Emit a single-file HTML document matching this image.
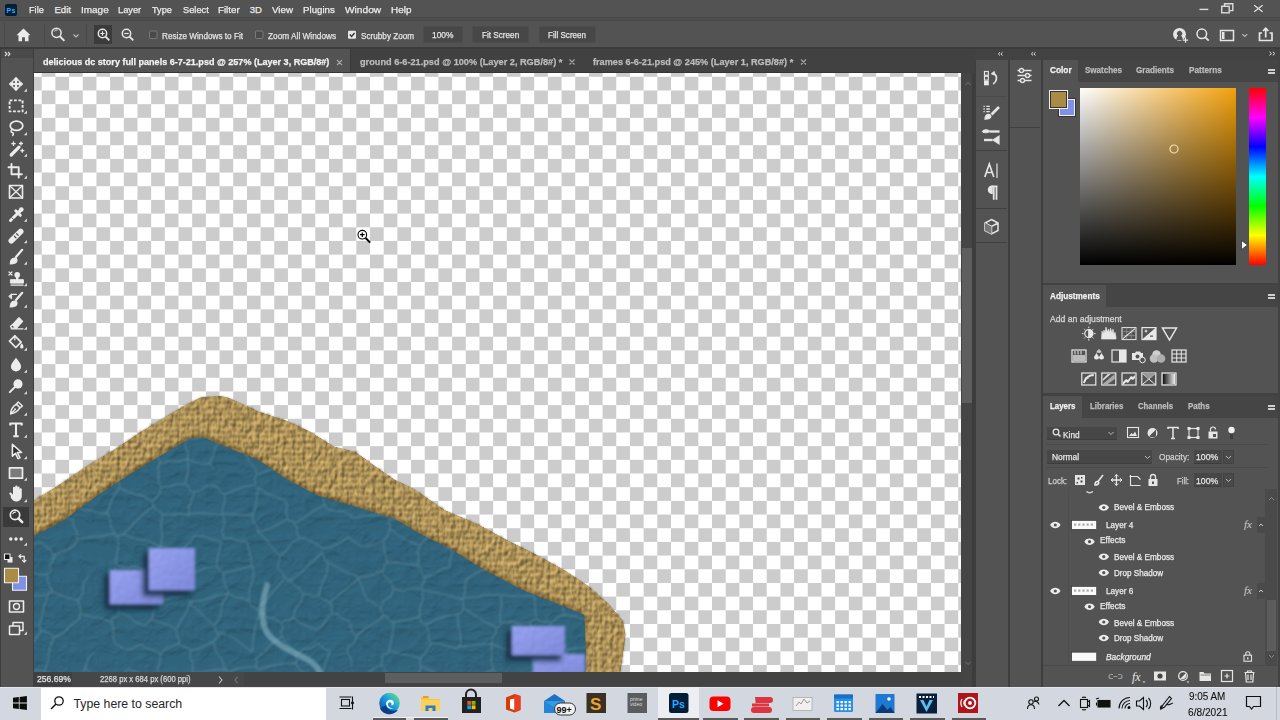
<!DOCTYPE html>
<html><head><meta charset="utf-8">
<style>
*{margin:0;padding:0;box-sizing:border-box}
html,body{width:1280px;height:720px;overflow:hidden;background:#535353;font-family:"Liberation Sans",sans-serif}
.a{position:absolute}
.t{position:absolute;white-space:nowrap;line-height:1;color:#e8e8e8;-webkit-text-stroke:0.25px currentColor}
svg{position:absolute;overflow:visible}
</style></head><body>
<div class="a" style="left:0px;top:0px;width:1280px;height:18px;background:#535353;"></div>
<div class="a" style="left:0px;top:17px;width:1280px;height:4px;background:#4f4f4f;"></div>
<div class="a" style="left:0px;top:17px;width:1280px;height:1px;background:#474747;"></div>
<div class="a" style="left:0px;top:20px;width:1280px;height:1px;background:#494949;"></div>
<svg class="a" style="left:5px;top:4px" width="12" height="12" viewBox="0 0 12 12"><rect width="12" height="12" rx="2" fill="#001e36"/><text x="1.6" y="9" font-family="Liberation Sans" font-weight="bold" font-size="7.2" fill="#31a8ff">Ps</text></svg>
<div class="t" style="left:29.40px;top:5.00px;font-size:9.60px;font-weight:normal;font-style:normal;color:#ececec;transform:scaleX(0.958);transform-origin:0 0;">File</div>
<div class="t" style="left:54.40px;top:5.00px;font-size:9.60px;font-weight:normal;font-style:normal;color:#ececec;">Edit</div>
<div class="t" style="left:80.60px;top:5.00px;font-size:9.60px;font-weight:normal;font-style:normal;color:#ececec;transform:scaleX(1.038);transform-origin:0 0;">Image</div>
<div class="t" style="left:118.40px;top:5.00px;font-size:9.60px;font-weight:normal;font-style:normal;color:#ececec;transform:scaleX(0.967);transform-origin:0 0;">Layer</div>
<div class="t" style="left:152.00px;top:5.00px;font-size:9.60px;font-weight:normal;font-style:normal;color:#ececec;transform:scaleX(0.955);transform-origin:0 0;">Type</div>
<div class="t" style="left:182.50px;top:5.00px;font-size:9.60px;font-weight:normal;font-style:normal;color:#ececec;transform:scaleX(0.967);transform-origin:0 0;">Select</div>
<div class="t" style="left:218.20px;top:5.00px;font-size:9.60px;font-weight:normal;font-style:normal;color:#ececec;transform:scaleX(1.014);transform-origin:0 0;">Filter</div>
<div class="t" style="left:249.70px;top:5.00px;font-size:9.60px;font-weight:normal;font-style:normal;color:#ececec;">3D</div>
<div class="t" style="left:272.30px;top:5.00px;font-size:9.60px;font-weight:normal;font-style:normal;color:#ececec;transform:scaleX(1.017);transform-origin:0 0;">View</div>
<div class="t" style="left:303.10px;top:5.00px;font-size:9.60px;font-weight:normal;font-style:normal;color:#ececec;transform:scaleX(1.013);transform-origin:0 0;">Plugins</div>
<div class="t" style="left:344.80px;top:5.00px;font-size:9.60px;font-weight:normal;font-style:normal;color:#ececec;transform:scaleX(1.059);transform-origin:0 0;">Window</div>
<div class="t" style="left:391.20px;top:5.00px;font-size:9.60px;font-weight:normal;font-style:normal;color:#ececec;transform:scaleX(1.034);transform-origin:0 0;">Help</div>
<svg class="a" style="left:1190px;top:0" width="90" height="17" viewBox="0 0 90 17"><g stroke="#dcdcdc" stroke-width="1.4" fill="none"><line x1="9.5" y1="9.4" x2="18.3" y2="9.4"/><rect x="31.7" y="6.3" width="7.5" height="6.5"/><path d="M34.5 6.3V3.8h8.3v6.8h-3.6"/><path d="M64.2 5.2l8.4 6.5M72.6 5.2l-8.4 6.5"/></g></svg>
<div class="a" style="left:0px;top:21px;width:1280px;height:27px;background:#535353;"></div>
<div class="a" style="left:0px;top:47px;width:1280px;height:2px;background:#3c3c3c;"></div>
<div class="a" style="left:4px;top:22px;width:1px;height:24px;background:#4a4a4a;"></div>
<div class="a" style="left:44px;top:24px;width:1px;height:21px;background:#4a4a4a;"></div>
<div class="a" style="left:86px;top:24px;width:1px;height:21px;background:#4a4a4a;"></div>
<div class="a" style="left:94px;top:25px;width:18px;height:19px;background:#3b3b3b;"></div>
<svg class="a" style="left:0;top:20px" width="640" height="28" viewBox="0 20 640 28"><g stroke="#e6e6e6" fill="none" stroke-width="1.5"><path d="M16.5 35.3l7-6.8 7 6.8h-2v6h-3.6v-4h-2.8v4h-3.6v-6z" fill="#ececec" stroke="none"/><circle cx="56.5" cy="32.8" r="4.6"/><path d="M59.8 36.3l4.6 4.6" stroke-width="2"/><path d="M54.3 31.4a3 3 0 0 1 3.2-1.3" stroke-width="1"/><path d="M73.5 34.5l2.5 2.5 2.5-2.5" stroke="#bdbdbd" stroke-width="1.1"/><circle cx="102.5" cy="33.5" r="4.2"/><path d="M105.5 36.6l3.8 3.8" stroke-width="1.9"/><path d="M100.3 33.5h4.4M102.5 31.3v4.4" stroke-width="1.2"/><circle cx="126.5" cy="33.5" r="4.2"/><path d="M129.5 36.6l3.8 3.8" stroke-width="1.9"/><path d="M124.3 33.5h4.4" stroke-width="1.2"/><rect x="149.5" y="31" width="7.5" height="7.5" rx="1" stroke="#7a7a7a" stroke-width="1" fill="#4a4a4a"/><rect x="255.5" y="31" width="7.5" height="7.5" rx="1" stroke="#7a7a7a" stroke-width="1" fill="#4a4a4a"/><rect x="348" y="30.8" width="8" height="8" rx="1.2" fill="#e6e6e6" stroke="none"/><path d="M349.8 34.6l1.8 1.8 3-3.4" stroke="#333" stroke-width="1.4"/></g></svg>
<div class="t" style="left:161.60px;top:32.00px;font-size:9.10px;font-weight:normal;font-style:normal;color:#e4e4e4;transform:scaleX(0.901);transform-origin:0 0;">Resize Windows to Fit</div>
<div class="t" style="left:267.50px;top:32.00px;font-size:9.10px;font-weight:normal;font-style:normal;color:#e4e4e4;transform:scaleX(0.911);transform-origin:0 0;">Zoom All Windows</div>
<div class="t" style="left:360.50px;top:32.00px;font-size:9.10px;font-weight:normal;font-style:normal;color:#e4e4e4;transform:scaleX(0.899);transform-origin:0 0;">Scrubby Zoom</div>
<div class="a" style="left:423px;top:26px;width:40px;height:17px;background:#474747;border:1px solid #4d4d4d"></div>
<div class="t" style="left:432.30px;top:31.00px;font-size:9.10px;font-weight:normal;font-style:normal;color:#e6e6e6;transform:scaleX(0.923);transform-origin:0 0;">100%</div>
<div class="a" style="left:472px;top:26px;width:57px;height:17px;background:#474747;border:1px solid #4d4d4d"></div>
<div class="t" style="left:482.20px;top:31.00px;font-size:9.10px;font-weight:normal;font-style:normal;color:#e6e6e6;transform:scaleX(0.897);transform-origin:0 0;">Fit Screen</div>
<div class="a" style="left:539px;top:26px;width:57px;height:17px;background:#474747;border:1px solid #4d4d4d"></div>
<div class="t" style="left:547.80px;top:31.00px;font-size:9.10px;font-weight:normal;font-style:normal;color:#e6e6e6;transform:scaleX(0.884);transform-origin:0 0;">Fill Screen</div>
<svg class="a" style="left:1160px;top:20px" width="120" height="28" viewBox="1160 20 120 28"><g stroke="#e6e6e6" fill="none" stroke-width="1.5"><circle cx="1179.5" cy="34.3" r="6.4" fill="#e6e6e6" stroke="none"/><path d="M1176.3 40c0-2.5 1.2-3.6 1.8-4.3a2.6 2.6 0 1 1 3 0c.6.7 1.8 1.8 1.8 4.3" fill="#555" stroke="none"/><path d="M1185.5 37.5v5.2M1182.9 40.1h5.2" stroke-width="1.2"/><circle cx="1201.8" cy="33.8" r="4.8"/><path d="M1205.3 37.3l3.4 3.4" stroke-width="1.8"/><rect x="1220.5" y="30.5" width="13" height="10"/><rect x="1222" y="32" width="2.5" height="7" fill="#e6e6e6" stroke="none"/><path d="M1242.3 34.2l2.5 2.2 2.5-2.2" stroke="#bdbdbd" stroke-width="1.1"/><path d="M1262 33h-2.5v7.5h12.5v-7.5h-2.5" stroke-width="1.7"/><path d="M1265.7 37.5v-9M1263 31l2.7-2.7 2.7 2.7" stroke-width="1.7"/></g></svg>
<div class="a" style="left:34px;top:49px;width:941px;height:24px;background:#414141;"></div>
<div class="a" style="left:34px;top:49px;width:316px;height:24px;background:#535353;"></div>
<div class="a" style="left:350px;top:49px;width:1px;height:24px;background:#3a3a3a;"></div>
<div class="a" style="left:34px;top:72px;width:927px;height:1px;background:#353535;"></div>
<div class="t" style="left:42.50px;top:57.00px;font-size:9.60px;font-weight:bold;font-style:normal;color:#f4f4f4;transform:scaleX(0.943);transform-origin:0 0;">delicious dc story full panels 6-7-21.psd @ 257% (Layer 3, RGB/8#)</div>
<svg class="a" style="left:330px;top:55px" width="500" height="14" viewBox="330 55 500 14"><path d="M337 60l5 5M342 60l-5 5M569.5 59.5l5 5M574.5 59.5l-5 5M801 59.5l5 5M806 59.5l-5 5" stroke="#a8a8a8" stroke-width="1.1" fill="none"/></svg>
<div class="t" style="left:359.50px;top:57.00px;font-size:9.60px;font-weight:bold;font-style:normal;color:#bcbcbc;transform:scaleX(0.957);transform-origin:0 0;">ground 6-6-21.psd @ 100% (Layer 2, RGB/8#) *</div>
<div class="t" style="left:592.70px;top:57.00px;font-size:9.60px;font-weight:bold;font-style:normal;color:#bcbcbc;transform:scaleX(0.954);transform-origin:0 0;">frames 6-6-21.psd @ 245% (Layer 1, RGB/8#) *</div>
<div class="a" style="left:0px;top:49px;width:34px;height:638px;background:#3e3e3e;"></div>
<div class="a" style="left:1px;top:58px;width:32px;height:629px;background:#535353;"></div>
<div class="a" style="left:1px;top:49px;width:32px;height:9px;background:#4a4a4a;"></div>
<svg class="a" style="left:4px;top:51px" width="8" height="6" viewBox="0 0 8 6"><path d="M1 1l2 2-2 2M4 1l2 2-2 2" stroke="#ddd" stroke-width="1.1" fill="none"/></svg>
<div class="a" style="left:3px;top:507px;width:26px;height:20px;background:#3a3a3a;"></div>
<svg class="a" style="left:0;top:0" width="34" height="687" viewBox="0 0 34 687"><g stroke="#ececec" fill="none" stroke-width="1.8" stroke-linecap="round" stroke-linejoin="round"><path d="M16 79v10M11 84h10" stroke-width="2.2"/><path d="M13.2 80.4l2.8-3.2 2.8 3.2zM13.2 87.6l2.8 3.2 2.8-3.2zM12.4 81.2l-3.2 2.8 3.2 2.8zM19.6 81.2l3.2 2.8-3.2 2.8z" fill="#ececec" stroke-width="1"/><path d="M23.8 91.8h3.2v-3.2z" fill="#d8d8d8" stroke="none"/><rect x="9.6" y="100.4" width="13" height="11" stroke-dasharray="2.8 1.6" stroke-linecap="butt" stroke-width="1.9"/><path d="M23.8 113.8h3.2v-3.2z" fill="#d8d8d8" stroke="none"/><ellipse cx="16.5" cy="125.7" rx="6.3" ry="4.6" stroke-width="1.7"/><path d="M12.2 129.3c-1.5 1.2-1.6 3 0 3.3 1.4.3 1.6 1.6.5 2.8" stroke-width="1.5"/><path d="M23.8 135.3h3.2v-3.2z" fill="#d8d8d8" stroke="none"/><path d="M11.2 155l7.8-7.8" stroke-width="3.2"/><path d="M13.5 142v3.4M11.8 143.7h3.4M21 142v3M19.5 143.5h3M22.3 149.2v3M20.8 150.7h3" stroke-width="1.3"/><path d="M23.8 156.8h3.2v-3.2z" fill="#d8d8d8" stroke="none"/><path d="M11.5 164v10.2h10.3M8.5 167.2h10.2v10.3" stroke-width="1.9"/><path d="M23.8 178.8h3.2v-3.2z" fill="#d8d8d8" stroke="none"/><rect x="9.5" y="185.5" width="13" height="12.5" stroke-width="1.6"/><path d="M9.5 185.5l13 12.5M22.5 185.5l-13 12.5" stroke-width="1.3"/><path d="M10.5 220.5l6.8-6.8" stroke-width="3"/><path d="M15.8 210.8l4.5 4.5" stroke-width="3"/><path d="M18.5 212.5l3-3" stroke-width="3.4"/><circle cx="21.3" cy="209.5" r="2.3" fill="#ececec" stroke="none"/><path d="M11.6 217.6l2.2 2.2" stroke="#535353" stroke-width="0.9"/><path d="M23.8 221.8h3.2v-3.2z" fill="#d8d8d8" stroke="none"/><path d="M11.3 240.8l9.4-9.4" stroke-width="5.6" stroke-linecap="round"/><path d="M14.3 236.1l1.6 1.6M16.6 233.8l1.6 1.6" stroke="#535353" stroke-width="1.3"/><path d="M23.8 243.3h3.2v-3.2z" fill="#d8d8d8" stroke="none"/><path d="M16 257l6.2-7.2" stroke-width="2.2"/><path d="M10.2 264c.1-3.5 1.6-6 4.3-6 1.6 0 2.7 1.1 2.5 2.7-.3 2.5-3.3 3.3-6.8 3.3z" fill="#ececec" stroke-width="1.1"/><path d="M23.8 264.8h3.2v-3.2z" fill="#d8d8d8" stroke="none"/><path d="M9 272.0l3 3M12 272.0l-3 3" stroke-width="1.2"/><circle cx="17.2" cy="274.9" r="2.8" fill="#ececec" stroke="none"/><path d="M17.2 277.5v2.5" stroke-width="2.4"/><path d="M10.8 279.7h12.6v3.4H10.8z" fill="#ececec" stroke-width="1"/><path d="M11 285.1h12.2" stroke-width="1.2"/><path d="M23.8 286.3h3.2v-3.2z" fill="#d8d8d8" stroke="none"/><path d="M16 300l6.2-7.2" stroke-width="2.2"/><path d="M10.2 307c.1-3.5 1.6-6 4.3-6 1.6 0 2.7 1.1 2.5 2.7-.3 2.5-3.3 3.3-6.8 3.3z" fill="#ececec" stroke-width="1.1"/><path d="M9 296.2l2.6-2.3v4.6z" fill="#ececec" stroke-width="1"/><path d="M12.5 294.4h3.8" stroke-width="1.3"/><path d="M23.8 307.8h3.2v-3.2z" fill="#d8d8d8" stroke="none"/><path d="M12.6 324.6l6.4-6.8 3.6 3.6-6.4 6.8z" fill="#ececec" stroke-width="1.3"/><path d="M12.6 324.6l3.6 3.6h-4.2l-1.6-1.6z" stroke-width="1.3"/><path d="M11 328.8h12" stroke-width="1.2"/><path d="M23.8 329.8h3.2v-3.2z" fill="#d8d8d8" stroke="none"/><path d="M9.5 341.2l5.3-5.3 6.3 6.3-5.3 5.3z" stroke-width="1.7"/><path d="M14.8 335.5v4.3" stroke-width="1.3"/><path d="M21.8 343.3c1.1 1.6 1.7 2.7 1.7 3.6a1.7 1.7 0 0 1-3.4 0c0-.9.6-2 1.7-3.6z" fill="#ececec" stroke="none"/><path d="M23.8 350.8h3.2v-3.2z" fill="#d8d8d8" stroke="none"/><path d="M16 357.7c2.7 3.7 5.1 6.2 5.1 8.8a5.1 5.1 0 0 1-10.2 0c0-2.6 2.4-5.1 5.1-8.8z" fill="#ececec" stroke="none"/><path d="M23.8 372.8h3.2v-3.2z" fill="#d8d8d8" stroke="none"/><circle cx="18" cy="383.9" r="4.6" fill="#ececec" stroke="none"/><path d="M14.8 387.1l-5 5" stroke-width="2"/><path d="M23.8 394.3h3.2v-3.2z" fill="#d8d8d8" stroke="none"/><path d="M10.8 413.8c0-4.2 1.6-7.3 5.6-9.7l3.6 3.6c-2.5 4-5.5 5.7-9.2 6.1z" stroke-width="1.6"/><path d="M16.4 404.1l1.8-2.2 4.2 4.2-2.2 1.6M10.8 413.8l3.4-3.4" stroke-width="1.4"/><circle cx="15" cy="409.3" r="1" fill="#ececec" stroke="none"/><path d="M23.8 415.8h3.2v-3.2z" fill="#d8d8d8" stroke="none"/><path d="M10.3 425.5v-2h11.4v2M16 423.5v12.8M13.3 436.3h5.4" stroke-width="2.1" stroke-linecap="butt"/><path d="M23.8 437.8h3.2v-3.2z" fill="#d8d8d8" stroke="none"/><path d="M12.4 444.3v12l3.1-3 2.6 5.3 1.8-.9-2.6-5.2h4.3z" fill="#2f2f2f" stroke-width="1.6"/><path d="M23.8 459.3h3.2v-3.2z" fill="#d8d8d8" stroke="none"/><rect x="9.5" y="467.8" width="13" height="10.4" fill="#7a7a7a" stroke-width="1.7"/><path d="M23.8 480.8h3.2v-3.2z" fill="#d8d8d8" stroke="none"/><path d="M10.8 495.7l-1.3-1.7c-.7-1 .7-2.1 1.6-1.2l1.9 2v-7a1.1 1.1 0 0 1 2.2 0v5.5-6.6a1.1 1.1 0 0 1 2.2 0v6.6-5.8a1.1 1.1 0 0 1 2.2 0v6-4.2a1.1 1.1 0 0 1 2.2 0v6.5c0 3.3-2.2 5.8-5.5 5.8-2.7 0-3.8-1.6-5.5-3.9z" fill="#ececec" stroke="none"/><path d="M23.8 502.3h3.2v-3.2z" fill="#d8d8d8" stroke="none"/><circle cx="15" cy="514.9" r="4.7" stroke-width="1.7"/><path d="M18.4 518.4l3.8 3.8" stroke-width="2.6"/><path d="M12.8 513.7a2.6 2.6 0 0 1 2.6-1.6" stroke-width="1.1"/><circle cx="10.8" cy="539" r="1.7" fill="#ececec" stroke="none"/><circle cx="16" cy="539" r="1.7" fill="#ececec" stroke="none"/><circle cx="21.2" cy="539" r="1.7" fill="#ececec" stroke="none"/><path d="M23.8 545.8h3.2v-3.2z" fill="#d8d8d8" stroke="none"/><rect x="7.5" y="557" width="5" height="5.5" fill="#ececec" stroke="none"/><rect x="4.5" y="554" width="5.5" height="5.5" fill="#111" stroke="#ececec" stroke-width="1.1"/><path d="M19.6 556.3h4.6v5.2" stroke-width="1.3"/><path d="M20.8 554.6l-1.9 1.7 1.9 1.7M22.5 560.3l1.7 1.9 1.7-1.9" stroke-width="1.2"/><rect x="12.5" y="576.3" width="14" height="14" fill="#8090e6" stroke="#f2f2f2" stroke-width="1.1"/><rect x="4.5" y="568.3" width="14" height="14.5" fill="#a98b46" stroke="#f2f2f2" stroke-width="1.1"/><rect x="9.5" y="601" width="14" height="11" stroke-width="1.6"/><circle cx="16.5" cy="606.5" r="3" stroke-width="1.3"/><rect x="13" y="622.5" width="10" height="8" stroke-width="1.5"/><rect x="9.5" y="626" width="10" height="8.5" fill="#535353" stroke-width="1.5"/><path d="M23.8 634.8h3.2v-3.2z" fill="#d8d8d8" stroke="none"/></g></svg>
<div class="a" style="left:34px;top:73px;width:927px;height:599px;background:conic-gradient(#ffffff 0 90deg,#cccccc 90deg 180deg,#ffffff 180deg 270deg,#cccccc 270deg) -5.98px 3.8px/27.36px 27.36px"></div>
<svg class="a" style="left:34px;top:73px" width="927" height="599" viewBox="0 0 927 599">
<defs>
<filter id="gbump" x="0" y="0" width="100%" height="100%" color-interpolation-filters="sRGB">
 <feTurbulence type="fractalNoise" baseFrequency="0.2 0.11" numOctaves="2" seed="4" result="n"/>
 <feDiffuseLighting in="n" surfaceScale="2.2" diffuseConstant="1" lighting-color="#ffffff" result="l"><feDistantLight azimuth="235" elevation="50"/></feDiffuseLighting>
 <feComposite in="SourceGraphic" in2="l" operator="arithmetic" k1="0.75" k2="0.45" k3="0" k4="0" result="c"/>
 <feComposite in="c" in2="SourceGraphic" operator="in"/>
</filter>
<filter id="bbump" x="0" y="0" width="100%" height="100%" color-interpolation-filters="sRGB">
 <feTurbulence type="turbulence" baseFrequency="0.035 0.045" numOctaves="3" seed="11" result="n"/>
 <feColorMatrix in="n" type="matrix" values="0 0 0 0 0  0 0 0 0 0  0 0 0 0 0  -2.5 0 0 0 1.2" result="cr"/>
 <feDiffuseLighting in="cr" surfaceScale="1.2" diffuseConstant="1.0" lighting-color="#ffffff" result="l"><feDistantLight azimuth="235" elevation="60"/></feDiffuseLighting>
 <feComposite in="SourceGraphic" in2="l" operator="arithmetic" k1="0.3" k2="0.74" k3="0" k4="0" result="c"/>
 <feComposite in="c" in2="SourceGraphic" operator="in"/>
</filter>
<filter id="sqf" x="0" y="0" width="100%" height="100%" color-interpolation-filters="sRGB">
 <feTurbulence type="fractalNoise" baseFrequency="0.2" numOctaves="2" seed="8" result="n"/>
 <feDiffuseLighting in="n" surfaceScale="1.2" diffuseConstant="1" lighting-color="#ffffff" result="l"><feDistantLight azimuth="235" elevation="60"/></feDiffuseLighting>
 <feComposite in="SourceGraphic" in2="l" operator="arithmetic" k1="0.3" k2="0.74" k3="0" k4="0" result="c"/>
 <feComposite in="c" in2="SourceGraphic" operator="in"/>
</filter>
<filter id="sh" x="-20%" y="-20%" width="140%" height="140%"><feGaussianBlur stdDeviation="2.5"/></filter>
<filter id="bl" x="-20%" y="-20%" width="140%" height="140%"><feGaussianBlur stdDeviation="0.9"/></filter>
<filter id="bl2" x="-20%" y="-20%" width="140%" height="140%"><feGaussianBlur stdDeviation="1.4"/></filter>
<pattern id="dots" width="5.3" height="5.6" patternUnits="userSpaceOnUse"><rect width="5.3" height="5.6" fill="#000" opacity="0"/><circle cx="2.6" cy="2.9" r="1.3" fill="#3c2a0c" opacity="0.75"/><circle cx="1.6" cy="1.8" r="0.9" fill="#f2dc9c" opacity="0.5"/></pattern>
<filter id="dblur" x="0" y="0" width="100%" height="100%"><feGaussianBlur stdDeviation="0.9"/></filter>
<clipPath id="cp"><rect width="927" height="599"/></clipPath>
</defs>
<g clip-path="url(#cp)">
<polygon points="0.0,427.6 24.9,412.0 51.6,394.0 80.4,376.4 107.0,358.7 129.3,345.3 151.6,332.0 167.0,324.2 187.0,323.0 195.0,324.8 224.4,338.4 253.5,348.0 275.0,358.0 300.0,373.4 321.6,379.0 341.0,393.0 360.5,406.5 380.0,416.0 411.7,437.6 442.6,450.4 470.8,465.8 501.7,481.3 530.0,496.7 553.0,512.0 573.7,530.0 589.0,548.0 591.6,561.0 589.0,581.5 586.5,599.0 586.5,617.0 -14.0,617.0 -14.0,427.0" fill="#2a2010" opacity="0.5" filter="url(#bl)" transform="translate(-0.5,0.5)"/>
<polygon points="0.0,427.6 24.9,412.0 51.6,394.0 80.4,376.4 107.0,358.7 129.3,345.3 151.6,332.0 167.0,324.2 187.0,323.0 195.0,324.8 224.4,338.4 253.5,348.0 275.0,358.0 300.0,373.4 321.6,379.0 341.0,393.0 360.5,406.5 380.0,416.0 411.7,437.6 442.6,450.4 470.8,465.8 501.7,481.3 530.0,496.7 553.0,512.0 573.7,530.0 589.0,548.0 591.6,561.0 589.0,581.5 586.5,599.0 586.5,617.0 -14.0,617.0 -14.0,427.0" fill="#b69a5e" filter="url(#gbump)"/>
<g fill="#f6e2a6" opacity="0.35" filter="url(#dblur)"><circle cx="168.1" cy="322.9" r="1.0"/><circle cx="171.9" cy="323.2" r="1.3"/><circle cx="178.3" cy="323.0" r="1.4"/><circle cx="183.8" cy="322.4" r="1.1"/><circle cx="187.7" cy="323.5" r="1.0"/><circle cx="156.3" cy="328.6" r="1.5"/><circle cx="161.2" cy="327.9" r="1.1"/><circle cx="166.5" cy="328.0" r="1.1"/><circle cx="173.3" cy="327.6" r="1.1"/><circle cx="178.2" cy="327.3" r="1.0"/><circle cx="184.4" cy="327.1" r="1.1"/><circle cx="188.5" cy="326.7" r="1.5"/><circle cx="192.8" cy="326.8" r="1.6"/><circle cx="199.1" cy="328.9" r="1.6"/><circle cx="145.7" cy="332.5" r="1.2"/><circle cx="152.3" cy="334.1" r="1.2"/><circle cx="157.1" cy="334.2" r="1.5"/><circle cx="160.9" cy="332.7" r="1.6"/><circle cx="166.8" cy="334.2" r="1.4"/><circle cx="173.5" cy="332.5" r="1.6"/><circle cx="178.8" cy="332.9" r="1.4"/><circle cx="182.0" cy="334.4" r="1.3"/><circle cx="189.1" cy="334.2" r="1.0"/><circle cx="194.7" cy="332.6" r="1.1"/><circle cx="199.0" cy="332.9" r="1.4"/><circle cx="203.7" cy="333.8" r="1.5"/><circle cx="210.8" cy="333.3" r="1.2"/><circle cx="215.2" cy="333.9" r="1.6"/><circle cx="135.6" cy="340.0" r="1.3"/><circle cx="140.1" cy="340.0" r="1.5"/><circle cx="145.2" cy="339.7" r="1.3"/><circle cx="150.6" cy="338.7" r="1.5"/><circle cx="155.9" cy="339.4" r="1.3"/><circle cx="162.1" cy="338.3" r="1.5"/><circle cx="167.4" cy="339.6" r="1.4"/><circle cx="172.2" cy="339.7" r="1.2"/><circle cx="178.9" cy="339.0" r="1.1"/><circle cx="183.1" cy="338.8" r="1.6"/><circle cx="188.0" cy="340.0" r="1.0"/><circle cx="192.9" cy="338.6" r="1.5"/><circle cx="199.3" cy="338.9" r="1.3"/><circle cx="205.2" cy="338.4" r="1.5"/><circle cx="209.4" cy="339.6" r="1.5"/><circle cx="214.8" cy="338.4" r="1.1"/><circle cx="219.7" cy="338.1" r="1.3"/><circle cx="225.9" cy="338.8" r="1.6"/><circle cx="232.0" cy="339.8" r="1.5"/><circle cx="131.4" cy="345.6" r="1.1"/><circle cx="134.5" cy="344.7" r="1.4"/><circle cx="141.5" cy="344.0" r="1.3"/><circle cx="146.0" cy="344.2" r="1.4"/><circle cx="151.5" cy="344.5" r="1.5"/><circle cx="156.2" cy="344.9" r="1.5"/><circle cx="161.6" cy="343.6" r="1.0"/><circle cx="168.0" cy="345.5" r="1.4"/><circle cx="171.5" cy="344.1" r="1.6"/><circle cx="178.0" cy="344.5" r="1.6"/><circle cx="184.3" cy="344.1" r="1.4"/><circle cx="189.3" cy="345.5" r="1.6"/><circle cx="194.4" cy="343.7" r="1.2"/><circle cx="198.4" cy="345.0" r="1.3"/><circle cx="205.5" cy="344.1" r="1.1"/><circle cx="208.6" cy="344.0" r="1.6"/><circle cx="215.3" cy="344.1" r="1.4"/><circle cx="220.7" cy="344.3" r="1.0"/><circle cx="226.1" cy="344.9" r="1.0"/><circle cx="230.9" cy="343.8" r="1.3"/><circle cx="236.8" cy="344.9" r="1.2"/><circle cx="242.1" cy="344.1" r="1.4"/><circle cx="246.3" cy="345.0" r="1.4"/><circle cx="115.4" cy="350.2" r="1.4"/><circle cx="120.7" cy="350.8" r="1.5"/><circle cx="125.5" cy="349.2" r="1.5"/><circle cx="130.7" cy="349.9" r="1.0"/><circle cx="135.1" cy="350.4" r="1.2"/><circle cx="141.0" cy="350.1" r="1.4"/><circle cx="147.1" cy="349.1" r="1.4"/><circle cx="152.1" cy="349.2" r="1.3"/><circle cx="157.4" cy="350.7" r="1.2"/><circle cx="161.6" cy="349.2" r="1.3"/><circle cx="168.1" cy="351.1" r="1.4"/><circle cx="172.6" cy="349.7" r="1.2"/><circle cx="177.1" cy="349.9" r="1.0"/><circle cx="183.1" cy="351.0" r="1.2"/><circle cx="189.4" cy="350.4" r="1.5"/><circle cx="195.0" cy="349.4" r="1.2"/><circle cx="198.3" cy="349.4" r="1.4"/><circle cx="203.2" cy="350.5" r="1.6"/><circle cx="209.5" cy="350.7" r="1.1"/><circle cx="215.6" cy="351.0" r="1.4"/><circle cx="221.3" cy="350.4" r="1.4"/><circle cx="224.4" cy="351.1" r="1.2"/><circle cx="231.4" cy="350.3" r="1.1"/><circle cx="236.1" cy="351.3" r="1.4"/><circle cx="240.6" cy="350.4" r="1.6"/><circle cx="245.7" cy="349.1" r="1.5"/><circle cx="252.3" cy="350.9" r="1.2"/><circle cx="257.6" cy="349.5" r="1.1"/><circle cx="262.8" cy="351.1" r="1.3"/><circle cx="104.3" cy="357.0" r="1.1"/><circle cx="110.2" cy="356.0" r="1.1"/><circle cx="114.9" cy="356.5" r="1.2"/><circle cx="119.8" cy="355.2" r="1.4"/><circle cx="124.2" cy="355.6" r="1.5"/><circle cx="130.9" cy="356.3" r="1.6"/><circle cx="136.2" cy="356.1" r="1.4"/><circle cx="139.9" cy="354.8" r="1.1"/><circle cx="146.7" cy="357.1" r="1.1"/><circle cx="152.6" cy="356.7" r="1.1"/><circle cx="156.8" cy="355.3" r="1.5"/><circle cx="161.7" cy="355.6" r="1.3"/><circle cx="166.8" cy="356.6" r="1.4"/><circle cx="171.5" cy="356.1" r="1.3"/><circle cx="178.9" cy="357.0" r="1.0"/><circle cx="183.8" cy="356.2" r="1.3"/><circle cx="187.6" cy="356.8" r="1.4"/><circle cx="194.1" cy="357.0" r="1.1"/><circle cx="198.8" cy="354.8" r="1.2"/><circle cx="205.6" cy="355.6" r="1.5"/><circle cx="210.6" cy="356.0" r="1.5"/><circle cx="214.3" cy="354.9" r="1.1"/><circle cx="219.3" cy="354.9" r="1.0"/><circle cx="224.6" cy="355.0" r="1.3"/><circle cx="230.4" cy="357.1" r="1.4"/><circle cx="237.2" cy="356.5" r="1.6"/><circle cx="242.6" cy="355.6" r="1.1"/><circle cx="245.8" cy="357.0" r="1.1"/><circle cx="253.3" cy="356.4" r="1.5"/><circle cx="256.3" cy="356.9" r="1.0"/><circle cx="263.4" cy="354.8" r="1.6"/><circle cx="266.9" cy="355.1" r="1.3"/><circle cx="98.8" cy="362.1" r="1.4"/><circle cx="104.2" cy="360.5" r="1.1"/><circle cx="109.9" cy="361.0" r="1.4"/><circle cx="114.8" cy="361.5" r="1.0"/><circle cx="119.8" cy="361.4" r="1.2"/><circle cx="124.8" cy="361.7" r="1.0"/><circle cx="129.9" cy="360.8" r="1.3"/><circle cx="134.7" cy="361.3" r="1.3"/><circle cx="140.0" cy="360.9" r="1.4"/><circle cx="146.4" cy="362.5" r="1.4"/><circle cx="151.6" cy="362.7" r="1.6"/><circle cx="156.7" cy="361.5" r="1.6"/><circle cx="161.7" cy="362.3" r="1.1"/><circle cx="166.5" cy="361.0" r="1.3"/><circle cx="172.3" cy="360.8" r="1.0"/><circle cx="176.9" cy="362.5" r="1.5"/><circle cx="183.9" cy="361.8" r="1.3"/><circle cx="188.4" cy="362.0" r="1.3"/><circle cx="194.7" cy="360.9" r="1.3"/><circle cx="199.8" cy="361.7" r="1.5"/><circle cx="205.0" cy="361.2" r="1.3"/><circle cx="208.6" cy="361.2" r="1.6"/><circle cx="214.0" cy="362.5" r="1.5"/><circle cx="221.0" cy="360.7" r="1.5"/><circle cx="226.7" cy="361.1" r="1.1"/><circle cx="230.1" cy="360.9" r="1.2"/><circle cx="235.2" cy="360.8" r="1.2"/><circle cx="242.1" cy="362.7" r="1.0"/><circle cx="247.8" cy="362.4" r="1.6"/><circle cx="252.1" cy="361.2" r="1.1"/><circle cx="256.9" cy="360.9" r="1.2"/><circle cx="262.5" cy="360.5" r="1.1"/><circle cx="267.8" cy="360.4" r="1.5"/><circle cx="273.8" cy="360.9" r="1.5"/><circle cx="279.7" cy="362.2" r="1.2"/><circle cx="93.4" cy="366.5" r="1.6"/><circle cx="98.8" cy="366.3" r="1.5"/><circle cx="104.3" cy="368.2" r="1.6"/><circle cx="109.0" cy="366.2" r="1.1"/><circle cx="113.2" cy="366.3" r="1.5"/><circle cx="118.4" cy="367.0" r="1.4"/><circle cx="124.2" cy="367.4" r="1.4"/><circle cx="130.3" cy="366.0" r="1.4"/><circle cx="134.5" cy="366.0" r="1.5"/><circle cx="141.6" cy="368.1" r="1.1"/><circle cx="145.6" cy="366.4" r="1.2"/><circle cx="182.3" cy="366.0" r="1.5"/><circle cx="187.8" cy="368.0" r="1.6"/><circle cx="193.1" cy="366.6" r="1.3"/><circle cx="198.6" cy="366.0" r="1.3"/><circle cx="203.5" cy="367.2" r="1.1"/><circle cx="210.0" cy="367.8" r="1.1"/><circle cx="216.0" cy="367.6" r="1.4"/><circle cx="220.7" cy="366.6" r="1.0"/><circle cx="226.0" cy="366.8" r="1.5"/><circle cx="230.2" cy="367.7" r="1.5"/><circle cx="236.7" cy="367.4" r="1.2"/><circle cx="242.6" cy="366.6" r="1.2"/><circle cx="247.7" cy="368.1" r="1.3"/><circle cx="251.0" cy="367.3" r="1.5"/><circle cx="258.5" cy="366.5" r="1.5"/><circle cx="263.3" cy="368.0" r="1.5"/><circle cx="268.4" cy="367.0" r="1.2"/><circle cx="273.7" cy="366.5" r="1.4"/><circle cx="277.6" cy="366.6" r="1.0"/><circle cx="282.9" cy="366.1" r="1.0"/><circle cx="288.4" cy="366.3" r="1.5"/><circle cx="83.0" cy="373.2" r="1.3"/><circle cx="87.7" cy="372.3" r="1.6"/><circle cx="92.8" cy="372.1" r="1.5"/><circle cx="98.4" cy="372.5" r="1.6"/><circle cx="102.7" cy="371.7" r="1.3"/><circle cx="107.9" cy="373.6" r="1.6"/><circle cx="113.8" cy="373.6" r="1.3"/><circle cx="119.7" cy="372.5" r="1.6"/><circle cx="124.5" cy="373.7" r="1.2"/><circle cx="129.6" cy="373.9" r="1.0"/><circle cx="134.6" cy="373.0" r="1.6"/><circle cx="192.9" cy="372.4" r="1.3"/><circle cx="199.0" cy="371.9" r="1.2"/><circle cx="203.7" cy="373.5" r="1.5"/><circle cx="210.8" cy="372.5" r="1.5"/><circle cx="214.3" cy="372.3" r="1.2"/><circle cx="219.8" cy="372.0" r="1.6"/><circle cx="225.5" cy="373.2" r="1.1"/><circle cx="231.4" cy="373.2" r="1.6"/><circle cx="235.6" cy="373.8" r="1.5"/><circle cx="240.7" cy="372.5" r="1.2"/><circle cx="248.0" cy="373.1" r="1.1"/><circle cx="252.1" cy="373.3" r="1.0"/><circle cx="258.0" cy="373.1" r="1.5"/><circle cx="261.9" cy="373.8" r="1.2"/><circle cx="268.4" cy="372.1" r="1.0"/><circle cx="272.2" cy="372.9" r="1.6"/><circle cx="279.0" cy="371.6" r="1.0"/><circle cx="285.1" cy="372.5" r="1.5"/><circle cx="289.8" cy="373.3" r="1.5"/><circle cx="294.2" cy="372.2" r="1.0"/><circle cx="72.4" cy="377.6" r="1.3"/><circle cx="76.3" cy="379.0" r="1.2"/><circle cx="81.7" cy="377.8" r="1.4"/><circle cx="87.7" cy="377.8" r="1.2"/><circle cx="92.7" cy="378.2" r="1.2"/><circle cx="98.8" cy="377.9" r="1.0"/><circle cx="102.7" cy="378.0" r="1.6"/><circle cx="108.8" cy="378.0" r="1.0"/><circle cx="114.3" cy="377.2" r="1.1"/><circle cx="118.9" cy="377.9" r="1.1"/><circle cx="124.1" cy="377.1" r="1.3"/><circle cx="210.1" cy="378.3" r="1.4"/><circle cx="215.3" cy="378.8" r="1.5"/><circle cx="220.8" cy="379.2" r="1.3"/><circle cx="226.4" cy="378.9" r="1.0"/><circle cx="231.0" cy="379.3" r="1.3"/><circle cx="235.9" cy="378.0" r="1.5"/><circle cx="241.1" cy="377.6" r="1.4"/><circle cx="248.0" cy="378.6" r="1.0"/><circle cx="251.1" cy="377.8" r="1.4"/><circle cx="258.4" cy="378.9" r="1.1"/><circle cx="263.1" cy="379.0" r="1.3"/><circle cx="267.3" cy="378.4" r="1.3"/><circle cx="272.9" cy="377.1" r="1.2"/><circle cx="279.2" cy="377.9" r="1.4"/><circle cx="283.7" cy="377.6" r="1.5"/><circle cx="290.2" cy="378.8" r="1.5"/><circle cx="294.3" cy="379.2" r="1.6"/><circle cx="300.0" cy="378.8" r="1.1"/><circle cx="304.0" cy="378.7" r="1.2"/><circle cx="309.9" cy="378.5" r="1.0"/><circle cx="315.9" cy="378.8" r="1.5"/><circle cx="319.8" cy="377.3" r="1.5"/><circle cx="67.1" cy="383.4" r="1.1"/><circle cx="71.9" cy="382.9" r="1.1"/><circle cx="77.9" cy="383.4" r="1.1"/><circle cx="82.5" cy="383.2" r="1.6"/><circle cx="87.8" cy="384.3" r="1.6"/><circle cx="93.1" cy="384.4" r="1.3"/><circle cx="99.2" cy="383.9" r="1.3"/><circle cx="104.7" cy="383.8" r="1.2"/><circle cx="109.9" cy="384.1" r="1.4"/><circle cx="114.2" cy="383.8" r="1.5"/><circle cx="220.0" cy="383.7" r="1.5"/><circle cx="225.9" cy="383.3" r="1.2"/><circle cx="231.0" cy="382.9" r="1.5"/><circle cx="236.8" cy="382.9" r="1.0"/><circle cx="240.4" cy="383.9" r="1.1"/><circle cx="246.7" cy="383.9" r="1.5"/><circle cx="252.2" cy="382.8" r="1.2"/><circle cx="258.1" cy="384.6" r="1.5"/><circle cx="263.2" cy="383.2" r="1.2"/><circle cx="267.6" cy="383.3" r="1.4"/><circle cx="272.8" cy="384.5" r="1.0"/><circle cx="279.0" cy="383.3" r="1.5"/><circle cx="284.8" cy="384.0" r="1.0"/><circle cx="288.2" cy="384.5" r="1.1"/><circle cx="294.6" cy="384.7" r="1.5"/><circle cx="301.0" cy="384.2" r="1.2"/><circle cx="305.2" cy="383.8" r="1.2"/><circle cx="311.6" cy="384.8" r="1.2"/><circle cx="316.8" cy="385.1" r="1.3"/><circle cx="321.2" cy="383.9" r="1.3"/><circle cx="327.0" cy="384.5" r="1.0"/><circle cx="56.7" cy="388.9" r="1.1"/><circle cx="61.7" cy="388.9" r="1.4"/><circle cx="67.3" cy="389.8" r="1.5"/><circle cx="71.3" cy="390.1" r="1.4"/><circle cx="77.0" cy="389.8" r="1.4"/><circle cx="81.7" cy="388.9" r="1.3"/><circle cx="87.1" cy="389.4" r="1.2"/><circle cx="93.2" cy="388.7" r="1.4"/><circle cx="98.9" cy="389.5" r="1.2"/><circle cx="103.0" cy="390.3" r="1.6"/><circle cx="109.7" cy="389.1" r="1.5"/><circle cx="231.4" cy="390.0" r="1.5"/><circle cx="237.4" cy="389.0" r="1.1"/><circle cx="241.7" cy="389.1" r="1.4"/><circle cx="247.6" cy="389.0" r="1.4"/><circle cx="253.0" cy="390.2" r="1.0"/><circle cx="257.0" cy="389.3" r="1.4"/><circle cx="262.6" cy="389.1" r="1.2"/><circle cx="268.3" cy="388.5" r="1.3"/><circle cx="274.3" cy="389.8" r="1.5"/><circle cx="279.3" cy="390.5" r="1.0"/><circle cx="282.9" cy="388.7" r="1.2"/><circle cx="288.1" cy="389.8" r="1.5"/><circle cx="295.1" cy="389.4" r="1.3"/><circle cx="299.3" cy="390.6" r="1.5"/><circle cx="305.9" cy="389.5" r="1.0"/><circle cx="309.5" cy="388.5" r="1.6"/><circle cx="314.7" cy="389.6" r="1.4"/><circle cx="321.8" cy="389.6" r="1.4"/><circle cx="326.0" cy="390.3" r="1.1"/><circle cx="330.8" cy="389.1" r="1.4"/><circle cx="46.5" cy="396.2" r="1.0"/><circle cx="49.9" cy="395.7" r="1.3"/><circle cx="55.2" cy="395.9" r="1.5"/><circle cx="61.3" cy="394.9" r="1.6"/><circle cx="66.2" cy="395.4" r="1.4"/><circle cx="71.1" cy="395.6" r="1.2"/><circle cx="77.0" cy="394.5" r="1.1"/><circle cx="83.0" cy="394.1" r="1.4"/><circle cx="88.2" cy="395.7" r="1.2"/><circle cx="92.0" cy="395.3" r="1.0"/><circle cx="99.4" cy="393.9" r="1.5"/><circle cx="241.3" cy="394.2" r="1.5"/><circle cx="246.5" cy="396.0" r="1.2"/><circle cx="251.7" cy="395.6" r="1.4"/><circle cx="257.5" cy="394.3" r="1.1"/><circle cx="263.7" cy="394.9" r="1.6"/><circle cx="267.2" cy="395.4" r="1.4"/><circle cx="274.1" cy="394.4" r="1.5"/><circle cx="277.6" cy="396.2" r="1.1"/><circle cx="284.0" cy="396.2" r="1.2"/><circle cx="289.4" cy="395.1" r="1.4"/><circle cx="294.9" cy="394.7" r="1.0"/><circle cx="300.0" cy="396.0" r="1.4"/><circle cx="306.2" cy="394.2" r="1.1"/><circle cx="311.3" cy="393.9" r="1.2"/><circle cx="314.6" cy="394.5" r="1.5"/><circle cx="320.4" cy="394.1" r="1.2"/><circle cx="326.8" cy="395.5" r="1.4"/><circle cx="332.6" cy="394.9" r="1.3"/><circle cx="337.5" cy="394.1" r="1.4"/><circle cx="343.2" cy="395.0" r="1.5"/><circle cx="39.0" cy="401.2" r="1.3"/><circle cx="44.6" cy="400.0" r="1.1"/><circle cx="50.4" cy="401.8" r="1.4"/><circle cx="55.2" cy="400.4" r="1.4"/><circle cx="62.1" cy="400.1" r="1.4"/><circle cx="66.7" cy="401.8" r="1.1"/><circle cx="72.1" cy="401.0" r="1.5"/><circle cx="77.7" cy="401.7" r="1.4"/><circle cx="81.9" cy="401.1" r="1.2"/><circle cx="89.0" cy="400.1" r="1.1"/><circle cx="251.4" cy="401.6" r="1.6"/><circle cx="256.5" cy="399.6" r="1.4"/><circle cx="261.6" cy="399.9" r="1.0"/><circle cx="267.3" cy="401.5" r="1.4"/><circle cx="272.2" cy="399.9" r="1.5"/><circle cx="279.0" cy="400.9" r="1.5"/><circle cx="284.6" cy="399.6" r="1.2"/><circle cx="288.4" cy="401.6" r="1.4"/><circle cx="294.7" cy="401.5" r="1.4"/><circle cx="299.6" cy="399.7" r="1.3"/><circle cx="306.0" cy="399.6" r="1.6"/><circle cx="310.4" cy="400.5" r="1.4"/><circle cx="316.9" cy="401.5" r="1.6"/><circle cx="321.7" cy="399.6" r="1.6"/><circle cx="326.7" cy="400.1" r="1.1"/><circle cx="331.9" cy="400.3" r="1.5"/><circle cx="337.9" cy="401.0" r="1.6"/><circle cx="341.1" cy="400.6" r="1.1"/><circle cx="346.7" cy="401.9" r="1.0"/><circle cx="353.0" cy="401.6" r="1.3"/><circle cx="29.7" cy="406.8" r="1.5"/><circle cx="34.4" cy="405.2" r="1.3"/><circle cx="40.5" cy="405.4" r="1.3"/><circle cx="44.9" cy="407.0" r="1.4"/><circle cx="50.9" cy="405.1" r="1.0"/><circle cx="55.9" cy="406.4" r="1.2"/><circle cx="60.6" cy="405.4" r="1.1"/><circle cx="66.8" cy="406.4" r="1.2"/><circle cx="72.3" cy="407.0" r="1.5"/><circle cx="77.4" cy="406.9" r="1.5"/><circle cx="256.7" cy="405.2" r="1.1"/><circle cx="263.5" cy="407.2" r="1.4"/><circle cx="267.9" cy="406.7" r="1.5"/><circle cx="273.3" cy="405.3" r="1.0"/><circle cx="277.8" cy="405.7" r="1.6"/><circle cx="284.4" cy="406.6" r="1.3"/><circle cx="289.9" cy="406.4" r="1.6"/><circle cx="295.5" cy="405.7" r="1.4"/><circle cx="300.1" cy="407.4" r="1.4"/><circle cx="306.2" cy="406.2" r="1.4"/><circle cx="309.3" cy="406.0" r="1.2"/><circle cx="316.7" cy="406.0" r="1.5"/><circle cx="320.1" cy="406.2" r="1.3"/><circle cx="325.7" cy="405.9" r="1.0"/><circle cx="331.9" cy="407.4" r="1.2"/><circle cx="336.5" cy="405.5" r="1.6"/><circle cx="343.3" cy="405.6" r="1.6"/><circle cx="347.8" cy="406.2" r="1.5"/><circle cx="353.3" cy="406.9" r="1.1"/><circle cx="357.3" cy="407.2" r="1.1"/><circle cx="23.7" cy="411.6" r="1.5"/><circle cx="28.6" cy="412.6" r="1.4"/><circle cx="33.7" cy="411.3" r="1.3"/><circle cx="39.4" cy="411.8" r="1.4"/><circle cx="45.8" cy="411.6" r="1.5"/><circle cx="50.3" cy="411.3" r="1.2"/><circle cx="55.0" cy="412.8" r="1.1"/><circle cx="61.3" cy="411.5" r="1.3"/><circle cx="65.5" cy="412.7" r="1.3"/><circle cx="71.6" cy="411.0" r="1.5"/><circle cx="268.9" cy="412.0" r="1.4"/><circle cx="274.1" cy="411.2" r="1.1"/><circle cx="277.8" cy="410.8" r="1.1"/><circle cx="283.5" cy="411.1" r="1.4"/><circle cx="289.4" cy="412.7" r="1.3"/><circle cx="293.7" cy="411.8" r="1.6"/><circle cx="300.2" cy="412.8" r="1.5"/><circle cx="304.6" cy="411.4" r="1.4"/><circle cx="310.4" cy="412.3" r="1.5"/><circle cx="315.3" cy="412.9" r="1.6"/><circle cx="320.2" cy="412.3" r="1.6"/><circle cx="325.5" cy="412.3" r="1.4"/><circle cx="332.1" cy="410.9" r="1.0"/><circle cx="337.9" cy="410.8" r="1.2"/><circle cx="342.0" cy="413.1" r="1.3"/><circle cx="348.6" cy="411.9" r="1.6"/><circle cx="351.7" cy="412.8" r="1.5"/><circle cx="357.9" cy="412.9" r="1.1"/><circle cx="362.6" cy="412.4" r="1.0"/><circle cx="368.3" cy="413.1" r="1.4"/><circle cx="13.7" cy="418.3" r="1.1"/><circle cx="19.8" cy="417.2" r="1.0"/><circle cx="24.0" cy="417.1" r="1.0"/><circle cx="29.1" cy="418.2" r="1.4"/><circle cx="34.9" cy="416.9" r="1.1"/><circle cx="41.0" cy="416.3" r="1.1"/><circle cx="45.7" cy="418.7" r="1.0"/><circle cx="49.8" cy="418.3" r="1.3"/><circle cx="56.7" cy="417.9" r="1.3"/><circle cx="62.3" cy="417.3" r="1.3"/><circle cx="277.9" cy="417.6" r="1.2"/><circle cx="283.4" cy="417.4" r="1.5"/><circle cx="289.2" cy="418.6" r="1.3"/><circle cx="293.4" cy="418.6" r="1.3"/><circle cx="300.6" cy="418.7" r="1.1"/><circle cx="305.5" cy="417.7" r="1.0"/><circle cx="310.8" cy="418.0" r="1.2"/><circle cx="315.4" cy="417.5" r="1.0"/><circle cx="321.9" cy="416.5" r="1.2"/><circle cx="326.6" cy="417.8" r="1.5"/><circle cx="330.9" cy="417.9" r="1.1"/><circle cx="337.4" cy="417.7" r="1.5"/><circle cx="343.1" cy="416.3" r="1.1"/><circle cx="347.8" cy="417.1" r="1.0"/><circle cx="353.6" cy="418.6" r="1.1"/><circle cx="357.4" cy="418.1" r="1.3"/><circle cx="364.5" cy="417.2" r="1.3"/><circle cx="369.3" cy="417.4" r="1.6"/><circle cx="373.7" cy="417.3" r="1.6"/><circle cx="378.9" cy="418.7" r="1.5"/><circle cx="383.5" cy="418.5" r="1.1"/><circle cx="3.7" cy="422.4" r="1.6"/><circle cx="8.2" cy="423.8" r="1.5"/><circle cx="14.2" cy="424.2" r="1.5"/><circle cx="19.3" cy="423.3" r="1.2"/><circle cx="24.7" cy="424.1" r="1.0"/><circle cx="29.6" cy="423.0" r="1.5"/><circle cx="34.3" cy="422.5" r="1.5"/><circle cx="40.9" cy="422.4" r="1.6"/><circle cx="44.6" cy="423.6" r="1.1"/><circle cx="49.7" cy="422.2" r="1.0"/><circle cx="55.5" cy="422.6" r="1.2"/><circle cx="295.5" cy="423.5" r="1.4"/><circle cx="301.0" cy="422.3" r="1.3"/><circle cx="304.6" cy="424.0" r="1.0"/><circle cx="310.7" cy="423.9" r="1.1"/><circle cx="315.2" cy="422.6" r="1.3"/><circle cx="320.0" cy="423.0" r="1.4"/><circle cx="325.1" cy="423.7" r="1.0"/><circle cx="330.5" cy="423.3" r="1.5"/><circle cx="336.3" cy="423.6" r="1.0"/><circle cx="342.1" cy="424.0" r="1.4"/><circle cx="348.4" cy="423.1" r="1.6"/><circle cx="353.6" cy="422.6" r="1.5"/><circle cx="358.5" cy="424.2" r="1.4"/><circle cx="363.0" cy="423.3" r="1.5"/><circle cx="369.4" cy="423.4" r="1.2"/><circle cx="374.2" cy="422.4" r="1.6"/><circle cx="379.3" cy="422.7" r="1.6"/><circle cx="385.3" cy="422.6" r="1.4"/><circle cx="390.1" cy="423.5" r="1.1"/><circle cx="-1.1" cy="429.5" r="1.4"/><circle cx="2.0" cy="427.5" r="1.3"/><circle cx="9.4" cy="429.8" r="1.4"/><circle cx="13.0" cy="429.2" r="1.6"/><circle cx="20.0" cy="427.5" r="1.1"/><circle cx="23.9" cy="428.3" r="1.1"/><circle cx="29.7" cy="428.9" r="1.4"/><circle cx="34.3" cy="428.0" r="1.5"/><circle cx="39.7" cy="428.0" r="1.4"/><circle cx="44.7" cy="428.1" r="1.3"/><circle cx="49.8" cy="428.2" r="1.6"/><circle cx="310.4" cy="428.3" r="1.4"/><circle cx="316.4" cy="429.2" r="1.0"/><circle cx="321.2" cy="427.9" r="1.3"/><circle cx="327.4" cy="429.6" r="1.2"/><circle cx="331.1" cy="428.6" r="1.2"/><circle cx="337.0" cy="429.2" r="1.6"/><circle cx="341.8" cy="427.5" r="1.2"/><circle cx="347.4" cy="428.7" r="1.1"/><circle cx="351.7" cy="428.6" r="1.5"/><circle cx="358.7" cy="427.6" r="1.4"/><circle cx="363.4" cy="428.3" r="1.4"/><circle cx="367.9" cy="429.8" r="1.3"/><circle cx="373.0" cy="427.7" r="1.2"/><circle cx="378.6" cy="429.0" r="1.4"/><circle cx="384.7" cy="429.4" r="1.1"/><circle cx="390.9" cy="428.5" r="1.0"/><circle cx="394.2" cy="429.4" r="1.2"/><circle cx="-2.7" cy="433.8" r="1.2"/><circle cx="2.0" cy="435.3" r="1.6"/><circle cx="8.8" cy="434.3" r="1.2"/><circle cx="13.6" cy="435.5" r="1.3"/><circle cx="19.4" cy="434.1" r="1.5"/><circle cx="24.2" cy="434.2" r="1.2"/><circle cx="29.1" cy="433.5" r="1.3"/><circle cx="35.9" cy="435.0" r="1.4"/><circle cx="40.5" cy="434.2" r="1.1"/><circle cx="332.1" cy="433.4" r="1.4"/><circle cx="336.9" cy="433.9" r="1.3"/><circle cx="342.9" cy="433.9" r="1.3"/><circle cx="348.6" cy="434.3" r="1.1"/><circle cx="353.1" cy="434.5" r="1.1"/><circle cx="356.9" cy="433.3" r="1.4"/><circle cx="363.7" cy="434.7" r="1.3"/><circle cx="369.2" cy="434.3" r="1.1"/><circle cx="372.9" cy="434.7" r="1.6"/><circle cx="380.4" cy="433.9" r="1.2"/><circle cx="384.5" cy="433.8" r="1.5"/><circle cx="389.3" cy="434.4" r="1.1"/><circle cx="396.3" cy="433.9" r="1.3"/><circle cx="400.5" cy="433.5" r="1.5"/><circle cx="405.3" cy="433.2" r="1.3"/><circle cx="-1.3" cy="441.0" r="1.2"/><circle cx="3.5" cy="439.7" r="1.0"/><circle cx="8.5" cy="438.9" r="1.3"/><circle cx="13.9" cy="440.8" r="1.3"/><circle cx="18.0" cy="440.3" r="1.1"/><circle cx="23.7" cy="439.0" r="1.2"/><circle cx="28.5" cy="439.0" r="1.3"/><circle cx="353.3" cy="439.6" r="1.1"/><circle cx="357.2" cy="439.6" r="1.6"/><circle cx="364.5" cy="439.6" r="1.6"/><circle cx="369.8" cy="439.8" r="1.5"/><circle cx="373.7" cy="439.9" r="1.1"/><circle cx="380.3" cy="439.8" r="1.4"/><circle cx="384.5" cy="440.1" r="1.6"/><circle cx="390.3" cy="440.0" r="1.1"/><circle cx="396.2" cy="439.6" r="1.6"/><circle cx="400.6" cy="438.7" r="1.3"/><circle cx="406.0" cy="440.8" r="1.5"/><circle cx="411.0" cy="440.4" r="1.2"/><circle cx="415.6" cy="440.5" r="1.5"/><circle cx="-2.9" cy="446.3" r="1.2"/><circle cx="2.7" cy="446.1" r="1.0"/><circle cx="8.0" cy="446.2" r="1.6"/><circle cx="13.3" cy="445.1" r="1.5"/><circle cx="19.7" cy="446.1" r="1.5"/><circle cx="25.3" cy="444.5" r="1.1"/><circle cx="368.1" cy="446.4" r="1.1"/><circle cx="374.0" cy="445.9" r="1.5"/><circle cx="379.4" cy="444.4" r="1.2"/><circle cx="384.4" cy="445.3" r="1.3"/><circle cx="390.4" cy="446.5" r="1.2"/><circle cx="394.3" cy="445.7" r="1.0"/><circle cx="399.5" cy="444.4" r="1.2"/><circle cx="406.7" cy="444.8" r="1.5"/><circle cx="412.3" cy="446.1" r="1.6"/><circle cx="416.4" cy="446.1" r="1.3"/><circle cx="421.8" cy="445.4" r="1.3"/><circle cx="426.7" cy="445.7" r="1.4"/><circle cx="433.3" cy="446.6" r="1.2"/><circle cx="-2.8" cy="451.2" r="1.1"/><circle cx="4.2" cy="452.2" r="1.3"/><circle cx="8.3" cy="451.9" r="1.0"/><circle cx="14.5" cy="450.2" r="1.6"/><circle cx="373.4" cy="450.8" r="1.3"/><circle cx="379.1" cy="450.1" r="1.1"/><circle cx="384.6" cy="450.6" r="1.4"/><circle cx="389.8" cy="451.5" r="1.1"/><circle cx="396.0" cy="451.3" r="1.2"/><circle cx="399.5" cy="451.5" r="1.4"/><circle cx="404.8" cy="451.3" r="1.0"/><circle cx="411.9" cy="450.4" r="1.0"/><circle cx="416.8" cy="451.7" r="1.3"/><circle cx="422.1" cy="451.7" r="1.1"/><circle cx="427.1" cy="451.3" r="1.5"/><circle cx="432.1" cy="452.2" r="1.0"/><circle cx="437.4" cy="450.0" r="1.3"/><circle cx="442.3" cy="450.1" r="1.3"/><circle cx="-1.5" cy="456.1" r="1.2"/><circle cx="4.0" cy="456.4" r="1.3"/><circle cx="384.2" cy="455.5" r="1.2"/><circle cx="389.6" cy="455.6" r="1.1"/><circle cx="394.2" cy="456.1" r="1.3"/><circle cx="400.6" cy="455.7" r="1.5"/><circle cx="405.1" cy="456.6" r="1.1"/><circle cx="411.6" cy="457.5" r="1.5"/><circle cx="416.5" cy="457.7" r="1.6"/><circle cx="421.7" cy="456.8" r="1.5"/><circle cx="427.2" cy="456.8" r="1.6"/><circle cx="431.3" cy="456.0" r="1.1"/><circle cx="437.1" cy="457.3" r="1.2"/><circle cx="443.9" cy="457.5" r="1.2"/><circle cx="449.0" cy="456.7" r="1.3"/><circle cx="454.7" cy="456.9" r="1.4"/><circle cx="396.3" cy="462.2" r="1.4"/><circle cx="401.0" cy="461.5" r="1.6"/><circle cx="405.4" cy="461.3" r="1.2"/><circle cx="410.1" cy="462.7" r="1.4"/><circle cx="416.2" cy="462.2" r="1.3"/><circle cx="421.4" cy="462.2" r="1.5"/><circle cx="427.6" cy="462.6" r="1.2"/><circle cx="431.6" cy="463.0" r="1.1"/><circle cx="436.6" cy="462.3" r="1.6"/><circle cx="442.0" cy="463.2" r="1.5"/><circle cx="448.0" cy="462.5" r="1.5"/><circle cx="452.6" cy="463.0" r="1.5"/><circle cx="459.8" cy="462.9" r="1.2"/><circle cx="464.7" cy="462.3" r="1.3"/><circle cx="406.8" cy="468.6" r="1.4"/><circle cx="410.4" cy="468.6" r="1.4"/><circle cx="417.2" cy="468.3" r="1.4"/><circle cx="422.5" cy="468.7" r="1.6"/><circle cx="426.9" cy="468.3" r="1.4"/><circle cx="431.6" cy="467.8" r="1.4"/><circle cx="437.8" cy="467.5" r="1.2"/><circle cx="443.7" cy="467.5" r="1.5"/><circle cx="447.3" cy="466.8" r="1.2"/><circle cx="453.6" cy="466.7" r="1.1"/><circle cx="459.0" cy="468.5" r="1.3"/><circle cx="464.2" cy="467.8" r="1.4"/><circle cx="470.2" cy="467.8" r="1.0"/><circle cx="475.8" cy="468.7" r="1.2"/><circle cx="417.3" cy="474.3" r="1.3"/><circle cx="421.1" cy="474.0" r="1.0"/><circle cx="426.7" cy="474.6" r="1.0"/><circle cx="432.0" cy="472.3" r="1.5"/><circle cx="437.7" cy="474.3" r="1.3"/><circle cx="442.0" cy="472.7" r="1.2"/><circle cx="447.2" cy="473.0" r="1.1"/><circle cx="454.0" cy="474.3" r="1.4"/><circle cx="458.0" cy="474.5" r="1.4"/><circle cx="463.8" cy="473.0" r="1.3"/><circle cx="469.1" cy="474.3" r="1.0"/><circle cx="474.0" cy="474.2" r="1.2"/><circle cx="479.3" cy="474.4" r="1.4"/><circle cx="485.1" cy="473.1" r="1.3"/><circle cx="427.8" cy="478.8" r="1.0"/><circle cx="431.5" cy="478.2" r="1.4"/><circle cx="437.4" cy="478.3" r="1.2"/><circle cx="442.4" cy="479.9" r="1.6"/><circle cx="449.2" cy="478.6" r="1.6"/><circle cx="452.8" cy="479.5" r="1.1"/><circle cx="458.3" cy="479.5" r="1.3"/><circle cx="463.0" cy="479.0" r="1.1"/><circle cx="469.3" cy="478.0" r="1.6"/><circle cx="475.5" cy="479.8" r="1.1"/><circle cx="479.2" cy="479.1" r="1.0"/><circle cx="486.1" cy="479.1" r="1.2"/><circle cx="489.9" cy="479.8" r="1.2"/><circle cx="496.9" cy="478.6" r="1.2"/><circle cx="437.6" cy="484.9" r="1.3"/><circle cx="443.7" cy="485.9" r="1.6"/><circle cx="448.4" cy="484.3" r="1.4"/><circle cx="453.7" cy="485.5" r="1.3"/><circle cx="459.0" cy="485.7" r="1.5"/><circle cx="464.5" cy="484.7" r="1.0"/><circle cx="470.0" cy="484.7" r="1.3"/><circle cx="473.7" cy="483.8" r="1.5"/><circle cx="479.0" cy="484.2" r="1.6"/><circle cx="485.8" cy="485.7" r="1.6"/><circle cx="490.9" cy="485.1" r="1.6"/><circle cx="494.8" cy="484.7" r="1.6"/><circle cx="500.7" cy="485.3" r="1.1"/><circle cx="507.5" cy="484.6" r="1.3"/><circle cx="442.2" cy="489.4" r="1.1"/><circle cx="448.7" cy="491.2" r="1.3"/><circle cx="454.5" cy="491.1" r="1.3"/><circle cx="459.3" cy="490.4" r="1.4"/><circle cx="463.2" cy="490.5" r="1.2"/><circle cx="469.4" cy="490.4" r="1.4"/><circle cx="475.3" cy="491.2" r="1.1"/><circle cx="480.6" cy="491.2" r="1.6"/><circle cx="485.0" cy="489.3" r="1.4"/><circle cx="491.4" cy="491.5" r="1.2"/><circle cx="495.5" cy="490.1" r="1.0"/><circle cx="501.2" cy="489.6" r="1.6"/><circle cx="505.5" cy="490.5" r="1.5"/><circle cx="511.0" cy="490.0" r="1.0"/><circle cx="517.9" cy="489.5" r="1.1"/><circle cx="452.4" cy="495.5" r="1.5"/><circle cx="459.7" cy="497.0" r="1.4"/><circle cx="463.9" cy="495.3" r="1.3"/><circle cx="469.8" cy="495.2" r="1.5"/><circle cx="475.0" cy="496.2" r="1.0"/><circle cx="480.5" cy="495.5" r="1.2"/><circle cx="486.3" cy="497.0" r="1.5"/><circle cx="489.5" cy="495.8" r="1.6"/><circle cx="495.6" cy="495.9" r="1.2"/><circle cx="501.0" cy="495.7" r="1.6"/><circle cx="505.4" cy="495.9" r="1.5"/><circle cx="512.5" cy="495.8" r="1.1"/><circle cx="517.0" cy="495.0" r="1.1"/><circle cx="522.7" cy="496.0" r="1.3"/><circle cx="527.2" cy="496.6" r="1.0"/><circle cx="463.9" cy="502.6" r="1.0"/><circle cx="469.2" cy="501.4" r="1.2"/><circle cx="473.8" cy="502.2" r="1.0"/><circle cx="479.4" cy="502.5" r="1.6"/><circle cx="484.2" cy="501.8" r="1.6"/><circle cx="490.7" cy="501.5" r="1.4"/><circle cx="494.9" cy="502.5" r="1.3"/><circle cx="500.3" cy="502.1" r="1.5"/><circle cx="505.6" cy="501.2" r="1.3"/><circle cx="512.4" cy="501.3" r="1.3"/><circle cx="516.9" cy="501.2" r="1.4"/><circle cx="523.4" cy="501.5" r="1.4"/><circle cx="528.2" cy="502.2" r="1.1"/><circle cx="532.3" cy="501.7" r="1.6"/><circle cx="538.0" cy="502.5" r="1.0"/><circle cx="474.8" cy="506.7" r="1.1"/><circle cx="481.0" cy="508.1" r="1.2"/><circle cx="486.3" cy="507.8" r="1.5"/><circle cx="489.5" cy="507.5" r="1.1"/><circle cx="494.9" cy="507.9" r="1.1"/><circle cx="501.3" cy="507.7" r="1.4"/><circle cx="506.3" cy="506.9" r="1.3"/><circle cx="512.1" cy="508.2" r="1.1"/><circle cx="517.4" cy="508.1" r="1.1"/><circle cx="523.5" cy="506.3" r="1.6"/><circle cx="527.1" cy="506.8" r="1.0"/><circle cx="533.3" cy="506.5" r="1.3"/><circle cx="537.8" cy="507.4" r="1.2"/><circle cx="543.5" cy="507.7" r="1.4"/><circle cx="484.2" cy="513.3" r="1.3"/><circle cx="489.6" cy="512.5" r="1.5"/><circle cx="496.2" cy="513.3" r="1.2"/><circle cx="501.3" cy="512.3" r="1.5"/><circle cx="507.1" cy="513.7" r="1.2"/><circle cx="511.4" cy="513.3" r="1.0"/><circle cx="517.2" cy="513.1" r="1.3"/><circle cx="522.3" cy="513.2" r="1.1"/><circle cx="528.5" cy="513.5" r="1.4"/><circle cx="531.9" cy="512.3" r="1.0"/><circle cx="537.6" cy="512.4" r="1.3"/><circle cx="544.1" cy="513.2" r="1.5"/><circle cx="549.5" cy="513.3" r="1.0"/><circle cx="553.9" cy="513.7" r="1.2"/><circle cx="502.2" cy="517.1" r="1.4"/><circle cx="505.7" cy="518.1" r="1.3"/><circle cx="510.7" cy="518.7" r="1.6"/><circle cx="517.2" cy="517.6" r="1.2"/><circle cx="522.0" cy="517.8" r="1.1"/><circle cx="526.8" cy="518.4" r="1.6"/><circle cx="531.9" cy="519.0" r="1.2"/><circle cx="538.6" cy="517.2" r="1.0"/><circle cx="544.3" cy="517.6" r="1.2"/><circle cx="548.7" cy="519.1" r="1.3"/><circle cx="554.9" cy="517.9" r="1.2"/><circle cx="558.7" cy="518.7" r="1.5"/><circle cx="511.2" cy="524.2" r="1.0"/><circle cx="517.4" cy="522.8" r="1.2"/><circle cx="521.6" cy="523.9" r="1.3"/><circle cx="528.3" cy="524.3" r="1.3"/><circle cx="534.1" cy="524.2" r="1.3"/><circle cx="539.0" cy="523.9" r="1.6"/><circle cx="543.7" cy="524.5" r="1.3"/><circle cx="549.6" cy="524.4" r="1.4"/><circle cx="555.3" cy="523.8" r="1.1"/><circle cx="560.1" cy="523.5" r="1.4"/><circle cx="564.4" cy="522.7" r="1.6"/><circle cx="528.5" cy="530.7" r="1.4"/><circle cx="532.3" cy="529.8" r="1.0"/><circle cx="537.8" cy="530.7" r="1.1"/><circle cx="543.9" cy="529.0" r="1.3"/><circle cx="547.8" cy="530.6" r="1.1"/><circle cx="553.3" cy="528.4" r="1.2"/><circle cx="560.1" cy="530.3" r="1.3"/><circle cx="565.8" cy="529.9" r="1.4"/><circle cx="569.0" cy="529.3" r="1.1"/><circle cx="542.5" cy="534.6" r="1.5"/><circle cx="549.6" cy="534.7" r="1.1"/><circle cx="554.3" cy="535.6" r="1.3"/><circle cx="559.0" cy="536.3" r="1.6"/><circle cx="565.6" cy="535.4" r="1.1"/><circle cx="570.2" cy="534.5" r="1.1"/><circle cx="575.6" cy="536.3" r="1.5"/><circle cx="549.3" cy="541.8" r="1.1"/><circle cx="554.6" cy="541.0" r="1.0"/><circle cx="559.2" cy="541.1" r="1.6"/><circle cx="564.7" cy="540.8" r="1.5"/><circle cx="569.1" cy="539.7" r="1.2"/><circle cx="574.3" cy="539.6" r="1.4"/><circle cx="581.1" cy="540.3" r="1.5"/><circle cx="549.9" cy="546.3" r="1.3"/><circle cx="553.7" cy="545.5" r="1.3"/><circle cx="559.8" cy="546.0" r="1.6"/><circle cx="564.1" cy="545.3" r="1.5"/><circle cx="571.1" cy="547.0" r="1.5"/><circle cx="575.6" cy="547.4" r="1.5"/><circle cx="580.4" cy="545.7" r="1.3"/><circle cx="585.9" cy="547.1" r="1.2"/><circle cx="549.7" cy="551.1" r="1.3"/><circle cx="554.7" cy="551.4" r="1.3"/><circle cx="559.8" cy="551.6" r="1.4"/><circle cx="565.5" cy="551.9" r="1.1"/><circle cx="570.7" cy="551.8" r="1.5"/><circle cx="576.5" cy="551.1" r="1.5"/><circle cx="581.8" cy="550.9" r="1.4"/><circle cx="585.7" cy="551.2" r="1.4"/><circle cx="553.3" cy="558.5" r="1.1"/><circle cx="558.5" cy="557.7" r="1.2"/><circle cx="565.8" cy="557.9" r="1.0"/><circle cx="570.4" cy="557.3" r="1.4"/><circle cx="575.3" cy="556.9" r="1.2"/><circle cx="581.9" cy="557.7" r="1.6"/><circle cx="585.7" cy="558.6" r="1.2"/><circle cx="555.1" cy="563.2" r="1.3"/><circle cx="558.9" cy="562.4" r="1.1"/><circle cx="565.4" cy="563.5" r="1.6"/><circle cx="570.2" cy="563.4" r="1.0"/><circle cx="575.3" cy="563.7" r="1.2"/><circle cx="581.8" cy="563.9" r="1.1"/><circle cx="585.7" cy="561.9" r="1.1"/><circle cx="549.8" cy="568.2" r="1.6"/><circle cx="553.1" cy="568.5" r="1.5"/><circle cx="559.5" cy="568.7" r="1.1"/><circle cx="563.7" cy="568.1" r="1.4"/><circle cx="570.5" cy="567.7" r="1.3"/><circle cx="575.1" cy="569.6" r="1.6"/><circle cx="579.7" cy="568.0" r="1.5"/><circle cx="586.8" cy="569.0" r="1.1"/><circle cx="555.3" cy="573.1" r="1.1"/><circle cx="558.3" cy="575.4" r="1.1"/><circle cx="564.6" cy="573.2" r="1.6"/><circle cx="571.2" cy="574.8" r="1.3"/><circle cx="575.3" cy="573.3" r="1.6"/><circle cx="580.1" cy="574.9" r="1.0"/><circle cx="586.3" cy="574.1" r="1.0"/><circle cx="550.0" cy="579.7" r="1.2"/><circle cx="554.1" cy="580.1" r="1.2"/><circle cx="559.6" cy="580.8" r="1.3"/><circle cx="565.2" cy="579.2" r="1.1"/><circle cx="569.3" cy="579.2" r="1.3"/><circle cx="574.3" cy="579.7" r="1.4"/><circle cx="580.6" cy="580.7" r="1.6"/><circle cx="585.2" cy="580.1" r="1.3"/><circle cx="554.8" cy="585.3" r="1.1"/><circle cx="558.9" cy="585.2" r="1.5"/><circle cx="565.1" cy="584.8" r="1.2"/><circle cx="569.3" cy="586.4" r="1.4"/><circle cx="576.4" cy="585.4" r="1.1"/><circle cx="581.1" cy="586.3" r="1.6"/><circle cx="585.2" cy="586.0" r="1.2"/><circle cx="553.6" cy="590.1" r="1.4"/><circle cx="558.9" cy="590.3" r="1.6"/><circle cx="565.1" cy="590.9" r="1.4"/><circle cx="570.5" cy="592.2" r="1.4"/><circle cx="575.7" cy="592.0" r="1.4"/><circle cx="581.8" cy="590.4" r="1.1"/></g><g fill="#3a280a" opacity="0.55" filter="url(#dblur)"><circle cx="170.4" cy="325.2" r="1.1"/><circle cx="174.2" cy="325.5" r="1.4"/><circle cx="180.6" cy="325.3" r="1.5"/><circle cx="186.1" cy="324.7" r="1.3"/><circle cx="190.0" cy="325.8" r="1.1"/><circle cx="158.6" cy="330.9" r="1.7"/><circle cx="163.5" cy="330.2" r="1.2"/><circle cx="168.8" cy="330.3" r="1.3"/><circle cx="175.6" cy="329.9" r="1.2"/><circle cx="180.5" cy="329.6" r="1.1"/><circle cx="186.7" cy="329.4" r="1.2"/><circle cx="190.8" cy="329.0" r="1.7"/><circle cx="195.1" cy="329.1" r="1.8"/><circle cx="201.4" cy="331.2" r="1.7"/><circle cx="148.0" cy="334.8" r="1.3"/><circle cx="154.6" cy="336.4" r="1.3"/><circle cx="159.4" cy="336.5" r="1.7"/><circle cx="163.2" cy="335.0" r="1.8"/><circle cx="169.1" cy="336.5" r="1.5"/><circle cx="175.8" cy="334.8" r="1.8"/><circle cx="181.1" cy="335.2" r="1.6"/><circle cx="184.3" cy="336.7" r="1.4"/><circle cx="191.4" cy="336.5" r="1.1"/><circle cx="197.0" cy="334.9" r="1.2"/><circle cx="201.3" cy="335.2" r="1.6"/><circle cx="206.0" cy="336.1" r="1.6"/><circle cx="213.1" cy="335.6" r="1.3"/><circle cx="217.5" cy="336.2" r="1.7"/><circle cx="137.9" cy="342.3" r="1.5"/><circle cx="142.4" cy="342.3" r="1.7"/><circle cx="147.5" cy="342.0" r="1.5"/><circle cx="152.9" cy="341.0" r="1.6"/><circle cx="158.2" cy="341.7" r="1.5"/><circle cx="164.4" cy="340.6" r="1.7"/><circle cx="169.7" cy="341.9" r="1.5"/><circle cx="174.5" cy="342.0" r="1.4"/><circle cx="181.2" cy="341.3" r="1.2"/><circle cx="185.4" cy="341.1" r="1.8"/><circle cx="190.3" cy="342.3" r="1.1"/><circle cx="195.2" cy="340.9" r="1.6"/><circle cx="201.6" cy="341.2" r="1.4"/><circle cx="207.5" cy="340.7" r="1.7"/><circle cx="211.7" cy="341.9" r="1.7"/><circle cx="217.1" cy="340.7" r="1.3"/><circle cx="222.0" cy="340.4" r="1.4"/><circle cx="228.2" cy="341.1" r="1.8"/><circle cx="234.3" cy="342.1" r="1.7"/><circle cx="133.7" cy="347.9" r="1.2"/><circle cx="136.8" cy="347.0" r="1.6"/><circle cx="143.8" cy="346.3" r="1.4"/><circle cx="148.3" cy="346.5" r="1.6"/><circle cx="153.8" cy="346.8" r="1.6"/><circle cx="158.5" cy="347.2" r="1.6"/><circle cx="163.9" cy="345.9" r="1.1"/><circle cx="170.3" cy="347.8" r="1.6"/><circle cx="173.8" cy="346.4" r="1.8"/><circle cx="180.3" cy="346.8" r="1.8"/><circle cx="186.6" cy="346.4" r="1.6"/><circle cx="191.6" cy="347.8" r="1.7"/><circle cx="196.7" cy="346.0" r="1.3"/><circle cx="200.7" cy="347.3" r="1.5"/><circle cx="207.8" cy="346.4" r="1.2"/><circle cx="210.9" cy="346.3" r="1.7"/><circle cx="217.6" cy="346.4" r="1.5"/><circle cx="223.0" cy="346.6" r="1.1"/><circle cx="228.4" cy="347.2" r="1.2"/><circle cx="233.2" cy="346.1" r="1.4"/><circle cx="239.1" cy="347.2" r="1.3"/><circle cx="244.4" cy="346.4" r="1.6"/><circle cx="248.6" cy="347.3" r="1.5"/><circle cx="117.7" cy="352.5" r="1.5"/><circle cx="123.0" cy="353.1" r="1.7"/><circle cx="127.8" cy="351.5" r="1.6"/><circle cx="133.0" cy="352.2" r="1.1"/><circle cx="137.4" cy="352.7" r="1.4"/><circle cx="143.3" cy="352.4" r="1.6"/><circle cx="149.4" cy="351.4" r="1.5"/><circle cx="154.4" cy="351.5" r="1.4"/><circle cx="159.7" cy="353.0" r="1.4"/><circle cx="163.9" cy="351.5" r="1.5"/><circle cx="170.4" cy="353.4" r="1.6"/><circle cx="174.9" cy="352.0" r="1.3"/><circle cx="179.4" cy="352.2" r="1.1"/><circle cx="185.4" cy="353.3" r="1.3"/><circle cx="191.7" cy="352.7" r="1.6"/><circle cx="197.3" cy="351.7" r="1.4"/><circle cx="200.6" cy="351.7" r="1.6"/><circle cx="205.5" cy="352.8" r="1.7"/><circle cx="211.8" cy="353.0" r="1.2"/><circle cx="217.9" cy="353.3" r="1.5"/><circle cx="223.6" cy="352.7" r="1.5"/><circle cx="226.7" cy="353.4" r="1.3"/><circle cx="233.7" cy="352.6" r="1.2"/><circle cx="238.4" cy="353.6" r="1.6"/><circle cx="242.9" cy="352.7" r="1.7"/><circle cx="248.0" cy="351.4" r="1.7"/><circle cx="254.6" cy="353.2" r="1.3"/><circle cx="259.9" cy="351.8" r="1.2"/><circle cx="265.1" cy="353.4" r="1.5"/><circle cx="106.6" cy="359.3" r="1.2"/><circle cx="112.5" cy="358.3" r="1.3"/><circle cx="117.2" cy="358.8" r="1.3"/><circle cx="122.1" cy="357.5" r="1.5"/><circle cx="126.5" cy="357.9" r="1.7"/><circle cx="133.2" cy="358.6" r="1.7"/><circle cx="138.5" cy="358.4" r="1.6"/><circle cx="142.2" cy="357.1" r="1.3"/><circle cx="149.0" cy="359.4" r="1.3"/><circle cx="154.9" cy="359.0" r="1.2"/><circle cx="159.1" cy="357.6" r="1.6"/><circle cx="164.0" cy="357.9" r="1.5"/><circle cx="169.1" cy="358.9" r="1.5"/><circle cx="173.8" cy="358.4" r="1.4"/><circle cx="181.2" cy="359.3" r="1.1"/><circle cx="186.1" cy="358.5" r="1.5"/><circle cx="189.9" cy="359.1" r="1.6"/><circle cx="196.4" cy="359.3" r="1.2"/><circle cx="201.1" cy="357.1" r="1.3"/><circle cx="207.9" cy="357.9" r="1.7"/><circle cx="212.9" cy="358.3" r="1.7"/><circle cx="216.6" cy="357.2" r="1.2"/><circle cx="221.6" cy="357.2" r="1.1"/><circle cx="226.9" cy="357.3" r="1.5"/><circle cx="232.7" cy="359.4" r="1.5"/><circle cx="239.5" cy="358.8" r="1.7"/><circle cx="244.9" cy="357.9" r="1.3"/><circle cx="248.1" cy="359.3" r="1.3"/><circle cx="255.6" cy="358.7" r="1.7"/><circle cx="258.6" cy="359.2" r="1.2"/><circle cx="265.7" cy="357.1" r="1.8"/><circle cx="269.2" cy="357.4" r="1.4"/><circle cx="101.1" cy="364.4" r="1.6"/><circle cx="106.5" cy="362.8" r="1.2"/><circle cx="112.2" cy="363.3" r="1.5"/><circle cx="117.1" cy="363.8" r="1.1"/><circle cx="122.1" cy="363.7" r="1.3"/><circle cx="127.1" cy="364.0" r="1.1"/><circle cx="132.2" cy="363.1" r="1.5"/><circle cx="137.0" cy="363.6" r="1.4"/><circle cx="142.3" cy="363.2" r="1.5"/><circle cx="148.7" cy="364.8" r="1.5"/><circle cx="153.9" cy="365.0" r="1.8"/><circle cx="159.0" cy="363.8" r="1.8"/><circle cx="164.0" cy="364.6" r="1.2"/><circle cx="168.8" cy="363.3" r="1.5"/><circle cx="174.6" cy="363.1" r="1.2"/><circle cx="179.2" cy="364.8" r="1.7"/><circle cx="186.2" cy="364.1" r="1.5"/><circle cx="190.7" cy="364.3" r="1.4"/><circle cx="197.0" cy="363.2" r="1.4"/><circle cx="202.1" cy="364.0" r="1.6"/><circle cx="207.3" cy="363.5" r="1.4"/><circle cx="210.9" cy="363.5" r="1.8"/><circle cx="216.3" cy="364.8" r="1.7"/><circle cx="223.3" cy="363.0" r="1.7"/><circle cx="229.0" cy="363.4" r="1.2"/><circle cx="232.4" cy="363.2" r="1.3"/><circle cx="237.5" cy="363.1" r="1.4"/><circle cx="244.4" cy="365.0" r="1.1"/><circle cx="250.1" cy="364.7" r="1.8"/><circle cx="254.4" cy="363.5" r="1.3"/><circle cx="259.2" cy="363.2" r="1.3"/><circle cx="264.8" cy="362.8" r="1.2"/><circle cx="270.1" cy="362.7" r="1.7"/><circle cx="276.1" cy="363.2" r="1.6"/><circle cx="282.0" cy="364.5" r="1.3"/><circle cx="95.7" cy="368.8" r="1.8"/><circle cx="101.1" cy="368.6" r="1.7"/><circle cx="106.6" cy="370.5" r="1.8"/><circle cx="111.3" cy="368.5" r="1.2"/><circle cx="115.5" cy="368.6" r="1.6"/><circle cx="120.7" cy="369.3" r="1.6"/><circle cx="126.5" cy="369.7" r="1.6"/><circle cx="132.6" cy="368.3" r="1.5"/><circle cx="136.8" cy="368.3" r="1.7"/><circle cx="143.9" cy="370.4" r="1.2"/><circle cx="147.9" cy="368.7" r="1.3"/><circle cx="184.6" cy="368.3" r="1.7"/><circle cx="190.1" cy="370.3" r="1.8"/><circle cx="195.4" cy="368.9" r="1.5"/><circle cx="200.9" cy="368.3" r="1.5"/><circle cx="205.8" cy="369.5" r="1.2"/><circle cx="212.3" cy="370.1" r="1.2"/><circle cx="218.3" cy="369.9" r="1.6"/><circle cx="223.0" cy="368.9" r="1.1"/><circle cx="228.3" cy="369.1" r="1.7"/><circle cx="232.5" cy="370.0" r="1.6"/><circle cx="239.0" cy="369.7" r="1.3"/><circle cx="244.9" cy="368.9" r="1.3"/><circle cx="250.0" cy="370.4" r="1.4"/><circle cx="253.3" cy="369.6" r="1.7"/><circle cx="260.8" cy="368.8" r="1.7"/><circle cx="265.6" cy="370.3" r="1.7"/><circle cx="270.7" cy="369.3" r="1.4"/><circle cx="276.0" cy="368.8" r="1.5"/><circle cx="279.9" cy="368.9" r="1.1"/><circle cx="285.2" cy="368.4" r="1.1"/><circle cx="290.7" cy="368.6" r="1.7"/><circle cx="85.3" cy="375.5" r="1.4"/><circle cx="90.0" cy="374.6" r="1.7"/><circle cx="95.1" cy="374.4" r="1.7"/><circle cx="100.7" cy="374.8" r="1.7"/><circle cx="105.0" cy="374.0" r="1.5"/><circle cx="110.2" cy="375.9" r="1.8"/><circle cx="116.1" cy="375.9" r="1.4"/><circle cx="122.0" cy="374.8" r="1.7"/><circle cx="126.8" cy="376.0" r="1.3"/><circle cx="131.9" cy="376.2" r="1.2"/><circle cx="136.9" cy="375.3" r="1.8"/><circle cx="195.2" cy="374.7" r="1.4"/><circle cx="201.3" cy="374.2" r="1.3"/><circle cx="206.0" cy="375.8" r="1.7"/><circle cx="213.1" cy="374.8" r="1.7"/><circle cx="216.6" cy="374.6" r="1.4"/><circle cx="222.1" cy="374.3" r="1.7"/><circle cx="227.8" cy="375.5" r="1.2"/><circle cx="233.7" cy="375.5" r="1.7"/><circle cx="237.9" cy="376.1" r="1.7"/><circle cx="243.0" cy="374.8" r="1.4"/><circle cx="250.3" cy="375.4" r="1.2"/><circle cx="254.4" cy="375.6" r="1.1"/><circle cx="260.3" cy="375.4" r="1.6"/><circle cx="264.2" cy="376.1" r="1.4"/><circle cx="270.7" cy="374.4" r="1.1"/><circle cx="274.5" cy="375.2" r="1.7"/><circle cx="281.3" cy="373.9" r="1.1"/><circle cx="287.4" cy="374.8" r="1.7"/><circle cx="292.1" cy="375.6" r="1.7"/><circle cx="296.5" cy="374.5" r="1.1"/><circle cx="74.7" cy="379.9" r="1.4"/><circle cx="78.6" cy="381.3" r="1.3"/><circle cx="84.0" cy="380.1" r="1.5"/><circle cx="90.0" cy="380.1" r="1.3"/><circle cx="95.0" cy="380.5" r="1.4"/><circle cx="101.1" cy="380.2" r="1.2"/><circle cx="105.0" cy="380.3" r="1.8"/><circle cx="111.1" cy="380.3" r="1.1"/><circle cx="116.6" cy="379.5" r="1.3"/><circle cx="121.2" cy="380.2" r="1.2"/><circle cx="126.4" cy="379.4" r="1.4"/><circle cx="212.4" cy="380.6" r="1.6"/><circle cx="217.6" cy="381.1" r="1.7"/><circle cx="223.1" cy="381.5" r="1.4"/><circle cx="228.7" cy="381.2" r="1.1"/><circle cx="233.3" cy="381.6" r="1.4"/><circle cx="238.2" cy="380.3" r="1.7"/><circle cx="243.4" cy="379.9" r="1.6"/><circle cx="250.3" cy="380.9" r="1.1"/><circle cx="253.4" cy="380.1" r="1.6"/><circle cx="260.7" cy="381.2" r="1.2"/><circle cx="265.4" cy="381.3" r="1.4"/><circle cx="269.6" cy="380.7" r="1.4"/><circle cx="275.2" cy="379.4" r="1.3"/><circle cx="281.5" cy="380.2" r="1.6"/><circle cx="286.0" cy="379.9" r="1.6"/><circle cx="292.5" cy="381.1" r="1.6"/><circle cx="296.6" cy="381.5" r="1.8"/><circle cx="302.3" cy="381.1" r="1.2"/><circle cx="306.3" cy="381.0" r="1.3"/><circle cx="312.2" cy="380.8" r="1.1"/><circle cx="318.2" cy="381.1" r="1.6"/><circle cx="322.1" cy="379.6" r="1.7"/><circle cx="69.4" cy="385.7" r="1.3"/><circle cx="74.2" cy="385.2" r="1.2"/><circle cx="80.2" cy="385.7" r="1.2"/><circle cx="84.8" cy="385.5" r="1.8"/><circle cx="90.1" cy="386.6" r="1.7"/><circle cx="95.4" cy="386.7" r="1.4"/><circle cx="101.5" cy="386.2" r="1.4"/><circle cx="107.0" cy="386.1" r="1.3"/><circle cx="112.2" cy="386.4" r="1.6"/><circle cx="116.5" cy="386.1" r="1.7"/><circle cx="222.3" cy="386.0" r="1.7"/><circle cx="228.2" cy="385.6" r="1.3"/><circle cx="233.3" cy="385.2" r="1.7"/><circle cx="239.1" cy="385.2" r="1.2"/><circle cx="242.7" cy="386.2" r="1.3"/><circle cx="249.0" cy="386.2" r="1.7"/><circle cx="254.5" cy="385.1" r="1.3"/><circle cx="260.4" cy="386.9" r="1.7"/><circle cx="265.5" cy="385.5" r="1.3"/><circle cx="269.9" cy="385.6" r="1.5"/><circle cx="275.1" cy="386.8" r="1.1"/><circle cx="281.3" cy="385.6" r="1.7"/><circle cx="287.1" cy="386.3" r="1.1"/><circle cx="290.5" cy="386.8" r="1.3"/><circle cx="296.9" cy="387.0" r="1.7"/><circle cx="303.3" cy="386.5" r="1.4"/><circle cx="307.5" cy="386.1" r="1.4"/><circle cx="313.9" cy="387.1" r="1.4"/><circle cx="319.1" cy="387.4" r="1.4"/><circle cx="323.5" cy="386.2" r="1.5"/><circle cx="329.3" cy="386.8" r="1.1"/><circle cx="59.0" cy="391.2" r="1.2"/><circle cx="64.0" cy="391.2" r="1.5"/><circle cx="69.6" cy="392.1" r="1.7"/><circle cx="73.6" cy="392.4" r="1.5"/><circle cx="79.3" cy="392.1" r="1.5"/><circle cx="84.0" cy="391.2" r="1.5"/><circle cx="89.4" cy="391.7" r="1.4"/><circle cx="95.5" cy="391.0" r="1.5"/><circle cx="101.2" cy="391.8" r="1.3"/><circle cx="105.3" cy="392.6" r="1.8"/><circle cx="112.0" cy="391.4" r="1.7"/><circle cx="233.7" cy="392.3" r="1.6"/><circle cx="239.7" cy="391.3" r="1.2"/><circle cx="244.0" cy="391.4" r="1.5"/><circle cx="249.9" cy="391.3" r="1.5"/><circle cx="255.3" cy="392.5" r="1.2"/><circle cx="259.3" cy="391.6" r="1.5"/><circle cx="264.9" cy="391.4" r="1.4"/><circle cx="270.6" cy="390.8" r="1.4"/><circle cx="276.6" cy="392.1" r="1.6"/><circle cx="281.6" cy="392.8" r="1.2"/><circle cx="285.2" cy="391.0" r="1.3"/><circle cx="290.4" cy="392.1" r="1.6"/><circle cx="297.4" cy="391.7" r="1.4"/><circle cx="301.6" cy="392.9" r="1.7"/><circle cx="308.2" cy="391.8" r="1.2"/><circle cx="311.8" cy="390.8" r="1.8"/><circle cx="317.0" cy="391.9" r="1.6"/><circle cx="324.1" cy="391.9" r="1.6"/><circle cx="328.3" cy="392.6" r="1.2"/><circle cx="333.1" cy="391.4" r="1.5"/><circle cx="48.8" cy="398.5" r="1.1"/><circle cx="52.2" cy="398.0" r="1.5"/><circle cx="57.5" cy="398.2" r="1.6"/><circle cx="63.6" cy="397.2" r="1.7"/><circle cx="68.5" cy="397.7" r="1.5"/><circle cx="73.4" cy="397.9" r="1.3"/><circle cx="79.3" cy="396.8" r="1.2"/><circle cx="85.3" cy="396.4" r="1.5"/><circle cx="90.5" cy="398.0" r="1.3"/><circle cx="94.3" cy="397.6" r="1.1"/><circle cx="101.7" cy="396.2" r="1.7"/><circle cx="243.6" cy="396.5" r="1.7"/><circle cx="248.8" cy="398.3" r="1.4"/><circle cx="254.0" cy="397.9" r="1.5"/><circle cx="259.8" cy="396.6" r="1.2"/><circle cx="266.0" cy="397.2" r="1.8"/><circle cx="269.5" cy="397.7" r="1.6"/><circle cx="276.4" cy="396.7" r="1.6"/><circle cx="279.9" cy="398.5" r="1.2"/><circle cx="286.3" cy="398.5" r="1.4"/><circle cx="291.7" cy="397.4" r="1.6"/><circle cx="297.2" cy="397.0" r="1.1"/><circle cx="302.3" cy="398.3" r="1.6"/><circle cx="308.5" cy="396.5" r="1.3"/><circle cx="313.6" cy="396.2" r="1.3"/><circle cx="316.9" cy="396.8" r="1.6"/><circle cx="322.7" cy="396.4" r="1.3"/><circle cx="329.1" cy="397.8" r="1.6"/><circle cx="334.9" cy="397.2" r="1.5"/><circle cx="339.8" cy="396.4" r="1.5"/><circle cx="345.5" cy="397.3" r="1.7"/><circle cx="41.3" cy="403.5" r="1.4"/><circle cx="46.9" cy="402.3" r="1.3"/><circle cx="52.7" cy="404.1" r="1.6"/><circle cx="57.5" cy="402.7" r="1.6"/><circle cx="64.4" cy="402.4" r="1.6"/><circle cx="69.0" cy="404.1" r="1.2"/><circle cx="74.4" cy="403.3" r="1.7"/><circle cx="80.0" cy="404.0" r="1.5"/><circle cx="84.2" cy="403.4" r="1.3"/><circle cx="91.3" cy="402.4" r="1.2"/><circle cx="253.7" cy="403.9" r="1.8"/><circle cx="258.8" cy="401.9" r="1.6"/><circle cx="263.9" cy="402.2" r="1.1"/><circle cx="269.6" cy="403.8" r="1.6"/><circle cx="274.5" cy="402.2" r="1.7"/><circle cx="281.3" cy="403.2" r="1.6"/><circle cx="286.9" cy="401.9" r="1.4"/><circle cx="290.7" cy="403.9" r="1.6"/><circle cx="297.0" cy="403.8" r="1.6"/><circle cx="301.9" cy="402.0" r="1.5"/><circle cx="308.3" cy="401.9" r="1.8"/><circle cx="312.7" cy="402.8" r="1.5"/><circle cx="319.2" cy="403.8" r="1.7"/><circle cx="324.0" cy="401.9" r="1.8"/><circle cx="329.0" cy="402.4" r="1.2"/><circle cx="334.2" cy="402.6" r="1.7"/><circle cx="340.2" cy="403.3" r="1.8"/><circle cx="343.4" cy="402.9" r="1.3"/><circle cx="349.0" cy="404.2" r="1.2"/><circle cx="355.3" cy="403.9" r="1.4"/><circle cx="32.0" cy="409.1" r="1.7"/><circle cx="36.7" cy="407.5" r="1.4"/><circle cx="42.8" cy="407.7" r="1.5"/><circle cx="47.2" cy="409.3" r="1.5"/><circle cx="53.2" cy="407.4" r="1.2"/><circle cx="58.2" cy="408.7" r="1.4"/><circle cx="62.9" cy="407.7" r="1.2"/><circle cx="69.1" cy="408.7" r="1.4"/><circle cx="74.6" cy="409.3" r="1.7"/><circle cx="79.7" cy="409.2" r="1.7"/><circle cx="259.0" cy="407.5" r="1.2"/><circle cx="265.8" cy="409.5" r="1.6"/><circle cx="270.2" cy="409.0" r="1.6"/><circle cx="275.6" cy="407.6" r="1.1"/><circle cx="280.1" cy="408.0" r="1.8"/><circle cx="286.7" cy="408.9" r="1.5"/><circle cx="292.2" cy="408.7" r="1.8"/><circle cx="297.8" cy="408.0" r="1.5"/><circle cx="302.4" cy="409.7" r="1.6"/><circle cx="308.5" cy="408.5" r="1.6"/><circle cx="311.6" cy="408.3" r="1.3"/><circle cx="319.0" cy="408.3" r="1.6"/><circle cx="322.4" cy="408.5" r="1.4"/><circle cx="328.0" cy="408.2" r="1.1"/><circle cx="334.2" cy="409.7" r="1.3"/><circle cx="338.8" cy="407.8" r="1.7"/><circle cx="345.6" cy="407.9" r="1.7"/><circle cx="350.1" cy="408.5" r="1.7"/><circle cx="355.6" cy="409.2" r="1.3"/><circle cx="359.6" cy="409.5" r="1.2"/><circle cx="26.0" cy="413.9" r="1.7"/><circle cx="30.9" cy="414.9" r="1.6"/><circle cx="36.0" cy="413.6" r="1.5"/><circle cx="41.7" cy="414.1" r="1.6"/><circle cx="48.1" cy="413.9" r="1.6"/><circle cx="52.6" cy="413.6" r="1.3"/><circle cx="57.3" cy="415.1" r="1.2"/><circle cx="63.6" cy="413.8" r="1.4"/><circle cx="67.8" cy="415.0" r="1.4"/><circle cx="73.9" cy="413.3" r="1.6"/><circle cx="271.2" cy="414.3" r="1.6"/><circle cx="276.4" cy="413.5" r="1.2"/><circle cx="280.1" cy="413.1" r="1.2"/><circle cx="285.8" cy="413.4" r="1.6"/><circle cx="291.7" cy="415.0" r="1.5"/><circle cx="296.0" cy="414.1" r="1.8"/><circle cx="302.5" cy="415.1" r="1.7"/><circle cx="306.9" cy="413.7" r="1.5"/><circle cx="312.7" cy="414.6" r="1.7"/><circle cx="317.6" cy="415.2" r="1.8"/><circle cx="322.5" cy="414.6" r="1.7"/><circle cx="327.8" cy="414.6" r="1.6"/><circle cx="334.4" cy="413.2" r="1.2"/><circle cx="340.2" cy="413.1" r="1.3"/><circle cx="344.3" cy="415.4" r="1.5"/><circle cx="350.9" cy="414.2" r="1.7"/><circle cx="354.0" cy="415.1" r="1.7"/><circle cx="360.2" cy="415.2" r="1.3"/><circle cx="364.9" cy="414.7" r="1.1"/><circle cx="370.6" cy="415.4" r="1.6"/><circle cx="16.0" cy="420.6" r="1.2"/><circle cx="22.1" cy="419.5" r="1.1"/><circle cx="26.3" cy="419.4" r="1.2"/><circle cx="31.4" cy="420.5" r="1.5"/><circle cx="37.2" cy="419.2" r="1.3"/><circle cx="43.3" cy="418.6" r="1.2"/><circle cx="48.0" cy="421.0" r="1.1"/><circle cx="52.1" cy="420.6" r="1.4"/><circle cx="59.0" cy="420.2" r="1.4"/><circle cx="64.6" cy="419.6" r="1.5"/><circle cx="280.2" cy="419.9" r="1.3"/><circle cx="285.7" cy="419.7" r="1.7"/><circle cx="291.5" cy="420.9" r="1.5"/><circle cx="295.7" cy="420.9" r="1.5"/><circle cx="302.9" cy="421.0" r="1.2"/><circle cx="307.8" cy="420.0" r="1.1"/><circle cx="313.1" cy="420.3" r="1.3"/><circle cx="317.7" cy="419.8" r="1.1"/><circle cx="324.2" cy="418.8" r="1.3"/><circle cx="328.9" cy="420.1" r="1.7"/><circle cx="333.2" cy="420.2" r="1.2"/><circle cx="339.7" cy="420.0" r="1.7"/><circle cx="345.4" cy="418.6" r="1.3"/><circle cx="350.1" cy="419.4" r="1.1"/><circle cx="355.9" cy="420.9" r="1.2"/><circle cx="359.7" cy="420.4" r="1.4"/><circle cx="366.8" cy="419.5" r="1.5"/><circle cx="371.6" cy="419.7" r="1.7"/><circle cx="376.0" cy="419.6" r="1.7"/><circle cx="381.2" cy="421.0" r="1.7"/><circle cx="385.8" cy="420.8" r="1.2"/><circle cx="6.0" cy="424.7" r="1.7"/><circle cx="10.5" cy="426.1" r="1.6"/><circle cx="16.5" cy="426.5" r="1.6"/><circle cx="21.6" cy="425.6" r="1.4"/><circle cx="27.0" cy="426.4" r="1.1"/><circle cx="31.9" cy="425.3" r="1.6"/><circle cx="36.6" cy="424.8" r="1.7"/><circle cx="43.2" cy="424.7" r="1.8"/><circle cx="46.9" cy="425.9" r="1.2"/><circle cx="52.0" cy="424.5" r="1.2"/><circle cx="57.8" cy="424.9" r="1.3"/><circle cx="297.8" cy="425.8" r="1.6"/><circle cx="303.3" cy="424.6" r="1.4"/><circle cx="306.9" cy="426.3" r="1.1"/><circle cx="313.0" cy="426.2" r="1.2"/><circle cx="317.5" cy="424.9" r="1.5"/><circle cx="322.3" cy="425.3" r="1.5"/><circle cx="327.4" cy="426.0" r="1.1"/><circle cx="332.8" cy="425.6" r="1.7"/><circle cx="338.6" cy="425.9" r="1.2"/><circle cx="344.4" cy="426.3" r="1.6"/><circle cx="350.7" cy="425.4" r="1.8"/><circle cx="355.9" cy="424.9" r="1.7"/><circle cx="360.8" cy="426.5" r="1.5"/><circle cx="365.3" cy="425.6" r="1.6"/><circle cx="371.7" cy="425.7" r="1.4"/><circle cx="376.5" cy="424.7" r="1.8"/><circle cx="381.6" cy="425.0" r="1.7"/><circle cx="387.6" cy="424.9" r="1.6"/><circle cx="392.4" cy="425.8" r="1.2"/><circle cx="1.2" cy="431.8" r="1.6"/><circle cx="4.3" cy="429.8" r="1.5"/><circle cx="11.7" cy="432.1" r="1.5"/><circle cx="15.3" cy="431.5" r="1.8"/><circle cx="22.3" cy="429.8" r="1.3"/><circle cx="26.2" cy="430.6" r="1.2"/><circle cx="32.0" cy="431.2" r="1.6"/><circle cx="36.6" cy="430.3" r="1.7"/><circle cx="42.0" cy="430.3" r="1.6"/><circle cx="47.0" cy="430.4" r="1.4"/><circle cx="52.1" cy="430.5" r="1.8"/><circle cx="312.7" cy="430.6" r="1.5"/><circle cx="318.7" cy="431.5" r="1.1"/><circle cx="323.5" cy="430.2" r="1.4"/><circle cx="329.7" cy="431.9" r="1.3"/><circle cx="333.4" cy="430.9" r="1.4"/><circle cx="339.3" cy="431.5" r="1.8"/><circle cx="344.1" cy="429.8" r="1.3"/><circle cx="349.7" cy="431.0" r="1.2"/><circle cx="354.0" cy="430.9" r="1.6"/><circle cx="361.0" cy="429.9" r="1.5"/><circle cx="365.7" cy="430.6" r="1.5"/><circle cx="370.2" cy="432.1" r="1.5"/><circle cx="375.3" cy="430.0" r="1.3"/><circle cx="380.9" cy="431.3" r="1.5"/><circle cx="387.0" cy="431.7" r="1.2"/><circle cx="393.2" cy="430.8" r="1.1"/><circle cx="396.5" cy="431.7" r="1.3"/><circle cx="-0.4" cy="436.1" r="1.4"/><circle cx="4.3" cy="437.6" r="1.7"/><circle cx="11.1" cy="436.6" r="1.4"/><circle cx="15.9" cy="437.8" r="1.5"/><circle cx="21.7" cy="436.4" r="1.7"/><circle cx="26.5" cy="436.5" r="1.3"/><circle cx="31.4" cy="435.8" r="1.4"/><circle cx="38.2" cy="437.3" r="1.6"/><circle cx="42.8" cy="436.5" r="1.3"/><circle cx="334.4" cy="435.7" r="1.5"/><circle cx="339.2" cy="436.2" r="1.4"/><circle cx="345.2" cy="436.2" r="1.4"/><circle cx="350.9" cy="436.6" r="1.2"/><circle cx="355.4" cy="436.8" r="1.3"/><circle cx="359.2" cy="435.6" r="1.6"/><circle cx="366.0" cy="437.0" r="1.5"/><circle cx="371.5" cy="436.6" r="1.2"/><circle cx="375.2" cy="437.0" r="1.7"/><circle cx="382.7" cy="436.2" r="1.3"/><circle cx="386.8" cy="436.1" r="1.7"/><circle cx="391.6" cy="436.7" r="1.3"/><circle cx="398.6" cy="436.2" r="1.5"/><circle cx="402.8" cy="435.8" r="1.6"/><circle cx="407.6" cy="435.5" r="1.4"/><circle cx="1.0" cy="443.3" r="1.3"/><circle cx="5.8" cy="442.0" r="1.1"/><circle cx="10.8" cy="441.2" r="1.4"/><circle cx="16.2" cy="443.1" r="1.5"/><circle cx="20.3" cy="442.6" r="1.3"/><circle cx="26.0" cy="441.3" r="1.4"/><circle cx="30.8" cy="441.3" r="1.5"/><circle cx="355.6" cy="441.9" r="1.2"/><circle cx="359.5" cy="441.9" r="1.7"/><circle cx="366.8" cy="441.9" r="1.8"/><circle cx="372.1" cy="442.1" r="1.7"/><circle cx="376.0" cy="442.2" r="1.2"/><circle cx="382.6" cy="442.1" r="1.6"/><circle cx="386.8" cy="442.4" r="1.8"/><circle cx="392.6" cy="442.3" r="1.2"/><circle cx="398.5" cy="441.9" r="1.8"/><circle cx="402.9" cy="441.0" r="1.4"/><circle cx="408.3" cy="443.1" r="1.6"/><circle cx="413.3" cy="442.7" r="1.3"/><circle cx="417.9" cy="442.8" r="1.7"/><circle cx="-0.6" cy="448.6" r="1.3"/><circle cx="5.0" cy="448.4" r="1.2"/><circle cx="10.3" cy="448.5" r="1.8"/><circle cx="15.6" cy="447.4" r="1.6"/><circle cx="22.0" cy="448.4" r="1.7"/><circle cx="27.6" cy="446.8" r="1.2"/><circle cx="370.4" cy="448.7" r="1.2"/><circle cx="376.3" cy="448.2" r="1.7"/><circle cx="381.7" cy="446.7" r="1.3"/><circle cx="386.7" cy="447.6" r="1.4"/><circle cx="392.7" cy="448.8" r="1.4"/><circle cx="396.6" cy="448.0" r="1.2"/><circle cx="401.8" cy="446.7" r="1.3"/><circle cx="409.0" cy="447.1" r="1.7"/><circle cx="414.6" cy="448.4" r="1.8"/><circle cx="418.7" cy="448.4" r="1.4"/><circle cx="424.1" cy="447.7" r="1.5"/><circle cx="429.0" cy="448.0" r="1.6"/><circle cx="435.6" cy="448.9" r="1.3"/><circle cx="-0.5" cy="453.5" r="1.3"/><circle cx="6.5" cy="454.5" r="1.5"/><circle cx="10.6" cy="454.2" r="1.1"/><circle cx="16.8" cy="452.5" r="1.8"/><circle cx="375.7" cy="453.1" r="1.4"/><circle cx="381.4" cy="452.4" r="1.3"/><circle cx="386.9" cy="452.9" r="1.5"/><circle cx="392.1" cy="453.8" r="1.3"/><circle cx="398.3" cy="453.6" r="1.4"/><circle cx="401.8" cy="453.8" r="1.5"/><circle cx="407.1" cy="453.6" r="1.1"/><circle cx="414.2" cy="452.7" r="1.1"/><circle cx="419.1" cy="454.0" r="1.5"/><circle cx="424.4" cy="454.0" r="1.2"/><circle cx="429.4" cy="453.6" r="1.7"/><circle cx="434.4" cy="454.5" r="1.2"/><circle cx="439.7" cy="452.3" r="1.4"/><circle cx="444.6" cy="452.4" r="1.4"/><circle cx="0.8" cy="458.4" r="1.3"/><circle cx="6.3" cy="458.7" r="1.4"/><circle cx="386.5" cy="457.8" r="1.3"/><circle cx="391.9" cy="457.9" r="1.2"/><circle cx="396.5" cy="458.4" r="1.5"/><circle cx="402.9" cy="458.0" r="1.6"/><circle cx="407.4" cy="458.9" r="1.2"/><circle cx="413.9" cy="459.8" r="1.6"/><circle cx="418.8" cy="460.0" r="1.8"/><circle cx="424.0" cy="459.1" r="1.7"/><circle cx="429.5" cy="459.1" r="1.8"/><circle cx="433.6" cy="458.3" r="1.2"/><circle cx="439.4" cy="459.6" r="1.3"/><circle cx="446.2" cy="459.8" r="1.4"/><circle cx="451.3" cy="459.0" r="1.5"/><circle cx="457.0" cy="459.2" r="1.5"/><circle cx="398.6" cy="464.5" r="1.5"/><circle cx="403.3" cy="463.8" r="1.8"/><circle cx="407.7" cy="463.6" r="1.3"/><circle cx="412.4" cy="465.0" r="1.5"/><circle cx="418.5" cy="464.5" r="1.4"/><circle cx="423.7" cy="464.5" r="1.7"/><circle cx="429.9" cy="464.9" r="1.3"/><circle cx="433.9" cy="465.3" r="1.2"/><circle cx="438.9" cy="464.6" r="1.8"/><circle cx="444.3" cy="465.5" r="1.7"/><circle cx="450.3" cy="464.8" r="1.7"/><circle cx="454.9" cy="465.3" r="1.6"/><circle cx="462.1" cy="465.2" r="1.4"/><circle cx="467.0" cy="464.6" r="1.5"/><circle cx="409.1" cy="470.9" r="1.5"/><circle cx="412.7" cy="470.9" r="1.5"/><circle cx="419.5" cy="470.6" r="1.5"/><circle cx="424.8" cy="471.0" r="1.8"/><circle cx="429.2" cy="470.6" r="1.6"/><circle cx="433.9" cy="470.1" r="1.5"/><circle cx="440.1" cy="469.8" r="1.3"/><circle cx="446.0" cy="469.8" r="1.6"/><circle cx="449.6" cy="469.1" r="1.4"/><circle cx="455.9" cy="469.0" r="1.2"/><circle cx="461.3" cy="470.8" r="1.4"/><circle cx="466.5" cy="470.1" r="1.6"/><circle cx="472.5" cy="470.1" r="1.2"/><circle cx="478.1" cy="471.0" r="1.3"/><circle cx="419.6" cy="476.6" r="1.4"/><circle cx="423.4" cy="476.3" r="1.1"/><circle cx="429.0" cy="476.9" r="1.2"/><circle cx="434.3" cy="474.6" r="1.7"/><circle cx="440.0" cy="476.6" r="1.4"/><circle cx="444.3" cy="475.0" r="1.3"/><circle cx="449.5" cy="475.3" r="1.2"/><circle cx="456.3" cy="476.6" r="1.6"/><circle cx="460.3" cy="476.8" r="1.5"/><circle cx="466.1" cy="475.3" r="1.5"/><circle cx="471.4" cy="476.6" r="1.2"/><circle cx="476.3" cy="476.5" r="1.3"/><circle cx="481.6" cy="476.7" r="1.6"/><circle cx="487.4" cy="475.4" r="1.4"/><circle cx="430.1" cy="481.1" r="1.1"/><circle cx="433.8" cy="480.5" r="1.6"/><circle cx="439.7" cy="480.6" r="1.4"/><circle cx="444.7" cy="482.2" r="1.8"/><circle cx="451.5" cy="480.9" r="1.8"/><circle cx="455.1" cy="481.8" r="1.3"/><circle cx="460.6" cy="481.8" r="1.4"/><circle cx="465.3" cy="481.3" r="1.2"/><circle cx="471.6" cy="480.3" r="1.7"/><circle cx="477.8" cy="482.1" r="1.2"/><circle cx="481.5" cy="481.4" r="1.1"/><circle cx="488.4" cy="481.4" r="1.3"/><circle cx="492.2" cy="482.1" r="1.3"/><circle cx="499.2" cy="480.9" r="1.3"/><circle cx="439.9" cy="487.2" r="1.4"/><circle cx="446.0" cy="488.2" r="1.8"/><circle cx="450.7" cy="486.6" r="1.5"/><circle cx="456.0" cy="487.8" r="1.5"/><circle cx="461.3" cy="488.0" r="1.6"/><circle cx="466.8" cy="487.0" r="1.2"/><circle cx="472.3" cy="487.0" r="1.5"/><circle cx="476.0" cy="486.1" r="1.7"/><circle cx="481.3" cy="486.5" r="1.7"/><circle cx="488.1" cy="488.0" r="1.8"/><circle cx="493.2" cy="487.4" r="1.7"/><circle cx="497.1" cy="487.0" r="1.8"/><circle cx="503.0" cy="487.6" r="1.2"/><circle cx="509.8" cy="486.9" r="1.5"/><circle cx="444.5" cy="491.7" r="1.2"/><circle cx="451.0" cy="493.5" r="1.4"/><circle cx="456.8" cy="493.4" r="1.5"/><circle cx="461.6" cy="492.7" r="1.6"/><circle cx="465.5" cy="492.8" r="1.3"/><circle cx="471.7" cy="492.7" r="1.5"/><circle cx="477.6" cy="493.5" r="1.2"/><circle cx="482.9" cy="493.5" r="1.8"/><circle cx="487.3" cy="491.6" r="1.6"/><circle cx="493.7" cy="493.8" r="1.4"/><circle cx="497.8" cy="492.4" r="1.1"/><circle cx="503.5" cy="491.9" r="1.7"/><circle cx="507.8" cy="492.8" r="1.7"/><circle cx="513.3" cy="492.3" r="1.1"/><circle cx="520.2" cy="491.8" r="1.2"/><circle cx="454.7" cy="497.8" r="1.7"/><circle cx="462.0" cy="499.3" r="1.6"/><circle cx="466.2" cy="497.6" r="1.4"/><circle cx="472.1" cy="497.5" r="1.6"/><circle cx="477.3" cy="498.5" r="1.1"/><circle cx="482.8" cy="497.8" r="1.4"/><circle cx="488.6" cy="499.3" r="1.7"/><circle cx="491.8" cy="498.1" r="1.7"/><circle cx="497.9" cy="498.2" r="1.3"/><circle cx="503.3" cy="498.0" r="1.8"/><circle cx="507.7" cy="498.2" r="1.6"/><circle cx="514.8" cy="498.1" r="1.2"/><circle cx="519.3" cy="497.3" r="1.2"/><circle cx="525.0" cy="498.3" r="1.4"/><circle cx="529.5" cy="498.9" r="1.1"/><circle cx="466.2" cy="504.9" r="1.2"/><circle cx="471.5" cy="503.7" r="1.4"/><circle cx="476.1" cy="504.5" r="1.1"/><circle cx="481.7" cy="504.8" r="1.8"/><circle cx="486.5" cy="504.1" r="1.7"/><circle cx="493.0" cy="503.8" r="1.5"/><circle cx="497.2" cy="504.8" r="1.4"/><circle cx="502.6" cy="504.4" r="1.6"/><circle cx="507.9" cy="503.5" r="1.4"/><circle cx="514.7" cy="503.6" r="1.5"/><circle cx="519.2" cy="503.5" r="1.5"/><circle cx="525.7" cy="503.8" r="1.6"/><circle cx="530.5" cy="504.5" r="1.2"/><circle cx="534.6" cy="504.0" r="1.8"/><circle cx="540.3" cy="504.8" r="1.1"/><circle cx="477.1" cy="509.0" r="1.2"/><circle cx="483.3" cy="510.4" r="1.3"/><circle cx="488.6" cy="510.1" r="1.7"/><circle cx="491.8" cy="509.8" r="1.2"/><circle cx="497.2" cy="510.2" r="1.3"/><circle cx="503.6" cy="510.0" r="1.5"/><circle cx="508.6" cy="509.2" r="1.4"/><circle cx="514.4" cy="510.5" r="1.2"/><circle cx="519.7" cy="510.4" r="1.2"/><circle cx="525.8" cy="508.6" r="1.8"/><circle cx="529.4" cy="509.1" r="1.2"/><circle cx="535.6" cy="508.8" r="1.4"/><circle cx="540.1" cy="509.7" r="1.3"/><circle cx="545.8" cy="510.0" r="1.5"/><circle cx="486.5" cy="515.6" r="1.5"/><circle cx="491.9" cy="514.8" r="1.6"/><circle cx="498.5" cy="515.6" r="1.3"/><circle cx="503.6" cy="514.6" r="1.6"/><circle cx="509.4" cy="516.0" r="1.3"/><circle cx="513.7" cy="515.6" r="1.1"/><circle cx="519.5" cy="515.4" r="1.4"/><circle cx="524.6" cy="515.5" r="1.2"/><circle cx="530.8" cy="515.8" r="1.6"/><circle cx="534.2" cy="514.6" r="1.1"/><circle cx="539.9" cy="514.7" r="1.5"/><circle cx="546.4" cy="515.5" r="1.6"/><circle cx="551.8" cy="515.6" r="1.1"/><circle cx="556.2" cy="516.0" r="1.4"/><circle cx="504.5" cy="519.4" r="1.6"/><circle cx="508.0" cy="520.4" r="1.4"/><circle cx="513.0" cy="521.0" r="1.7"/><circle cx="519.5" cy="519.9" r="1.4"/><circle cx="524.3" cy="520.1" r="1.2"/><circle cx="529.1" cy="520.7" r="1.7"/><circle cx="534.2" cy="521.3" r="1.3"/><circle cx="540.9" cy="519.5" r="1.1"/><circle cx="546.6" cy="519.9" r="1.3"/><circle cx="551.0" cy="521.4" r="1.4"/><circle cx="557.2" cy="520.2" r="1.4"/><circle cx="561.0" cy="521.0" r="1.7"/><circle cx="513.5" cy="526.5" r="1.1"/><circle cx="519.7" cy="525.1" r="1.4"/><circle cx="523.9" cy="526.2" r="1.4"/><circle cx="530.6" cy="526.6" r="1.4"/><circle cx="536.4" cy="526.5" r="1.5"/><circle cx="541.3" cy="526.2" r="1.8"/><circle cx="546.0" cy="526.8" r="1.4"/><circle cx="551.9" cy="526.7" r="1.6"/><circle cx="557.6" cy="526.1" r="1.2"/><circle cx="562.4" cy="525.8" r="1.5"/><circle cx="566.7" cy="525.0" r="1.8"/><circle cx="530.8" cy="533.0" r="1.6"/><circle cx="534.6" cy="532.1" r="1.1"/><circle cx="540.1" cy="533.0" r="1.3"/><circle cx="546.2" cy="531.3" r="1.4"/><circle cx="550.1" cy="532.9" r="1.2"/><circle cx="555.6" cy="530.7" r="1.3"/><circle cx="562.4" cy="532.6" r="1.4"/><circle cx="568.1" cy="532.2" r="1.6"/><circle cx="571.3" cy="531.6" r="1.2"/><circle cx="544.8" cy="536.9" r="1.6"/><circle cx="551.9" cy="537.0" r="1.2"/><circle cx="556.6" cy="537.9" r="1.5"/><circle cx="561.3" cy="538.6" r="1.8"/><circle cx="567.9" cy="537.7" r="1.3"/><circle cx="572.5" cy="536.8" r="1.2"/><circle cx="577.9" cy="538.6" r="1.6"/><circle cx="551.6" cy="544.1" r="1.3"/><circle cx="556.9" cy="543.3" r="1.1"/><circle cx="561.5" cy="543.4" r="1.8"/><circle cx="567.0" cy="543.1" r="1.7"/><circle cx="571.4" cy="542.0" r="1.4"/><circle cx="576.6" cy="541.9" r="1.6"/><circle cx="583.4" cy="542.6" r="1.7"/><circle cx="552.2" cy="548.6" r="1.5"/><circle cx="556.0" cy="547.8" r="1.5"/><circle cx="562.1" cy="548.3" r="1.8"/><circle cx="566.4" cy="547.6" r="1.6"/><circle cx="573.4" cy="549.3" r="1.6"/><circle cx="577.9" cy="549.7" r="1.7"/><circle cx="582.7" cy="548.0" r="1.4"/><circle cx="588.2" cy="549.4" r="1.3"/><circle cx="552.0" cy="553.4" r="1.5"/><circle cx="557.0" cy="553.7" r="1.5"/><circle cx="562.1" cy="553.9" r="1.5"/><circle cx="567.8" cy="554.2" r="1.2"/><circle cx="573.0" cy="554.1" r="1.7"/><circle cx="578.8" cy="553.4" r="1.7"/><circle cx="584.1" cy="553.2" r="1.5"/><circle cx="588.0" cy="553.5" r="1.5"/><circle cx="555.6" cy="560.8" r="1.2"/><circle cx="560.8" cy="560.0" r="1.3"/><circle cx="568.1" cy="560.2" r="1.1"/><circle cx="572.7" cy="559.6" r="1.6"/><circle cx="577.6" cy="559.2" r="1.4"/><circle cx="584.2" cy="560.0" r="1.8"/><circle cx="588.0" cy="560.9" r="1.3"/><circle cx="557.4" cy="565.5" r="1.4"/><circle cx="561.2" cy="564.7" r="1.2"/><circle cx="567.7" cy="565.8" r="1.8"/><circle cx="572.5" cy="565.7" r="1.1"/><circle cx="577.6" cy="566.0" r="1.3"/><circle cx="584.1" cy="566.2" r="1.2"/><circle cx="588.0" cy="564.2" r="1.2"/><circle cx="552.1" cy="570.5" r="1.8"/><circle cx="555.4" cy="570.8" r="1.7"/><circle cx="561.8" cy="571.0" r="1.2"/><circle cx="566.0" cy="570.4" r="1.6"/><circle cx="572.8" cy="570.0" r="1.5"/><circle cx="577.4" cy="571.9" r="1.8"/><circle cx="582.0" cy="570.3" r="1.6"/><circle cx="589.1" cy="571.3" r="1.3"/><circle cx="557.6" cy="575.4" r="1.3"/><circle cx="560.6" cy="577.7" r="1.2"/><circle cx="566.9" cy="575.5" r="1.8"/><circle cx="573.5" cy="577.1" r="1.4"/><circle cx="577.6" cy="575.6" r="1.8"/><circle cx="582.4" cy="577.2" r="1.2"/><circle cx="588.6" cy="576.4" r="1.1"/><circle cx="552.3" cy="582.0" r="1.3"/><circle cx="556.4" cy="582.4" r="1.4"/><circle cx="561.9" cy="583.1" r="1.4"/><circle cx="567.5" cy="581.5" r="1.2"/><circle cx="571.6" cy="581.5" r="1.5"/><circle cx="576.6" cy="582.0" r="1.6"/><circle cx="582.9" cy="583.0" r="1.7"/><circle cx="587.5" cy="582.4" r="1.5"/><circle cx="557.1" cy="587.6" r="1.2"/><circle cx="561.2" cy="587.5" r="1.7"/><circle cx="567.4" cy="587.1" r="1.4"/><circle cx="571.6" cy="588.7" r="1.6"/><circle cx="578.7" cy="587.7" r="1.3"/><circle cx="583.4" cy="588.6" r="1.7"/><circle cx="587.5" cy="588.3" r="1.4"/><circle cx="555.9" cy="592.4" r="1.6"/><circle cx="561.2" cy="592.6" r="1.8"/><circle cx="567.4" cy="593.2" r="1.6"/><circle cx="572.8" cy="594.5" r="1.6"/><circle cx="578.0" cy="594.3" r="1.6"/><circle cx="584.1" cy="592.7" r="1.2"/></g>
<polygon points="0.0,463.0 29.3,447.6 62.7,423.0 96.0,401.0 129.3,381.0 156.0,365.3 169.3,364.2 191.3,373.4 224.4,387.0 253.5,406.5 282.7,422.0 321.6,433.7 360.5,445.4 386.0,460.7 416.8,476.0 450.3,496.7 488.8,517.0 522.0,530.0 550.5,541.7 551.8,571.0 551.8,617.0 -14.0,617.0 -14.0,463.0" fill="#3a2a10" opacity="0.55" filter="url(#sh)" transform="translate(0,-2)"/>
<clipPath id="ci"><polygon points="0.0,463.0 29.3,447.6 62.7,423.0 96.0,401.0 129.3,381.0 156.0,365.3 169.3,364.2 191.3,373.4 224.4,387.0 253.5,406.5 282.7,422.0 321.6,433.7 360.5,445.4 386.0,460.7 416.8,476.0 450.3,496.7 488.8,517.0 522.0,530.0 550.5,541.7 551.8,571.0 551.8,617.0 -14.0,617.0 -14.0,463.0"/></clipPath>
<polygon points="0.0,463.0 29.3,447.6 62.7,423.0 96.0,401.0 129.3,381.0 156.0,365.3 169.3,364.2 191.3,373.4 224.4,387.0 253.5,406.5 282.7,422.0 321.6,433.7 360.5,445.4 386.0,460.7 416.8,476.0 450.3,496.7 488.8,517.0 522.0,530.0 550.5,541.7 551.8,571.0 551.8,617.0 -14.0,617.0 -14.0,463.0" fill="#30647c" filter="url(#bbump)"/>
<g clip-path="url(#ci)" filter="url(#bl)"><path d="M-9.6,334.5 L-7.9,336.0 L-7.7,338.6 L-5.6,339.8M-5.6,339.8 L-0.2,341.4 L4.8,344.2 L10.5,345.0M-22.8,588.2 L-19.9,588.9 L-18.2,592.0 L-15.0,592.2M-15.0,592.2 L-13.9,595.5 L-11.7,597.7 L-8.7,599.3M-5.6,339.8 L-12.2,348.6 L-15.8,359.3 L-23.3,367.6M10.5,345.0 L10.9,347.9 L13.3,349.2 L15.1,351.0M44.0,345.4 L34.2,346.6 L24.6,348.4 L15.1,351.0M566.0,595.6 L565.2,592.7 L563.9,589.9 L564.7,586.8M425.4,613.9 L436.6,607.8 L448.4,603.0 L460.1,597.9M460.1,597.9 L462.0,599.3 L463.2,601.3 L464.5,603.2M564.7,598.0 L553.5,601.9 L541.9,604.7 L531.5,610.5M464.5,603.2 L474.0,603.9 L483.6,604.7 L493.0,606.8M566.0,595.6 L565.5,596.4 L564.4,596.9 L564.7,598.0M528.5,606.6 L519.5,603.8 L511.1,599.7 L502.4,596.3M502.4,596.3 L499.5,600.0 L495.1,602.4 L493.0,606.8M123.9,343.9 L131.6,342.7 L139.6,342.9 L147.2,340.8M425.4,613.9 L424.6,613.4 L424.8,612.4 L424.2,611.7M424.2,611.7 L411.8,606.8 L400.4,599.8 L387.9,595.0M382.4,607.1 L382.6,602.3 L386.9,599.4 L387.9,595.0M-13.3,374.3 L-10.5,379.1 L-6.4,383.3 L-5.3,389.0M-13.3,374.3 L-4.3,368.0 L6.0,364.0 L15.2,358.1M-5.3,389.0 L0.8,388.2 L6.4,385.4 L12.6,385.0M12.6,385.0 L15.3,380.4 L18.3,376.0 L20.5,371.1M15.2,358.1 L15.3,363.1 L19.5,366.4 L20.5,371.1M-23.3,367.6 L-19.5,369.0 L-15.7,370.6 L-13.3,374.3M-19.8,412.5 L-18.3,413.8 L-16.6,413.7 L-14.8,413.1M-14.8,413.1 L-13.0,404.6 L-9.1,396.8 L-5.3,389.0M15.1,351.0 L15.2,353.4 L13.5,355.8 L15.2,358.1M8.8,558.8 L0.5,569.6 L-7.9,580.4 L-15.0,592.2M8.8,558.8 L13.2,560.4 L17.5,562.3 L21.2,565.4M-8.7,599.3 L-2.0,599.4 L4.7,598.2 L11.4,599.9M11.4,599.9 L15.2,588.5 L16.5,576.5 L21.2,565.4M44.9,528.7 L50.1,521.3 L50.1,511.7 L55.3,504.3M44.9,528.7 L46.2,528.1 L45.2,528.9 L45.2,529.1M84.4,523.2 L82.1,513.4 L81.6,503.5 L81.5,493.5M433.5,431.6 L430.1,427.1 L429.4,421.4 L426.7,416.6M433.5,431.6 L441.5,427.5 L450.3,425.1 L457.8,420.1M458.3,398.7 L450.0,394.5 L440.9,392.7 L431.9,390.7M293.1,408.3 L293.6,406.3 L294.4,404.3 L293.5,402.1M293.1,408.3 L302.2,413.5 L312.0,416.7 L322.2,418.7M313.9,385.5 L321.8,386.5 L327.9,392.2 L335.5,393.6M335.5,393.6 L333.3,399.8 L334.6,406.2 L334.8,412.4M334.8,412.4 L330.3,413.9 L326.3,416.4 L322.2,418.7M386.9,325.8 L377.7,332.6 L369.4,340.5 L360.0,347.1M347.7,338.3 L353.0,339.6 L355.4,344.9 L360.0,347.1M427.2,332.9 L426.3,336.4 L423.5,339.3 L423.6,343.2M393.7,341.9 L403.7,341.7 L413.7,341.1 L423.6,343.2M44.0,345.4 L47.6,347.3 L50.4,350.4 L53.4,353.1M48.1,378.7 L49.2,373.5 L53.5,369.6 L53.9,364.1M48.1,378.7 L39.3,374.8 L29.6,374.0 L20.5,371.1M-26.1,579.9 L-22.0,570.0 L-17.3,560.4 L-11.0,551.7M-11.0,551.7 L-11.7,550.0 L-14.3,550.2 L-14.7,548.2M-22.8,588.2 L-22.3,584.8 L-25.9,583.0 L-26.1,579.9M8.8,558.8 L6.7,558.6 L7.8,555.7 L5.8,555.3M22.7,401.5 L21.5,408.2 L16.7,413.1 L14.0,419.0M22.7,401.5 L29.2,398.3 L36.2,397.5 L43.3,396.8M14.0,419.0 L24.4,420.6 L35.0,420.6 L45.4,422.5M43.3,396.8 L44.5,404.5 L44.0,412.5 L46.5,420.0M46.5,420.0 L45.2,420.4 L45.3,421.5 L45.4,422.5M50.5,386.4 L49.2,384.0 L49.8,381.0 L48.1,378.7M50.5,386.4 L48.5,390.1 L47.2,394.4 L43.3,396.8M12.6,385.0 L15.3,391.0 L20.4,395.4 L22.7,401.5M83.2,398.8 L72.0,395.5 L61.4,390.6 L50.5,386.4M83.2,398.8 L83.6,402.3 L84.4,405.7 L83.7,409.2M83.7,409.2 L71.7,414.4 L59.2,417.5 L46.5,420.0M74.5,441.5 L77.2,432.4 L80.7,423.7 L86.1,415.9M74.5,441.5 L65.7,441.4 L57.3,438.1 L48.5,437.8M48.5,437.8 L46.6,432.9 L46.7,427.6 L45.4,422.5M83.7,409.2 L86.1,410.8 L86.7,413.1 L86.1,415.9M-14.8,413.1 L-13.0,414.8 L-12.2,417.5 L-9.7,418.4M-9.7,418.4 L-2.7,420.6 L4.5,421.4 L11.8,420.7M81.5,571.3 L80.0,564.4 L80.6,557.2 L78.5,550.4M78.5,550.4 L68.5,546.4 L57.8,544.9 L47.5,542.0M44.9,547.8 L47.4,546.6 L46.0,543.6 L47.5,542.0M53.0,593.1 L54.7,588.1 L57.3,583.8 L61.5,580.7M21.4,565.4 L30.3,561.0 L37.2,553.9 L44.9,547.8M42.8,605.0 L32.7,604.4 L22.8,602.0 L12.7,601.0M11.4,599.9 L11.6,600.5 L11.5,601.5 L12.7,601.0M52.6,597.0 L51.5,595.5 L53.2,594.4 L53.0,593.1M52.6,597.0 L50.2,600.7 L45.8,602.0 L42.8,605.0M21.2,565.4 L21.1,564.0 L21.3,565.6 L21.4,565.4M45.2,529.1 L46.3,533.3 L47.6,537.5 L47.5,542.0M84.4,523.2 L85.6,525.2 L86.4,527.6 L88.4,529.1M78.5,550.4 L79.9,546.2 L84.7,544.8 L86.3,540.7M86.3,540.7 L85.5,536.6 L86.7,532.8 L88.4,529.1M82.5,492.5 L92.6,496.1 L103.7,494.7 L113.7,498.4M88.4,529.1 L96.5,526.6 L105.1,526.4 L113.4,525.2M113.4,525.2 L111.8,516.2 L112.3,507.3 L113.7,498.4M84.7,463.7 L86.6,463.3 L88.7,463.6 L90.4,462.2M84.7,463.7 L85.4,473.4 L83.8,483.0 L82.5,492.5M90.4,462.2 L102.2,467.3 L115.3,469.1 L126.9,474.7M126.9,474.7 L124.7,482.0 L120.1,488.3 L118.3,495.8M599.7,486.9 L587.0,478.6 L575.9,468.4 L564.3,458.9M567.5,447.1 L566.4,451.0 L566.6,455.3 L564.3,458.9M599.7,486.9 L590.3,492.5 L580.1,495.9 L569.7,498.7M552.8,468.9 L553.5,474.6 L552.8,480.2 L553.3,485.9M553.3,485.9 L559.9,488.7 L564.7,493.9 L569.7,498.7M569.7,498.7 L569.2,504.4 L567.1,509.7 L565.2,515.0M391.5,505.3 L391.2,509.4 L388.7,513.2 L389.5,517.5M391.5,505.3 L388.8,501.7 L388.1,497.0 L385.2,493.6M354.5,490.9 L364.8,490.4 L375.0,492.4 L385.2,493.6M354.5,490.9 L351.1,492.7 L351.7,497.3 L348.6,499.3M348.6,499.3 L352.7,505.2 L357.9,510.5 L360.7,517.3M389.5,517.5 L379.9,516.7 L370.3,518.9 L360.7,517.3M461.8,396.4 L461.5,398.5 L460.4,399.3 L458.3,398.7M461.8,396.4 L466.1,385.5 L465.1,373.4 L469.5,362.5M428.8,368.5 L440.7,364.6 L451.7,358.2 L464.0,355.5M428.8,368.5 L429.4,375.2 L429.5,382.0 L430.2,388.7M430.2,388.7 L430.2,389.8 L429.8,391.3 L431.9,390.7M182.5,364.8 L181.0,356.7 L181.3,348.3 L179.0,340.4M182.5,364.8 L172.7,363.4 L163.3,366.9 L153.7,366.5M179.0,340.4 L169.1,339.5 L159.4,340.3 L149.8,342.9M153.7,366.5 L154.1,358.4 L150.7,350.9 L149.8,342.9M147.2,340.8 L147.4,342.3 L149.0,342.1 L149.8,342.9M184.7,333.6 L183.2,336.2 L181.1,338.3 L179.0,340.4M313.9,385.5 L313.5,381.0 L313.4,376.5 L312.1,372.1M355.0,380.2 L346.2,374.4 L338.2,367.7 L330.8,360.2M355.0,380.2 L349.0,385.3 L341.4,388.3 L335.5,393.6M312.1,372.1 L318.0,367.5 L324.8,364.6 L330.8,360.2M394.7,364.9 L393.1,365.7 L393.6,363.2 L392.5,363.4M394.7,364.9 L396.8,375.7 L396.7,386.7 L398.5,397.5M398.5,397.5 L396.7,399.1 L396.2,401.7 L394.0,402.8M394.0,402.8 L385.7,399.4 L377.2,396.5 L368.7,393.8M358.7,379.5 L359.5,375.1 L364.7,373.4 L365.4,368.8M393.7,341.9 L394.3,349.1 L394.1,356.3 L392.5,363.4M425.3,365.1 L423.9,357.9 L424.6,350.5 L423.6,343.2M425.3,365.1 L415.1,363.2 L404.9,366.8 L394.7,364.9M428.8,368.5 L427.9,367.1 L427.0,365.7 L425.3,365.1M430.2,388.7 L419.8,392.3 L409.6,396.5 L398.5,397.5M426.7,416.6 L416.4,418.1 L406.1,417.4 L395.9,416.0M395.9,416.0 L393.5,411.8 L392.7,407.4 L394.0,402.8M395.9,416.0 L395.5,418.0 L395.8,420.2 L394.1,421.8M394.1,421.8 L382.5,426.5 L370.1,428.5 L357.8,430.4M357.8,430.4 L362.9,418.7 L365.6,406.2 L368.7,393.8M334.8,412.4 L343.2,417.5 L349.8,424.6 L356.1,431.9M330.8,360.2 L329.4,352.8 L329.9,345.5 L331.5,338.2M354.5,490.9 L352.5,483.6 L351.2,476.1 L350.6,468.6M323.7,503.7 L323.7,504.8 L324.6,505.2 L325.2,505.8M348.6,499.3 L341.3,503.0 L333.3,504.5 L325.2,505.8M327.5,474.4 L335.6,474.2 L343.2,471.7 L350.6,468.6M385.2,493.6 L385.9,487.0 L384.6,480.3 L387.2,474.0M387.2,474.0 L376.2,469.8 L366.2,463.8 L356.7,456.8M350.6,468.6 L353.7,465.2 L355.7,461.3 L356.7,456.8M387.2,474.0 L390.1,470.0 L393.5,466.6 L398.4,465.1M403.2,445.4 L399.7,451.5 L401.0,458.8 L398.4,465.1M403.2,445.4 L402.9,445.6 L402.6,445.8 L403.1,445.2M403.1,445.2 L387.4,448.0 L371.5,447.0 L355.7,447.5M356.7,456.8 L357.2,453.6 L356.1,450.6 L355.7,447.5M403.1,445.2 L401.6,436.9 L396.4,429.8 L394.1,421.8M356.1,431.9 L353.8,435.8 L354.9,440.3 L354.3,444.5M119.7,530.8 L117.8,528.7 L114.4,528.4 L113.4,525.2M119.7,530.8 L130.5,528.2 L141.3,525.3 L152.1,522.9M118.3,495.8 L128.8,503.1 L141.7,506.0 L152.4,513.1M257.0,508.3 L268.6,500.1 L278.7,490.3 L289.1,480.8M257.0,508.3 L261.1,513.4 L266.6,517.3 L270.1,523.0M285.8,523.5 L280.5,525.2 L275.4,522.4 L270.1,523.0M285.8,523.5 L288.7,512.3 L293.8,501.8 L295.1,490.2M295.1,490.2 L291.6,488.0 L290.8,484.1 L289.1,480.8M323.7,503.7 L313.4,500.8 L304.2,495.6 L295.1,490.2M325.1,506.5 L315.7,515.1 L305.7,522.9 L296.0,531.1M296.0,531.1 L293.0,528.1 L288.4,527.1 L285.8,523.5M153.0,368.0 L143.0,367.0 L133.4,369.7 L123.6,370.6M153.0,368.0 L152.1,374.5 L154.8,380.8 L154.5,387.3M154.5,387.3 L145.6,389.6 L136.3,389.3 L127.4,391.6M123.6,370.6 L124.5,377.7 L124.5,384.9 L127.4,391.6M-19.0,521.5 L-15.5,515.1 L-12.7,508.3 L-8.9,502.0M-15.1,526.5 L-5.1,523.9 L5.0,523.7 L15.2,523.7M-8.9,502.0 L-1.0,500.5 L6.9,503.0 L14.8,502.4M14.8,502.4 L14.5,508.5 L16.4,514.0 L19.5,519.2M19.5,519.2 L19.0,521.6 L15.3,520.9 L15.2,523.7M-14.7,548.2 L-13.3,541.0 L-13.4,533.7 L-15.1,526.5M5.8,555.3 L9.0,544.8 L10.9,533.9 L15.2,523.7M44.9,528.7 L36.2,526.3 L27.5,523.8 L19.5,519.2M20.3,488.7 L16.9,492.6 L18.0,498.4 L14.8,502.4M154.7,387.4 L155.2,395.9 L154.1,404.1 L151.9,412.2M154.7,387.4 L154.4,387.6 L154.4,387.5 L154.5,387.3M124.9,395.8 L126.3,394.7 L125.8,392.6 L127.4,391.6M124.9,395.8 L126.0,402.1 L125.3,408.8 L127.9,415.0M151.9,412.2 L143.8,412.3 L136.0,414.8 L127.9,415.0M83.2,398.8 L84.6,396.4 L86.7,394.5 L88.4,392.4M86.1,415.9 L97.1,421.2 L109.2,423.8 L119.9,430.0M127.9,415.0 L126.9,420.9 L123.2,425.4 L119.9,430.0M84.7,463.7 L82.5,464.3 L82.1,463.1 L82.3,461.4M82.3,461.4 L78.1,455.4 L77.0,448.2 L74.5,441.5M90.4,462.2 L100.1,452.4 L109.8,442.4 L121.1,434.3M119.9,430.0 L119.1,431.8 L120.5,433.0 L121.1,434.3M-9.7,418.4 L-11.3,426.5 L-11.6,434.7 L-13.1,442.8M-25.3,452.4 L-21.5,448.9 L-17.1,446.0 L-13.1,442.8M-15.1,476.0 L-18.1,473.3 L-21.7,471.6 L-25.5,470.7M20.6,484.5 L17.8,478.5 L12.8,474.5 L7.9,470.3M20.6,484.5 L27.6,480.2 L35.5,477.4 L42.2,472.4M8.4,458.7 L13.3,454.6 L16.9,449.5 L21.0,444.8M42.2,472.4 L42.7,470.7 L43.4,469.1 L44.2,467.5M44.2,467.5 L44.4,460.4 L40.6,454.1 L39.8,447.2M39.8,447.2 L33.5,446.7 L27.5,443.9 L21.0,444.8M20.3,488.7 L18.5,487.2 L22.5,486.1 L20.6,484.5M-15.1,476.0 L-7.9,472.4 L0.2,472.2 L7.9,470.3M-13.1,442.8 L-5.1,447.1 L1.6,453.0 L8.4,458.7M11.8,420.7 L14.5,428.8 L16.7,437.2 L21.0,444.8M82.3,461.4 L69.7,464.1 L56.9,465.2 L44.2,467.5M260.8,451.7 L259.9,448.7 L255.7,449.6 L254.7,446.8M260.8,451.7 L271.4,446.1 L281.0,438.7 L291.7,433.3M254.7,446.8 L252.9,440.8 L254.3,434.3 L251.8,428.5M291.7,433.3 L290.3,427.7 L288.0,422.4 L288.2,416.6M225.3,460.7 L233.1,467.9 L239.5,476.3 L246.8,484.0M225.3,460.7 L226.7,461.1 L223.9,459.6 L225.6,460.1M267.4,466.0 L259.3,470.5 L253.8,478.1 L246.8,484.0M267.4,466.0 L263.7,461.9 L264.3,455.9 L260.8,451.7M225.6,460.1 L235.9,457.1 L245.4,452.3 L254.7,446.8M293.1,408.3 L293.0,412.0 L289.1,413.4 L288.2,416.6M285.0,392.9 L275.5,394.1 L265.9,394.1 L256.3,393.6M285.0,392.9 L287.5,396.3 L289.4,400.2 L293.5,402.1M189.5,441.8 L189.5,435.4 L192.0,429.1 L191.3,422.6M189.5,441.8 L199.5,442.2 L209.6,443.5 L219.7,442.8M191.3,422.6 L201.6,418.5 L211.9,414.4 L222.9,412.6M219.7,442.8 L223.0,434.2 L223.7,425.0 L225.1,416.0M180.5,413.5 L184.4,416.2 L187.5,419.8 L191.3,422.6M180.5,413.5 L173.5,414.1 L167.8,418.6 L161.1,420.2M161.1,420.2 L159.0,427.5 L156.2,434.6 L156.0,442.3M189.4,442.0 L178.2,442.2 L167.1,440.9 L156.0,442.3M189.4,442.0 L191.0,442.8 L188.7,441.5 L189.5,441.8M213.6,469.0 L206.1,469.3 L198.9,466.5 L191.5,467.3M225.6,460.1 L223.7,454.3 L220.1,449.1 L219.7,442.8M189.4,442.0 L191.8,450.3 L188.9,459.0 L191.5,467.3M251.8,428.5 L242.5,425.0 L233.3,421.5 L225.1,416.0M256.3,393.6 L254.9,392.6 L252.8,392.7 L252.5,390.5M252.5,390.5 L243.2,395.6 L233.4,399.2 L223.6,403.0M223.6,403.0 L221.7,406.1 L221.9,409.3 L222.9,412.6M214.1,369.8 L215.0,376.7 L214.0,384.0 L216.9,390.7M186.7,369.4 L181.8,376.0 L180.3,384.2 L176.6,391.4M176.6,391.4 L177.7,393.8 L179.8,395.6 L180.4,398.2M182.5,364.8 L185.1,365.2 L186.1,367.0 L186.7,369.4M216.2,366.5 L216.2,368.0 L213.5,367.8 L214.1,369.8M216.2,366.5 L229.6,366.8 L242.5,362.8 L255.8,362.3M223.6,403.0 L223.0,398.0 L220.0,394.3 L216.9,390.7M154.7,387.4 L161.7,390.4 L169.0,391.9 L176.6,391.4M153.0,368.0 L154.5,368.1 L154.7,367.6 L153.7,366.5M161.1,420.2 L157.0,418.8 L155.5,414.2 L151.9,412.2M559.8,419.6 L561.2,413.9 L559.0,408.5 L558.2,403.0M567.5,447.1 L564.2,440.9 L557.7,437.7 L553.7,432.1M559.8,419.6 L556.3,423.1 L556.2,428.2 L553.7,432.1M531.2,459.6 L539.0,461.3 L544.9,467.3 L552.8,468.9M531.2,459.6 L527.9,455.1 L529.9,449.1 L527.0,444.6M527.0,444.6 L527.8,444.7 L528.3,444.5 L528.0,443.5M528.0,443.5 L525.7,429.9 L527.0,416.0 L526.5,402.3M550.1,432.3 L542.7,421.9 L534.7,412.0 L526.5,402.3M536.5,341.8 L546.2,342.2 L555.3,337.9 L565.0,338.2M565.0,338.2 L566.2,336.8 L564.8,340.1 L566.0,338.8M559.1,372.8 L550.0,371.8 L540.9,370.4 L531.7,370.4M524.3,326.8 L516.5,330.1 L509.9,335.7 L502.2,339.3M531.5,370.6 L521.7,366.2 L510.6,367.3 L500.8,362.8M531.5,370.6 L530.6,369.6 L531.5,370.4 L531.7,370.4M502.2,339.3 L501.3,347.1 L499.3,354.9 L500.8,362.8M561.2,374.3 L560.3,374.1 L560.3,372.6 L559.1,372.8M531.5,370.6 L530.5,379.2 L529.3,387.8 L527.4,396.2M558.2,403.0 L547.7,401.6 L537.4,399.5 L527.4,396.2M565.2,515.0 L564.4,516.9 L561.7,516.5 L561.3,518.6M561.3,518.6 L552.0,517.7 L543.1,515.0 L533.9,513.9M531.6,495.8 L532.9,501.7 L532.9,507.9 L533.9,513.9M531.2,459.6 L526.0,465.7 L520.3,471.5 L517.1,479.1M531.6,495.8 L528.2,492.9 L524.6,490.2 L520.2,488.9M517.1,479.1 L510.4,474.7 L502.4,473.6 L495.4,469.9M506.3,439.9 L513.4,440.5 L520.1,443.0 L527.0,444.6M506.3,439.9 L506.2,441.6 L505.7,442.9 L503.6,442.5M503.6,442.5 L499.7,451.3 L497.5,460.6 L495.4,469.9M433.5,431.6 L432.0,434.4 L433.2,438.2 L430.6,440.7M403.2,445.4 L410.5,445.1 L417.9,444.6 L425.2,443.5M430.6,440.7 L429.3,442.6 L426.5,441.8 L425.2,443.5M490.4,417.2 L493.9,420.1 L498.5,420.8 L502.2,423.4M502.2,423.4 L510.2,415.6 L518.7,408.3 L525.2,399.0M484.3,399.6 L486.3,395.1 L491.6,393.9 L494.1,389.8M494.1,389.8 L504.2,393.5 L515.0,395.2 L525.2,398.6M525.2,398.6 L525.3,398.8 L525.1,398.9 L525.2,399.0M468.6,430.1 L476.2,426.3 L483.5,422.1 L490.4,417.2M468.6,430.1 L468.6,434.4 L470.5,438.4 L470.6,442.7M506.3,439.9 L504.8,434.5 L503.8,428.9 L502.2,423.4M461.8,396.4 L469.5,396.4 L476.9,398.1 L484.3,399.6M526.5,402.3 L527.5,400.6 L525.0,400.3 L525.2,399.0M491.8,368.4 L494.1,375.4 L491.8,382.8 L494.1,389.8M527.4,396.2 L526.7,397.0 L527.1,398.8 L525.2,398.6M488.5,333.6 L480.8,338.0 L472.1,339.9 L464.5,344.3M464.2,343.8 L464.8,343.6 L463.4,344.7 L464.5,344.3M464.0,355.5 L463.9,351.7 L463.5,348.0 L464.5,344.3M322.4,331.7 L324.8,334.7 L329.3,334.8 L331.5,338.2M427.2,332.9 L439.2,337.7 L451.3,342.0 L464.2,343.8M425.0,542.1 L413.9,544.3 L403.0,547.5 L393.0,552.9M425.0,542.1 L425.2,553.1 L427.7,564.0 L427.4,575.1M424.2,576.8 L415.4,574.7 L406.7,571.8 L397.5,571.7M424.2,576.8 L425.1,575.9 L425.4,574.0 L427.4,575.1M397.5,571.7 L395.8,565.5 L395.6,558.9 L393.0,552.9M429.2,527.7 L416.2,523.9 L403.1,520.7 L389.8,518.2M429.2,527.7 L430.8,530.3 L430.2,533.2 L430.2,536.0M430.2,536.0 L429.4,538.9 L428.0,541.1 L425.0,542.1M386.8,545.6 L386.7,536.4 L390.0,527.5 L389.8,518.2M386.8,545.6 L387.5,549.2 L389.9,551.4 L393.0,552.9M458.4,572.3 L457.5,571.4 L459.7,572.8 L458.7,571.9M458.4,572.3 L448.0,572.2 L437.7,573.4 L427.4,575.1M463.2,555.8 L462.5,561.4 L459.5,566.3 L458.7,571.9M463.2,555.8 L451.8,549.8 L440.8,543.2 L430.2,536.0M387.9,595.0 L387.2,592.2 L387.2,589.4 L387.4,586.6M387.4,586.6 L391.3,582.0 L394.7,577.1 L397.5,571.7M460.1,597.9 L458.4,589.4 L459.0,580.8 L458.4,572.3M256.5,361.7 L263.5,366.2 L272.2,365.7 L279.2,370.0M257.0,356.5 L259.6,355.0 L259.9,352.0 L261.3,349.7M261.3,349.7 L272.1,346.0 L283.0,342.3 L294.1,339.5M279.2,370.0 L285.2,365.1 L292.0,361.7 L299.0,358.5M299.0,358.5 L301.4,353.7 L299.3,348.5 L300.5,343.6M300.5,343.6 L299.3,340.8 L295.4,342.1 L294.1,339.5M228.5,324.7 L236.9,336.2 L247.0,346.3 L257.0,356.5M255.8,362.3 L255.2,361.2 L255.2,360.8 L256.5,361.7M312.1,372.1 L307.5,367.8 L304.6,361.9 L299.0,358.5M322.4,331.7 L314.1,334.0 L307.3,338.9 L300.5,343.6M315.8,465.4 L307.3,470.5 L298.5,474.9 L288.7,477.2M287.1,475.2 L288.2,475.5 L289.2,475.7 L288.7,477.2M295.5,437.8 L302.8,439.5 L310.5,439.6 L317.3,443.3M317.3,443.3 L318.8,443.5 L318.0,445.8 L319.6,445.9M327.5,474.4 L323.7,471.3 L319.6,468.5 L315.8,465.4M354.3,444.5 L342.7,443.0 L331.1,444.2 L319.6,445.9M267.4,466.0 L274.4,468.1 L281.2,470.7 L287.1,475.2M251.4,506.5 L253.6,506.1 L254.6,509.4 L257.0,508.3M251.4,506.5 L250.4,502.5 L247.7,499.5 L244.9,496.7M244.9,496.7 L245.1,492.4 L245.9,488.2 L246.8,484.0M291.7,433.3 L293.2,434.6 L293.4,437.0 L295.5,437.8M358.0,609.5 L354.8,604.2 L352.4,598.3 L348.6,593.3M348.6,593.3 L340.6,596.3 L334.2,602.4 L325.9,604.8M84.7,368.2 L82.1,357.9 L80.2,347.6 L79.3,337.1M84.7,368.2 L85.5,372.2 L88.7,374.1 L91.6,376.3M83.4,329.9 L93.7,337.7 L104.3,344.9 L116.1,350.2M83.4,329.9 L82.6,332.6 L81.2,335.0 L79.3,337.1M116.1,350.2 L114.2,353.4 L115.8,357.1 L114.7,360.4M53.4,353.1 L61.0,346.1 L69.9,341.2 L79.3,337.1M53.9,364.1 L64.1,366.0 L74.2,368.8 L84.7,368.2M123.6,370.6 L121.5,366.4 L118.2,363.4 L114.7,360.4M81.5,571.3 L85.6,573.9 L89.8,576.2 L94.4,577.6M86.3,540.7 L95.5,544.0 L102.7,551.1 L112.2,553.8M94.4,577.6 L99.2,576.7 L103.4,574.3 L107.8,572.4M119.7,530.8 L121.1,536.5 L120.2,542.0 L118.6,547.4M112.2,553.8 L114.1,551.4 L116.0,549.0 L118.6,547.4M52.6,597.0 L60.8,604.3 L71.5,608.0 L79.4,615.8M79.4,615.8 L84.5,609.7 L89.2,603.3 L94.4,597.3M130.1,442.8 L138.4,443.1 L146.8,442.0 L155.1,443.2M130.1,442.8 L128.1,453.1 L129.4,463.6 L127.9,474.0M161.1,464.1 L158.0,469.3 L153.2,473.1 L150.0,478.2M127.9,474.0 L135.0,476.5 L142.3,478.2 L150.0,478.2M121.1,434.3 L123.2,438.1 L127.2,439.8 L130.1,442.8M156.0,442.3 L155.7,442.6 L155.9,443.4 L155.1,443.2M126.9,474.7 L128.1,475.5 L126.7,473.0 L127.9,474.0M188.7,469.8 L179.5,468.0 L170.7,464.2 L161.1,464.1M183.6,495.0 L175.1,495.3 L167.4,498.3 L159.7,501.2M183.6,495.0 L184.4,486.4 L186.5,478.1 L188.7,469.8M152.4,513.1 L154.1,508.7 L155.8,504.3 L159.7,501.2M520.2,488.9 L514.2,495.1 L506.7,499.5 L500.8,505.8M500.8,505.8 L500.3,510.3 L501.6,514.4 L504.1,518.1M530.6,518.4 L521.8,518.1 L512.9,519.3 L504.1,518.1M495.4,469.9 L495.0,469.0 L495.4,469.9 L495.4,470.0M495.4,470.0 L484.2,467.5 L473.0,464.8 L462.1,461.3M495.4,470.0 L492.0,479.4 L489.1,489.0 L484.7,498.0M430.6,440.7 L440.8,447.4 L450.5,454.9 L460.0,462.5M462.1,461.3 L461.4,461.7 L461.3,463.1 L460.0,462.5M420.1,479.1 L422.2,478.0 L424.1,476.5 L426.2,475.5M420.1,479.1 L418.1,484.4 L416.7,489.8 L417.0,495.5M426.2,475.5 L435.6,476.5 L445.0,477.2 L454.4,476.7M433.9,507.2 L441.4,502.3 L449.3,498.3 L457.7,495.2M398.4,465.1 L406.7,468.2 L412.5,475.0 L420.1,479.1M425.2,443.5 L424.4,454.2 L427.3,464.8 L426.2,475.5M391.5,505.3 L400.5,503.3 L407.9,497.0 L417.0,495.5M460.0,462.5 L459.0,467.6 L456.4,472.0 L454.4,476.7M429.2,527.7 L429.0,526.8 L430.4,526.8 L430.2,525.9M430.2,525.9 L432.1,519.8 L431.6,513.3 L433.9,507.2M484.7,498.0 L478.5,498.5 L472.5,500.0 L466.7,502.3M387.4,586.6 L377.0,583.7 L366.2,582.2 L356.0,578.7M386.8,545.6 L378.0,547.1 L369.3,548.7 L360.6,550.3M360.6,550.3 L360.0,559.9 L358.0,569.3 L356.0,578.7M348.6,593.3 L349.4,589.3 L348.8,584.9 L351.6,581.5M356.0,578.7 L355.2,580.6 L354.1,582.2 L351.6,581.5M325.1,506.5 L328.8,513.4 L330.8,521.0 L333.9,528.2M360.7,517.3 L357.9,524.6 L350.8,528.9 L347.8,536.1M333.9,528.2 L339.1,529.7 L343.3,533.1 L347.8,536.1M360.6,550.3 L356.7,549.3 L354.6,545.6 L351.1,544.0M347.8,536.1 L347.9,539.1 L349.4,541.6 L351.1,544.0M351.1,544.0 L341.7,550.8 L331.8,557.0 L322.8,564.4M322.8,568.7 L322.6,567.3 L324.2,565.9 L322.8,564.4M322.8,564.4 L318.7,559.2 L317.8,552.1 L312.7,547.4M296.0,531.1 L298.8,533.9 L298.5,537.7 L299.3,541.2M299.3,541.2 L304.3,542.0 L307.7,546.6 L312.7,547.4M216.0,529.5 L209.5,526.1 L202.1,525.5 L195.8,521.6M216.0,529.5 L216.3,518.1 L220.0,507.2 L220.6,495.9M195.8,521.6 L193.1,515.1 L190.8,508.5 L190.6,501.3M190.6,501.3 L199.9,499.0 L209.2,496.6 L218.5,494.3M220.6,495.9 L219.8,495.5 L219.2,494.9 L218.5,494.3M251.4,506.5 L242.6,516.9 L233.9,527.2 L224.7,537.2M224.7,537.2 L223.8,537.9 L223.1,537.8 L222.7,536.6M222.7,536.6 L219.3,535.3 L217.3,532.7 L216.0,529.5M213.6,469.0 L216.0,477.3 L217.9,485.7 L218.5,494.3M183.6,495.0 L185.9,497.1 L187.8,499.7 L190.6,501.3M107.8,572.4 L113.6,576.8 L120.7,578.4 L127.0,581.7M118.6,547.4 L127.1,550.6 L135.6,553.4 L143.5,557.8M127.0,581.7 L132.5,577.0 L139.0,574.3 L145.9,572.2M143.5,557.8 L144.0,562.7 L146.0,567.3 L145.9,572.2M224.7,537.2 L225.7,537.8 L225.9,539.1 L226.9,539.7M191.8,562.1 L201.9,566.8 L210.4,573.8 L219.3,580.2M226.9,539.7 L222.6,552.9 L220.2,566.4 L219.3,580.2M264.8,582.2 L258.8,577.0 L253.1,571.7 L249.3,564.6M264.8,582.2 L270.5,576.9 L278.9,576.2 L284.5,570.8M284.5,558.4 L275.8,555.2 L267.2,551.7 L260.0,545.7M249.3,564.6 L247.3,560.3 L250.3,555.7 L248.4,551.5M260.0,545.7 L256.4,548.1 L251.7,548.4 L248.4,551.5M270.1,523.0 L267.4,530.8 L262.1,537.6 L260.0,545.7M299.3,541.2 L294.0,546.6 L289.9,553.1 L284.5,558.4M226.9,539.7 L233.2,545.2 L241.5,547.0 L248.4,551.5M222.6,586.3 L231.9,579.5 L239.8,571.0 L249.3,564.6M127.0,581.7 L127.3,589.4 L124.5,597.0 L125.8,604.7M94.4,597.3 L104.2,600.3 L113.8,603.9 L122.4,609.6M125.8,604.7 L123.0,605.2 L124.4,608.6 L122.4,609.6M502.4,596.3 L504.1,594.2 L500.1,592.6 L501.9,590.5M458.7,571.9 L470.8,577.1 L484.1,578.3 L496.0,583.9M501.9,590.5 L500.9,587.4 L496.9,587.0 L496.0,583.9M501.6,524.2 L502.1,531.9 L502.2,539.6 L503.7,547.2M501.6,524.2 L490.5,524.2 L479.3,524.4 L468.2,522.9M467.6,551.3 L477.4,549.6 L487.3,552.2 L497.1,550.2M467.6,551.3 L467.2,542.1 L468.6,532.8 L468.0,523.6M497.1,550.2 L498.9,548.4 L501.2,547.6 L503.7,547.2M468.0,523.6 L467.4,523.2 L468.4,523.2 L468.2,522.9M504.1,518.1 L504.0,520.5 L501.3,521.7 L501.6,524.2M463.2,555.8 L465.5,555.2 L467.1,553.8 L467.6,551.3M496.0,583.9 L497.2,572.7 L498.6,561.5 L497.1,550.2M430.2,525.9 L442.8,525.2 L455.3,523.2 L468.0,523.6M297.1,579.3 L293.3,588.6 L290.2,598.0 L288.3,607.8M289.4,609.4 L288.2,609.4 L288.0,608.7 L288.3,607.8M318.4,594.7 L318.5,589.0 L316.6,583.8 L314.3,578.8M322.8,568.7 L320.1,572.1 L316.1,574.5 L314.3,578.8M284.5,570.8 L288.0,574.7 L292.3,577.4 L297.1,579.3M264.8,582.2 L262.6,584.8 L264.0,588.2 L263.0,591.1M266.5,598.6 L265.8,595.9 L263.5,593.9 L263.0,591.1M266.5,598.6 L273.6,602.0 L281.0,604.8 L288.3,607.8M195.4,522.0 L189.0,531.8 L187.8,543.9 L181.4,553.8M195.4,522.0 L182.3,524.3 L169.4,528.4 L156.0,529.4M181.4,553.8 L172.9,546.8 L165.4,538.9 L156.5,532.4M156.0,529.4 L156.1,530.4 L158.2,531.1 L156.5,532.4M191.8,562.1 L189.6,561.5 L187.4,560.8 L185.4,562.7M195.8,521.6 L195.0,520.8 L194.7,520.7 L195.4,522.0M185.4,562.7 L183.7,559.8 L182.1,557.0 L181.4,553.8M180.6,569.8 L173.2,573.3 L165.8,577.0 L157.6,578.4M180.6,569.8 L181.9,567.3 L184.0,565.2 L185.4,562.7M143.5,557.8 L147.4,549.1 L153.1,541.3 L156.5,532.4M157.6,578.4 L153.9,576.0 L149.7,574.5 L145.9,572.2M180.6,569.8 L183.0,579.9 L189.2,588.3 L192.2,598.1M157.6,578.4 L157.4,585.9 L160.2,593.3 L159.0,600.9M159.0,600.9 L170.1,600.0 L181.0,598.0 L192.2,598.1M125.8,604.7 L136.5,605.8 L147.2,604.9 L157.9,604.2M159.0,600.9 L160.2,602.5 L158.1,603.1 L157.9,604.2M531.2,543.1 L525.7,544.5 L521.7,548.2 L517.4,551.4M531.2,543.1 L539.7,544.2 L547.9,546.5 L556.4,547.8M517.4,551.4 L517.4,557.8 L519.1,563.7 L521.9,569.4M521.9,569.4 L525.3,573.6 L531.5,573.6 L534.8,577.8M534.8,577.8 L542.1,576.4 L549.7,576.3 L556.9,574.1M556.9,574.1 L558.0,567.1 L560.7,560.3 L560.7,553.1M530.6,518.4 L530.8,526.6 L529.6,534.9 L531.2,543.1M503.7,547.2 L507.9,549.9 L513.1,549.1 L517.4,551.4M561.3,518.6 L559.4,528.3 L557.4,538.0 L556.4,547.8M501.9,590.5 L509.7,584.5 L514.5,575.8 L521.9,569.4M528.5,606.6 L531.1,597.1 L532.2,587.3 L534.8,577.8M564.7,586.8 L563.4,581.8 L559.4,578.4 L556.9,574.1M194.4,600.3 L203.5,597.1 L213.0,595.4 L222.6,595.0M222.6,595.0 L224.0,595.4 L224.0,597.1 L225.1,597.9M192.2,598.1 L193.9,597.8 L193.0,600.3 L194.4,600.3M222.6,586.3 L224.0,589.2 L223.6,592.1 L222.6,595.0M263.0,591.1 L250.0,591.8 L237.5,594.2 L225.1,597.9" fill="none" stroke="#1d4a5c" stroke-width="1.3" opacity="0.45"/><path d="M-10.5,333.4 L-8.8,334.9 L-8.6,337.5 L-6.5,338.7M-6.5,338.7 L-1.1,340.3 L3.9,343.1 L9.6,343.9M-23.7,587.1 L-20.8,587.8 L-19.1,590.9 L-15.9,591.1M-15.9,591.1 L-14.8,594.4 L-12.6,596.6 L-9.6,598.2M-6.5,338.7 L-13.1,347.5 L-16.7,358.2 L-24.2,366.5M9.6,343.9 L10.0,346.8 L12.4,348.1 L14.2,349.9M43.1,344.3 L33.3,345.5 L23.7,347.3 L14.2,349.9M565.1,594.5 L564.3,591.6 L563.0,588.8 L563.8,585.7M424.5,612.8 L435.7,606.7 L447.5,601.9 L459.2,596.8M459.2,596.8 L461.1,598.2 L462.3,600.2 L463.6,602.1M563.8,596.9 L552.6,600.8 L541.0,603.6 L530.6,609.4M463.6,602.1 L473.1,602.8 L482.7,603.6 L492.1,605.7M565.1,594.5 L564.6,595.3 L563.5,595.8 L563.8,596.9M527.6,605.5 L518.6,602.7 L510.2,598.6 L501.5,595.2M501.5,595.2 L498.6,598.9 L494.2,601.3 L492.1,605.7M123.0,342.8 L130.7,341.6 L138.7,341.8 L146.3,339.7M424.5,612.8 L423.7,612.3 L423.9,611.3 L423.3,610.6M423.3,610.6 L410.9,605.7 L399.5,598.7 L387.0,593.9M381.5,606.0 L381.7,601.2 L386.0,598.3 L387.0,593.9M-14.2,373.2 L-11.4,378.0 L-7.3,382.2 L-6.2,387.9M-14.2,373.2 L-5.2,366.9 L5.1,362.9 L14.3,357.0M-6.2,387.9 L-0.1,387.1 L5.5,384.3 L11.7,383.9M11.7,383.9 L14.4,379.3 L17.4,374.9 L19.6,370.0M14.3,357.0 L14.4,362.0 L18.6,365.3 L19.6,370.0M-24.2,366.5 L-20.4,367.9 L-16.6,369.5 L-14.2,373.2M-20.7,411.4 L-19.2,412.7 L-17.5,412.6 L-15.7,412.0M-15.7,412.0 L-13.9,403.5 L-10.0,395.7 L-6.2,387.9M14.2,349.9 L14.3,352.3 L12.6,354.7 L14.3,357.0M7.9,557.7 L-0.4,568.5 L-8.8,579.3 L-15.9,591.1M7.9,557.7 L12.3,559.3 L16.6,561.2 L20.3,564.3M-9.6,598.2 L-2.9,598.3 L3.8,597.1 L10.5,598.8M10.5,598.8 L14.3,587.4 L15.6,575.4 L20.3,564.3M44.0,527.6 L49.2,520.2 L49.2,510.6 L54.4,503.2M44.0,527.6 L45.3,527.0 L44.3,527.8 L44.3,528.0M83.5,522.1 L81.2,512.3 L80.7,502.4 L80.6,492.4M432.6,430.5 L429.2,426.0 L428.5,420.3 L425.8,415.5M432.6,430.5 L440.6,426.4 L449.4,424.0 L456.9,419.0M457.4,397.6 L449.1,393.4 L440.0,391.6 L431.0,389.6M292.2,407.2 L292.7,405.2 L293.5,403.2 L292.6,401.0M292.2,407.2 L301.3,412.4 L311.1,415.6 L321.3,417.6M313.0,384.4 L320.9,385.4 L327.0,391.1 L334.6,392.5M334.6,392.5 L332.4,398.7 L333.7,405.1 L333.9,411.3M333.9,411.3 L329.4,412.8 L325.4,415.3 L321.3,417.6M386.0,324.7 L376.8,331.5 L368.5,339.4 L359.1,346.0M346.8,337.2 L352.1,338.5 L354.5,343.8 L359.1,346.0M426.3,331.8 L425.4,335.3 L422.6,338.2 L422.7,342.1M392.8,340.8 L402.8,340.6 L412.8,340.0 L422.7,342.1M43.1,344.3 L46.7,346.2 L49.5,349.3 L52.5,352.0M47.2,377.6 L48.3,372.4 L52.6,368.5 L53.0,363.0M47.2,377.6 L38.4,373.7 L28.7,372.9 L19.6,370.0M-27.0,578.8 L-22.9,568.9 L-18.2,559.3 L-11.9,550.6M-11.9,550.6 L-12.6,548.9 L-15.2,549.1 L-15.6,547.1M-23.7,587.1 L-23.2,583.7 L-26.8,581.9 L-27.0,578.8M7.9,557.7 L5.8,557.5 L6.9,554.6 L4.9,554.2M21.8,400.4 L20.6,407.1 L15.8,412.0 L13.1,417.9M21.8,400.4 L28.3,397.2 L35.3,396.4 L42.4,395.7M13.1,417.9 L23.5,419.5 L34.1,419.5 L44.5,421.4M42.4,395.7 L43.6,403.4 L43.1,411.4 L45.6,418.9M45.6,418.9 L44.3,419.3 L44.4,420.4 L44.5,421.4M49.6,385.3 L48.3,382.9 L48.9,379.9 L47.2,377.6M49.6,385.3 L47.6,389.0 L46.3,393.3 L42.4,395.7M11.7,383.9 L14.4,389.9 L19.5,394.3 L21.8,400.4M82.3,397.7 L71.1,394.4 L60.5,389.5 L49.6,385.3M82.3,397.7 L82.7,401.2 L83.5,404.6 L82.8,408.1M82.8,408.1 L70.8,413.3 L58.3,416.4 L45.6,418.9M73.6,440.4 L76.3,431.3 L79.8,422.6 L85.2,414.8M73.6,440.4 L64.8,440.3 L56.4,437.0 L47.6,436.7M47.6,436.7 L45.7,431.8 L45.8,426.5 L44.5,421.4M82.8,408.1 L85.2,409.7 L85.8,412.0 L85.2,414.8M-15.7,412.0 L-13.9,413.7 L-13.1,416.4 L-10.6,417.3M-10.6,417.3 L-3.6,419.5 L3.6,420.3 L10.9,419.6M80.6,570.2 L79.1,563.3 L79.7,556.1 L77.6,549.3M77.6,549.3 L67.6,545.3 L56.9,543.8 L46.6,540.9M44.0,546.7 L46.5,545.5 L45.1,542.5 L46.6,540.9M52.1,592.0 L53.8,587.0 L56.4,582.7 L60.6,579.6M20.5,564.3 L29.4,559.9 L36.3,552.8 L44.0,546.7M41.9,603.9 L31.8,603.3 L21.9,600.9 L11.8,599.9M10.5,598.8 L10.7,599.4 L10.6,600.4 L11.8,599.9M51.7,595.9 L50.6,594.4 L52.3,593.3 L52.1,592.0M51.7,595.9 L49.3,599.6 L44.9,600.9 L41.9,603.9M20.3,564.3 L20.2,562.9 L20.4,564.5 L20.5,564.3M44.3,528.0 L45.4,532.2 L46.7,536.4 L46.6,540.9M83.5,522.1 L84.7,524.1 L85.5,526.5 L87.5,528.0M77.6,549.3 L79.0,545.1 L83.8,543.7 L85.4,539.6M85.4,539.6 L84.6,535.5 L85.8,531.7 L87.5,528.0M81.6,491.4 L91.7,495.0 L102.8,493.6 L112.8,497.3M87.5,528.0 L95.6,525.5 L104.2,525.3 L112.5,524.1M112.5,524.1 L110.9,515.1 L111.4,506.2 L112.8,497.3M83.8,462.6 L85.7,462.2 L87.8,462.5 L89.5,461.1M83.8,462.6 L84.5,472.3 L82.9,481.9 L81.6,491.4M89.5,461.1 L101.3,466.2 L114.4,468.0 L126.0,473.6M126.0,473.6 L123.8,480.9 L119.2,487.2 L117.4,494.7M598.8,485.8 L586.1,477.5 L575.0,467.3 L563.4,457.8M566.6,446.0 L565.5,449.9 L565.7,454.2 L563.4,457.8M598.8,485.8 L589.4,491.4 L579.2,494.8 L568.8,497.6M551.9,467.8 L552.6,473.5 L551.9,479.1 L552.4,484.8M552.4,484.8 L559.0,487.6 L563.8,492.8 L568.8,497.6M568.8,497.6 L568.3,503.3 L566.2,508.6 L564.3,513.9M390.6,504.2 L390.3,508.3 L387.8,512.1 L388.6,516.4M390.6,504.2 L387.9,500.6 L387.2,495.9 L384.3,492.5M353.6,489.8 L363.9,489.3 L374.1,491.3 L384.3,492.5M353.6,489.8 L350.2,491.6 L350.8,496.2 L347.7,498.2M347.7,498.2 L351.8,504.1 L357.0,509.4 L359.8,516.2M388.6,516.4 L379.0,515.6 L369.4,517.8 L359.8,516.2M460.9,395.3 L460.6,397.4 L459.5,398.2 L457.4,397.6M460.9,395.3 L465.2,384.4 L464.2,372.3 L468.6,361.4M427.9,367.4 L439.8,363.5 L450.8,357.1 L463.1,354.4M427.9,367.4 L428.5,374.1 L428.6,380.9 L429.3,387.6M429.3,387.6 L429.3,388.7 L428.9,390.2 L431.0,389.6M181.6,363.7 L180.1,355.6 L180.4,347.2 L178.1,339.3M181.6,363.7 L171.8,362.3 L162.4,365.8 L152.8,365.4M178.1,339.3 L168.2,338.4 L158.5,339.2 L148.9,341.8M152.8,365.4 L153.2,357.3 L149.8,349.8 L148.9,341.8M146.3,339.7 L146.5,341.2 L148.1,341.0 L148.9,341.8M183.8,332.5 L182.3,335.1 L180.2,337.2 L178.1,339.3M313.0,384.4 L312.6,379.9 L312.5,375.4 L311.2,371.0M354.1,379.1 L345.3,373.3 L337.3,366.6 L329.9,359.1M354.1,379.1 L348.1,384.2 L340.5,387.2 L334.6,392.5M311.2,371.0 L317.1,366.4 L323.9,363.5 L329.9,359.1M393.8,363.8 L392.2,364.6 L392.7,362.1 L391.6,362.3M393.8,363.8 L395.9,374.6 L395.8,385.6 L397.6,396.4M397.6,396.4 L395.8,398.0 L395.3,400.6 L393.1,401.7M393.1,401.7 L384.8,398.3 L376.3,395.4 L367.8,392.7M357.8,378.4 L358.6,374.0 L363.8,372.3 L364.5,367.7M392.8,340.8 L393.4,348.0 L393.2,355.2 L391.6,362.3M424.4,364.0 L423.0,356.8 L423.7,349.4 L422.7,342.1M424.4,364.0 L414.2,362.1 L404.0,365.7 L393.8,363.8M427.9,367.4 L427.0,366.0 L426.1,364.6 L424.4,364.0M429.3,387.6 L418.9,391.2 L408.7,395.4 L397.6,396.4M425.8,415.5 L415.5,417.0 L405.2,416.3 L395.0,414.9M395.0,414.9 L392.6,410.7 L391.8,406.3 L393.1,401.7M395.0,414.9 L394.6,416.9 L394.9,419.1 L393.2,420.7M393.2,420.7 L381.6,425.4 L369.2,427.4 L356.9,429.3M356.9,429.3 L362.0,417.6 L364.7,405.1 L367.8,392.7M333.9,411.3 L342.3,416.4 L348.9,423.5 L355.2,430.8M329.9,359.1 L328.5,351.7 L329.0,344.4 L330.6,337.1M353.6,489.8 L351.6,482.5 L350.3,475.0 L349.7,467.5M322.8,502.6 L322.8,503.7 L323.7,504.1 L324.3,504.7M347.7,498.2 L340.4,501.9 L332.4,503.4 L324.3,504.7M326.6,473.3 L334.7,473.1 L342.3,470.6 L349.7,467.5M384.3,492.5 L385.0,485.9 L383.7,479.2 L386.3,472.9M386.3,472.9 L375.3,468.7 L365.3,462.7 L355.8,455.7M349.7,467.5 L352.8,464.1 L354.8,460.2 L355.8,455.7M386.3,472.9 L389.2,468.9 L392.6,465.5 L397.5,464.0M402.3,444.3 L398.8,450.4 L400.1,457.7 L397.5,464.0M402.3,444.3 L402.0,444.5 L401.7,444.7 L402.2,444.1M402.2,444.1 L386.5,446.9 L370.6,445.9 L354.8,446.4M355.8,455.7 L356.3,452.5 L355.2,449.5 L354.8,446.4M402.2,444.1 L400.7,435.8 L395.5,428.7 L393.2,420.7M355.2,430.8 L352.9,434.7 L354.0,439.2 L353.4,443.4M118.8,529.7 L116.9,527.6 L113.5,527.3 L112.5,524.1M118.8,529.7 L129.6,527.1 L140.4,524.2 L151.2,521.8M117.4,494.7 L127.9,502.0 L140.8,504.9 L151.5,512.0M256.1,507.2 L267.7,499.0 L277.8,489.2 L288.2,479.7M256.1,507.2 L260.2,512.3 L265.7,516.2 L269.2,521.9M284.9,522.4 L279.6,524.1 L274.5,521.3 L269.2,521.9M284.9,522.4 L287.8,511.2 L292.9,500.7 L294.2,489.1M294.2,489.1 L290.7,486.9 L289.9,483.0 L288.2,479.7M322.8,502.6 L312.5,499.7 L303.3,494.5 L294.2,489.1M324.2,505.4 L314.8,514.0 L304.8,521.8 L295.1,530.0M295.1,530.0 L292.1,527.0 L287.5,526.0 L284.9,522.4M152.1,366.9 L142.1,365.9 L132.5,368.6 L122.7,369.5M152.1,366.9 L151.2,373.4 L153.9,379.7 L153.6,386.2M153.6,386.2 L144.7,388.5 L135.4,388.2 L126.5,390.5M122.7,369.5 L123.6,376.6 L123.6,383.8 L126.5,390.5M-19.9,520.4 L-16.4,514.0 L-13.6,507.2 L-9.8,500.9M-16.0,525.4 L-6.0,522.8 L4.1,522.6 L14.3,522.6M-9.8,500.9 L-1.9,499.4 L6.0,501.9 L13.9,501.3M13.9,501.3 L13.6,507.4 L15.5,512.9 L18.6,518.1M18.6,518.1 L18.1,520.5 L14.4,519.8 L14.3,522.6M-15.6,547.1 L-14.2,539.9 L-14.3,532.6 L-16.0,525.4M4.9,554.2 L8.1,543.7 L10.0,532.8 L14.3,522.6M44.0,527.6 L35.3,525.2 L26.6,522.7 L18.6,518.1M19.4,487.6 L16.0,491.5 L17.1,497.3 L13.9,501.3M153.8,386.3 L154.3,394.8 L153.2,403.0 L151.0,411.1M153.8,386.3 L153.5,386.5 L153.5,386.4 L153.6,386.2M124.0,394.7 L125.4,393.6 L124.9,391.5 L126.5,390.5M124.0,394.7 L125.1,401.0 L124.4,407.7 L127.0,413.9M151.0,411.1 L142.9,411.2 L135.1,413.7 L127.0,413.9M82.3,397.7 L83.7,395.3 L85.8,393.4 L87.5,391.3M85.2,414.8 L96.2,420.1 L108.3,422.7 L119.0,428.9M127.0,413.9 L126.0,419.8 L122.3,424.3 L119.0,428.9M83.8,462.6 L81.6,463.2 L81.2,462.0 L81.4,460.3M81.4,460.3 L77.2,454.3 L76.1,447.1 L73.6,440.4M89.5,461.1 L99.2,451.3 L108.9,441.3 L120.2,433.2M119.0,428.9 L118.2,430.7 L119.6,431.9 L120.2,433.2M-10.6,417.3 L-12.2,425.4 L-12.5,433.6 L-14.0,441.7M-26.2,451.3 L-22.4,447.8 L-18.0,444.9 L-14.0,441.7M-16.0,474.9 L-19.0,472.2 L-22.6,470.5 L-26.4,469.6M19.7,483.4 L16.9,477.4 L11.9,473.4 L7.0,469.2M19.7,483.4 L26.7,479.1 L34.6,476.3 L41.3,471.3M7.5,457.6 L12.4,453.5 L16.0,448.4 L20.1,443.7M41.3,471.3 L41.8,469.6 L42.5,468.0 L43.3,466.4M43.3,466.4 L43.5,459.3 L39.7,453.0 L38.9,446.1M38.9,446.1 L32.6,445.6 L26.6,442.8 L20.1,443.7M19.4,487.6 L17.6,486.1 L21.6,485.0 L19.7,483.4M-16.0,474.9 L-8.8,471.3 L-0.7,471.1 L7.0,469.2M-14.0,441.7 L-6.0,446.0 L0.7,451.9 L7.5,457.6M10.9,419.6 L13.6,427.7 L15.8,436.1 L20.1,443.7M81.4,460.3 L68.8,463.0 L56.0,464.1 L43.3,466.4M259.9,450.6 L259.0,447.6 L254.8,448.5 L253.8,445.7M259.9,450.6 L270.5,445.0 L280.1,437.6 L290.8,432.2M253.8,445.7 L252.0,439.7 L253.4,433.2 L250.9,427.4M290.8,432.2 L289.4,426.6 L287.1,421.3 L287.3,415.5M224.4,459.6 L232.2,466.8 L238.6,475.2 L245.9,482.9M224.4,459.6 L225.8,460.0 L223.0,458.5 L224.7,459.0M266.5,464.9 L258.4,469.4 L252.9,477.0 L245.9,482.9M266.5,464.9 L262.8,460.8 L263.4,454.8 L259.9,450.6M224.7,459.0 L235.0,456.0 L244.5,451.2 L253.8,445.7M292.2,407.2 L292.1,410.9 L288.2,412.3 L287.3,415.5M284.1,391.8 L274.6,393.0 L265.0,393.0 L255.4,392.5M284.1,391.8 L286.6,395.2 L288.5,399.1 L292.6,401.0M188.6,440.7 L188.6,434.3 L191.1,428.0 L190.4,421.5M188.6,440.7 L198.6,441.1 L208.7,442.4 L218.8,441.7M190.4,421.5 L200.7,417.4 L211.0,413.3 L222.0,411.5M218.8,441.7 L222.1,433.1 L222.8,423.9 L224.2,414.9M179.6,412.4 L183.5,415.1 L186.6,418.7 L190.4,421.5M179.6,412.4 L172.6,413.0 L166.9,417.5 L160.2,419.1M160.2,419.1 L158.1,426.4 L155.3,433.5 L155.1,441.2M188.5,440.9 L177.3,441.1 L166.2,439.8 L155.1,441.2M188.5,440.9 L190.1,441.7 L187.8,440.4 L188.6,440.7M212.7,467.9 L205.2,468.2 L198.0,465.4 L190.6,466.2M224.7,459.0 L222.8,453.2 L219.2,448.0 L218.8,441.7M188.5,440.9 L190.9,449.2 L188.0,457.9 L190.6,466.2M250.9,427.4 L241.6,423.9 L232.4,420.4 L224.2,414.9M255.4,392.5 L254.0,391.5 L251.9,391.6 L251.6,389.4M251.6,389.4 L242.3,394.5 L232.5,398.1 L222.7,401.9M222.7,401.9 L220.8,405.0 L221.0,408.2 L222.0,411.5M213.2,368.7 L214.1,375.6 L213.1,382.9 L216.0,389.6M185.8,368.3 L180.9,374.9 L179.4,383.1 L175.7,390.3M175.7,390.3 L176.8,392.7 L178.9,394.5 L179.5,397.1M181.6,363.7 L184.2,364.1 L185.2,365.9 L185.8,368.3M215.3,365.4 L215.3,366.9 L212.6,366.7 L213.2,368.7M215.3,365.4 L228.7,365.7 L241.6,361.7 L254.9,361.2M222.7,401.9 L222.1,396.9 L219.1,393.2 L216.0,389.6M153.8,386.3 L160.8,389.3 L168.1,390.8 L175.7,390.3M152.1,366.9 L153.6,367.0 L153.8,366.5 L152.8,365.4M160.2,419.1 L156.1,417.7 L154.6,413.1 L151.0,411.1M558.9,418.5 L560.3,412.8 L558.1,407.4 L557.3,401.9M566.6,446.0 L563.3,439.8 L556.8,436.6 L552.8,431.0M558.9,418.5 L555.4,422.0 L555.3,427.1 L552.8,431.0M530.3,458.5 L538.1,460.2 L544.0,466.2 L551.9,467.8M530.3,458.5 L527.0,454.0 L529.0,448.0 L526.1,443.5M526.1,443.5 L526.9,443.6 L527.4,443.4 L527.1,442.4M527.1,442.4 L524.8,428.8 L526.1,414.9 L525.6,401.2M549.2,431.2 L541.8,420.8 L533.8,410.9 L525.6,401.2M535.6,340.7 L545.3,341.1 L554.4,336.8 L564.1,337.1M564.1,337.1 L565.3,335.7 L563.9,339.0 L565.1,337.7M558.2,371.7 L549.1,370.7 L540.0,369.3 L530.8,369.3M523.4,325.7 L515.6,329.0 L509.0,334.6 L501.3,338.2M530.6,369.5 L520.8,365.1 L509.7,366.2 L499.9,361.7M530.6,369.5 L529.7,368.5 L530.6,369.3 L530.8,369.3M501.3,338.2 L500.4,346.0 L498.4,353.8 L499.9,361.7M560.3,373.2 L559.4,373.0 L559.4,371.5 L558.2,371.7M530.6,369.5 L529.6,378.1 L528.4,386.7 L526.5,395.1M557.3,401.9 L546.8,400.5 L536.5,398.4 L526.5,395.1M564.3,513.9 L563.5,515.8 L560.8,515.4 L560.4,517.5M560.4,517.5 L551.1,516.6 L542.2,513.9 L533.0,512.8M530.7,494.7 L532.0,500.6 L532.0,506.8 L533.0,512.8M530.3,458.5 L525.1,464.6 L519.4,470.4 L516.2,478.0M530.7,494.7 L527.3,491.8 L523.7,489.1 L519.3,487.8M516.2,478.0 L509.5,473.6 L501.5,472.5 L494.5,468.8M505.4,438.8 L512.5,439.4 L519.2,441.9 L526.1,443.5M505.4,438.8 L505.3,440.5 L504.8,441.8 L502.7,441.4M502.7,441.4 L498.8,450.2 L496.6,459.5 L494.5,468.8M432.6,430.5 L431.1,433.3 L432.3,437.1 L429.7,439.6M402.3,444.3 L409.6,444.0 L417.0,443.5 L424.3,442.4M429.7,439.6 L428.4,441.5 L425.6,440.7 L424.3,442.4M489.5,416.1 L493.0,419.0 L497.6,419.7 L501.3,422.3M501.3,422.3 L509.3,414.5 L517.8,407.2 L524.3,397.9M483.4,398.5 L485.4,394.0 L490.7,392.8 L493.2,388.7M493.2,388.7 L503.3,392.4 L514.1,394.1 L524.3,397.5M524.3,397.5 L524.4,397.7 L524.2,397.8 L524.3,397.9M467.7,429.0 L475.3,425.2 L482.6,421.0 L489.5,416.1M467.7,429.0 L467.7,433.3 L469.6,437.3 L469.7,441.6M505.4,438.8 L503.9,433.4 L502.9,427.8 L501.3,422.3M460.9,395.3 L468.6,395.3 L476.0,397.0 L483.4,398.5M525.6,401.2 L526.6,399.5 L524.1,399.2 L524.3,397.9M490.9,367.3 L493.2,374.3 L490.9,381.7 L493.2,388.7M526.5,395.1 L525.8,395.9 L526.2,397.7 L524.3,397.5M487.6,332.5 L479.9,336.9 L471.2,338.8 L463.6,343.2M463.3,342.7 L463.9,342.5 L462.5,343.6 L463.6,343.2M463.1,354.4 L463.0,350.6 L462.6,346.9 L463.6,343.2M321.5,330.6 L323.9,333.6 L328.4,333.7 L330.6,337.1M426.3,331.8 L438.3,336.6 L450.4,340.9 L463.3,342.7M424.1,541.0 L413.0,543.2 L402.1,546.4 L392.1,551.8M424.1,541.0 L424.3,552.0 L426.8,562.9 L426.5,574.0M423.3,575.7 L414.5,573.6 L405.8,570.7 L396.6,570.6M423.3,575.7 L424.2,574.8 L424.5,572.9 L426.5,574.0M396.6,570.6 L394.9,564.4 L394.7,557.8 L392.1,551.8M428.3,526.6 L415.3,522.8 L402.2,519.6 L388.9,517.1M428.3,526.6 L429.9,529.2 L429.3,532.1 L429.3,534.9M429.3,534.9 L428.5,537.8 L427.1,540.0 L424.1,541.0M385.9,544.5 L385.8,535.3 L389.1,526.4 L388.9,517.1M385.9,544.5 L386.6,548.1 L389.0,550.3 L392.1,551.8M457.5,571.2 L456.6,570.3 L458.8,571.7 L457.8,570.8M457.5,571.2 L447.1,571.1 L436.8,572.3 L426.5,574.0M462.3,554.7 L461.6,560.3 L458.6,565.2 L457.8,570.8M462.3,554.7 L450.9,548.7 L439.9,542.1 L429.3,534.9M387.0,593.9 L386.3,591.1 L386.3,588.3 L386.5,585.5M386.5,585.5 L390.4,580.9 L393.8,576.0 L396.6,570.6M459.2,596.8 L457.5,588.3 L458.1,579.7 L457.5,571.2M255.6,360.6 L262.6,365.1 L271.3,364.6 L278.3,368.9M256.1,355.4 L258.7,353.9 L259.0,350.9 L260.4,348.6M260.4,348.6 L271.2,344.9 L282.1,341.2 L293.2,338.4M278.3,368.9 L284.3,364.0 L291.1,360.6 L298.1,357.4M298.1,357.4 L300.5,352.6 L298.4,347.4 L299.6,342.5M299.6,342.5 L298.4,339.7 L294.5,341.0 L293.2,338.4M227.6,323.6 L236.0,335.1 L246.1,345.2 L256.1,355.4M254.9,361.2 L254.3,360.1 L254.3,359.7 L255.6,360.6M311.2,371.0 L306.6,366.7 L303.7,360.8 L298.1,357.4M321.5,330.6 L313.2,332.9 L306.4,337.8 L299.6,342.5M314.9,464.3 L306.4,469.4 L297.6,473.8 L287.8,476.1M286.2,474.1 L287.3,474.4 L288.3,474.6 L287.8,476.1M294.6,436.7 L301.9,438.4 L309.6,438.5 L316.4,442.2M316.4,442.2 L317.9,442.4 L317.1,444.7 L318.7,444.8M326.6,473.3 L322.8,470.2 L318.7,467.4 L314.9,464.3M353.4,443.4 L341.8,441.9 L330.2,443.1 L318.7,444.8M266.5,464.9 L273.5,467.0 L280.3,469.6 L286.2,474.1M250.5,505.4 L252.7,505.0 L253.7,508.3 L256.1,507.2M250.5,505.4 L249.5,501.4 L246.8,498.4 L244.0,495.6M244.0,495.6 L244.2,491.3 L245.0,487.1 L245.9,482.9M290.8,432.2 L292.3,433.5 L292.5,435.9 L294.6,436.7M357.1,608.4 L353.9,603.1 L351.5,597.2 L347.7,592.2M347.7,592.2 L339.7,595.2 L333.3,601.3 L325.0,603.7M83.8,367.1 L81.2,356.8 L79.3,346.5 L78.4,336.0M83.8,367.1 L84.6,371.1 L87.8,373.0 L90.7,375.2M82.5,328.8 L92.8,336.6 L103.4,343.8 L115.2,349.1M82.5,328.8 L81.7,331.5 L80.3,333.9 L78.4,336.0M115.2,349.1 L113.3,352.3 L114.9,356.0 L113.8,359.3M52.5,352.0 L60.1,345.0 L69.0,340.1 L78.4,336.0M53.0,363.0 L63.2,364.9 L73.3,367.7 L83.8,367.1M122.7,369.5 L120.6,365.3 L117.3,362.3 L113.8,359.3M80.6,570.2 L84.7,572.8 L88.9,575.1 L93.5,576.5M85.4,539.6 L94.6,542.9 L101.8,550.0 L111.3,552.7M93.5,576.5 L98.3,575.6 L102.5,573.2 L106.9,571.3M118.8,529.7 L120.2,535.4 L119.3,540.9 L117.7,546.3M111.3,552.7 L113.2,550.3 L115.1,547.9 L117.7,546.3M51.7,595.9 L59.9,603.2 L70.6,606.9 L78.5,614.7M78.5,614.7 L83.6,608.6 L88.3,602.2 L93.5,596.2M129.2,441.7 L137.5,442.0 L145.9,440.9 L154.2,442.1M129.2,441.7 L127.2,452.0 L128.5,462.5 L127.0,472.9M160.2,463.0 L157.1,468.2 L152.3,472.0 L149.1,477.1M127.0,472.9 L134.1,475.4 L141.4,477.1 L149.1,477.1M120.2,433.2 L122.3,437.0 L126.3,438.7 L129.2,441.7M155.1,441.2 L154.8,441.5 L155.0,442.3 L154.2,442.1M126.0,473.6 L127.2,474.4 L125.8,471.9 L127.0,472.9M187.8,468.7 L178.6,466.9 L169.8,463.1 L160.2,463.0M182.7,493.9 L174.2,494.2 L166.5,497.2 L158.8,500.1M182.7,493.9 L183.5,485.3 L185.6,477.0 L187.8,468.7M151.5,512.0 L153.2,507.6 L154.9,503.2 L158.8,500.1M519.3,487.8 L513.3,494.0 L505.8,498.4 L499.9,504.7M499.9,504.7 L499.4,509.2 L500.7,513.3 L503.2,517.0M529.7,517.3 L520.9,517.0 L512.0,518.2 L503.2,517.0M494.5,468.8 L494.1,467.9 L494.5,468.8 L494.5,468.9M494.5,468.9 L483.3,466.4 L472.1,463.7 L461.2,460.2M494.5,468.9 L491.1,478.3 L488.2,487.9 L483.8,496.9M429.7,439.6 L439.9,446.3 L449.6,453.8 L459.1,461.4M461.2,460.2 L460.5,460.6 L460.4,462.0 L459.1,461.4M419.2,478.0 L421.3,476.9 L423.2,475.4 L425.3,474.4M419.2,478.0 L417.2,483.3 L415.8,488.7 L416.1,494.4M425.3,474.4 L434.7,475.4 L444.1,476.1 L453.5,475.6M433.0,506.1 L440.5,501.2 L448.4,497.2 L456.8,494.1M397.5,464.0 L405.8,467.1 L411.6,473.9 L419.2,478.0M424.3,442.4 L423.5,453.1 L426.4,463.7 L425.3,474.4M390.6,504.2 L399.6,502.2 L407.0,495.9 L416.1,494.4M459.1,461.4 L458.1,466.5 L455.5,470.9 L453.5,475.6M428.3,526.6 L428.1,525.7 L429.5,525.7 L429.3,524.8M429.3,524.8 L431.2,518.7 L430.7,512.2 L433.0,506.1M483.8,496.9 L477.6,497.4 L471.6,498.9 L465.8,501.2M386.5,585.5 L376.1,582.6 L365.3,581.1 L355.1,577.6M385.9,544.5 L377.1,546.0 L368.4,547.6 L359.7,549.2M359.7,549.2 L359.1,558.8 L357.1,568.2 L355.1,577.6M347.7,592.2 L348.5,588.2 L347.9,583.8 L350.7,580.4M355.1,577.6 L354.3,579.5 L353.2,581.1 L350.7,580.4M324.2,505.4 L327.9,512.3 L329.9,519.9 L333.0,527.1M359.8,516.2 L357.0,523.5 L349.9,527.8 L346.9,535.0M333.0,527.1 L338.2,528.6 L342.4,532.0 L346.9,535.0M359.7,549.2 L355.8,548.2 L353.7,544.5 L350.2,542.9M346.9,535.0 L347.0,538.0 L348.5,540.5 L350.2,542.9M350.2,542.9 L340.8,549.7 L330.9,555.9 L321.9,563.3M321.9,567.6 L321.7,566.2 L323.3,564.8 L321.9,563.3M321.9,563.3 L317.8,558.1 L316.9,551.0 L311.8,546.3M295.1,530.0 L297.9,532.8 L297.6,536.6 L298.4,540.1M298.4,540.1 L303.4,540.9 L306.8,545.5 L311.8,546.3M215.1,528.4 L208.6,525.0 L201.2,524.4 L194.9,520.5M215.1,528.4 L215.4,517.0 L219.1,506.1 L219.7,494.8M194.9,520.5 L192.2,514.0 L189.9,507.4 L189.7,500.2M189.7,500.2 L199.0,497.9 L208.3,495.5 L217.6,493.2M219.7,494.8 L218.9,494.4 L218.3,493.8 L217.6,493.2M250.5,505.4 L241.7,515.8 L233.0,526.1 L223.8,536.1M223.8,536.1 L222.9,536.8 L222.2,536.7 L221.8,535.5M221.8,535.5 L218.4,534.2 L216.4,531.6 L215.1,528.4M212.7,467.9 L215.1,476.2 L217.0,484.6 L217.6,493.2M182.7,493.9 L185.0,496.0 L186.9,498.6 L189.7,500.2M106.9,571.3 L112.7,575.7 L119.8,577.3 L126.1,580.6M117.7,546.3 L126.2,549.5 L134.7,552.3 L142.6,556.7M126.1,580.6 L131.6,575.9 L138.1,573.2 L145.0,571.1M142.6,556.7 L143.1,561.6 L145.1,566.2 L145.0,571.1M223.8,536.1 L224.8,536.7 L225.0,538.0 L226.0,538.6M190.9,561.0 L201.0,565.7 L209.5,572.7 L218.4,579.1M226.0,538.6 L221.7,551.8 L219.3,565.3 L218.4,579.1M263.9,581.1 L257.9,575.9 L252.2,570.6 L248.4,563.5M263.9,581.1 L269.6,575.8 L278.0,575.1 L283.6,569.7M283.6,557.3 L274.9,554.1 L266.3,550.6 L259.1,544.6M248.4,563.5 L246.4,559.2 L249.4,554.6 L247.5,550.4M259.1,544.6 L255.5,547.0 L250.8,547.3 L247.5,550.4M269.2,521.9 L266.5,529.7 L261.2,536.5 L259.1,544.6M298.4,540.1 L293.1,545.5 L289.0,552.0 L283.6,557.3M226.0,538.6 L232.3,544.1 L240.6,545.9 L247.5,550.4M221.7,585.2 L231.0,578.4 L238.9,569.9 L248.4,563.5M126.1,580.6 L126.4,588.3 L123.6,595.9 L124.9,603.6M93.5,596.2 L103.3,599.2 L112.9,602.8 L121.5,608.5M124.9,603.6 L122.1,604.1 L123.5,607.5 L121.5,608.5M501.5,595.2 L503.2,593.1 L499.2,591.5 L501.0,589.4M457.8,570.8 L469.9,576.0 L483.2,577.2 L495.1,582.8M501.0,589.4 L500.0,586.3 L496.0,585.9 L495.1,582.8M500.7,523.1 L501.2,530.8 L501.3,538.5 L502.8,546.1M500.7,523.1 L489.6,523.1 L478.4,523.3 L467.3,521.8M466.7,550.2 L476.5,548.5 L486.4,551.1 L496.2,549.1M466.7,550.2 L466.3,541.0 L467.7,531.7 L467.1,522.5M496.2,549.1 L498.0,547.3 L500.3,546.5 L502.8,546.1M467.1,522.5 L466.5,522.1 L467.5,522.1 L467.3,521.8M503.2,517.0 L503.1,519.4 L500.4,520.6 L500.7,523.1M462.3,554.7 L464.6,554.1 L466.2,552.7 L466.7,550.2M495.1,582.8 L496.3,571.6 L497.7,560.4 L496.2,549.1M429.3,524.8 L441.9,524.1 L454.4,522.1 L467.1,522.5M296.2,578.2 L292.4,587.5 L289.3,596.9 L287.4,606.7M288.5,608.3 L287.3,608.3 L287.1,607.6 L287.4,606.7M317.5,593.6 L317.6,587.9 L315.7,582.7 L313.4,577.7M321.9,567.6 L319.2,571.0 L315.2,573.4 L313.4,577.7M283.6,569.7 L287.1,573.6 L291.4,576.3 L296.2,578.2M263.9,581.1 L261.7,583.7 L263.1,587.1 L262.1,590.0M265.6,597.5 L264.9,594.8 L262.6,592.8 L262.1,590.0M265.6,597.5 L272.7,600.9 L280.1,603.7 L287.4,606.7M194.5,520.9 L188.1,530.7 L186.9,542.8 L180.5,552.7M194.5,520.9 L181.4,523.2 L168.5,527.3 L155.1,528.3M180.5,552.7 L172.0,545.7 L164.5,537.8 L155.6,531.3M155.1,528.3 L155.2,529.3 L157.3,530.0 L155.6,531.3M190.9,561.0 L188.7,560.4 L186.5,559.7 L184.5,561.6M194.9,520.5 L194.1,519.7 L193.8,519.6 L194.5,520.9M184.5,561.6 L182.8,558.7 L181.2,555.9 L180.5,552.7M179.7,568.7 L172.3,572.2 L164.9,575.9 L156.7,577.3M179.7,568.7 L181.0,566.2 L183.1,564.1 L184.5,561.6M142.6,556.7 L146.5,548.0 L152.2,540.2 L155.6,531.3M156.7,577.3 L153.0,574.9 L148.8,573.4 L145.0,571.1M179.7,568.7 L182.1,578.8 L188.3,587.2 L191.3,597.0M156.7,577.3 L156.5,584.8 L159.3,592.2 L158.1,599.8M158.1,599.8 L169.2,598.9 L180.1,596.9 L191.3,597.0M124.9,603.6 L135.6,604.7 L146.3,603.8 L157.0,603.1M158.1,599.8 L159.3,601.4 L157.2,602.0 L157.0,603.1M530.3,542.0 L524.8,543.4 L520.8,547.1 L516.5,550.3M530.3,542.0 L538.8,543.1 L547.0,545.4 L555.5,546.7M516.5,550.3 L516.5,556.7 L518.2,562.6 L521.0,568.3M521.0,568.3 L524.4,572.5 L530.6,572.5 L533.9,576.7M533.9,576.7 L541.2,575.3 L548.8,575.2 L556.0,573.0M556.0,573.0 L557.1,566.0 L559.8,559.2 L559.8,552.0M529.7,517.3 L529.9,525.5 L528.7,533.8 L530.3,542.0M502.8,546.1 L507.0,548.8 L512.2,548.0 L516.5,550.3M560.4,517.5 L558.5,527.2 L556.5,536.9 L555.5,546.7M501.0,589.4 L508.8,583.4 L513.6,574.7 L521.0,568.3M527.6,605.5 L530.2,596.0 L531.3,586.2 L533.9,576.7M563.8,585.7 L562.5,580.7 L558.5,577.3 L556.0,573.0M193.5,599.2 L202.6,596.0 L212.1,594.3 L221.7,593.9M221.7,593.9 L223.1,594.3 L223.1,596.0 L224.2,596.8M191.3,597.0 L193.0,596.7 L192.1,599.2 L193.5,599.2M221.7,585.2 L223.1,588.1 L222.7,591.0 L221.7,593.9M262.1,590.0 L249.1,590.7 L236.6,593.1 L224.2,596.8" fill="none" stroke="#7aa8ba" stroke-width="1.3" opacity="0.45"/></g>
<path d="M233,512 C228,530 226,545 232,558 C240,572 262,580 276,588 C282,592 285,597 286,600" fill="none" stroke="#8cb8c6" stroke-width="6" stroke-linecap="round" opacity="0.55" filter="url(#bl)"/>
<defs><linearGradient id="sq" x1="0" y1="0" x2="1" y2="1"><stop offset="0" stop-color="#97a3f0"/><stop offset="1" stop-color="#7d88da"/></linearGradient></defs>
<g filter="url(#bl2)">
<rect x="70" y="501" width="55" height="36" fill="#142f45" opacity="0.9" filter="url(#sh)"/>
<rect x="76" y="497" width="53" height="34" fill="url(#sq)" filter="url(#sqf)"/>
<rect x="109" y="479" width="48" height="44" fill="#142f45" opacity="0.9" filter="url(#sh)"/>
<rect x="115" y="475" width="46" height="42" fill="url(#sq)" filter="url(#sqf)"/>
<rect x="499" y="581" width="52" height="20" fill="url(#sq)" filter="url(#sqf)"/>
<rect x="472" y="557" width="55" height="31" fill="#142f45" opacity="0.9" filter="url(#sh)"/>
<rect x="478" y="553" width="53" height="29" fill="url(#sq)" filter="url(#sqf)"/>
</g>
</g>
</svg>
<svg class="a" style="left:350px;top:222px" width="30" height="30" viewBox="350 222 30 30"><circle cx="362.3" cy="234.7" r="4.3" fill="#fff" stroke="#000" stroke-width="1.1"/><path d="M365.6 238l4.6 4.6" stroke="#000" stroke-width="2"/><path d="M360 234.7h4.6M362.3 232.4v4.6" stroke="#000" stroke-width="1.2"/></svg>
<div class="a" style="left:34px;top:672px;width:941px;height:15px;background:#474747;"></div>
<div class="a" style="left:34px;top:672px;width:38px;height:14px;background:#3f3f3f;"></div>
<div class="t" style="left:36.50px;top:674.00px;font-size:9.60px;font-weight:normal;font-style:normal;color:#e8e8e8;transform:scaleX(0.897);transform-origin:0 0;">256.69%</div>
<div class="t" style="left:99.50px;top:675.00px;font-size:8.80px;font-weight:normal;font-style:normal;color:#dcdcdc;transform:scaleX(0.869);transform-origin:0 0;">2268 px x 684 px (600 ppi)</div>
<svg class="a" style="left:214px;top:674px" width="30" height="12" viewBox="0 0 30 12"><path d="M5 2.5l3 3.5-3 3.5" stroke="#c8c8c8" stroke-width="1.1" fill="none"/><path d="M24 2.5l-3 3.5 3 3.5" stroke="#777" stroke-width="1.1" fill="none"/></svg>
<div class="a" style="left:244px;top:672px;width:717px;height:14px;background:#434343;"></div>
<div class="a" style="left:385px;top:673px;width:117px;height:10px;background:#5e5e5e;"></div>
<div class="a" style="left:961px;top:73px;width:14px;height:614px;background:#454545;"></div>
<div class="a" style="left:972px;top:73px;width:3px;height:614px;background:#3c3c3c;"></div>
<div class="a" style="left:962px;top:248px;width:10px;height:155px;background:#5e5e5e;"></div>
<svg class="a" style="left:961px;top:73px" width="14" height="600" viewBox="0 0 14 600"><path d="M4.5 12l2.5-2.5 2.5 2.5M4.5 589l2.5 2.5 2.5-2.5" stroke="#777" stroke-width="1" fill="none"/></svg>
<div class="a" style="left:975px;top:49px;width:68px;height:638px;background:#3e3e3e;"></div>
<div class="a" style="left:975px;top:49px;width:68px;height:11px;background:#424242;"></div>
<div class="a" style="left:975.5px;top:60px;width:32px;height:627px;background:#535353;"></div>
<div class="a" style="left:976px;top:149.5px;width:31px;height:1.2px;background:#404040;"></div>
<div class="a" style="left:976px;top:207.5px;width:31px;height:1.2px;background:#404040;"></div>
<div class="a" style="left:976px;top:241.5px;width:31px;height:1.2px;background:#404040;"></div>
<div class="a" style="left:976px;top:95.5px;width:31px;height:1px;background:#4a4a4a;"></div>
<div class="a" style="left:1009.5px;top:60px;width:31.5px;height:627px;background:#535353;"></div>
<div class="a" style="left:1010px;top:126.5px;width:30px;height:1.2px;background:#404040;"></div>
<svg class="a" style="left:975px;top:49px" width="305" height="230" viewBox="975 49 305 230"><g stroke="#e4e4e4" fill="none" stroke-width="1.3"><path d="M1000 52.3l-1.6 1.6 1.6 1.6M1002.5 52.3l-1.6 1.6 1.6 1.6M1033 52.3l-1.6 1.6 1.6 1.6M1035.5 52.3l-1.6 1.6 1.6 1.6" stroke-width="1"/><rect x="984.5" y="71.5" width="3.8" height="3.8" stroke-width="1.2"/><rect x="984.5" y="76.3" width="3.8" height="3.8" stroke-width="1.2"/><rect x="984" y="80.8" width="4.8" height="4.5" fill="#e8e8e8" stroke="none"/><path d="M993.8 73.5c2.3 1.2 3 3.6 2.5 6.2-.4 2-1.6 3.3-3.2 4.2" stroke-width="1.7"/><path d="M991.3 73.8l3-2.3.3 3.6z" fill="#e8e8e8" stroke-width="1"/><path d="M983.5 106.3h1.3M983.5 109h1.3M983.5 111.7h1.3M986.3 106.3h3.5M986.3 109h3.5M986.3 111.7h3.5" stroke-width="1.3"/><path d="M991.5 114.5l7.5-7.5" stroke-width="2.6"/><path d="M985 119c.2-2.8 1.6-4.5 3.8-4.5 1.3 0 2.2.9 2 2.2-.3 1.8-2.7 2.3-5.8 2.3z" fill="#e8e8e8" stroke-width="1.3"/><path d="M982.5 131.5c1.5-2 4.5-2.3 7-.3-2.5 2-5.5 1.7-7 .3z" fill="#e8e8e8" stroke-width="1.2"/><path d="M989.5 131.5h10" stroke-width="2.4"/><path d="M984 140h8.5" stroke-width="2.4"/><path d="M993 140l6-3.8v7.6z" fill="#e8e8e8" stroke-width="1.3"/><path d="M984.8 177l4.5-13 4.5 13M986.5 172.5h5.6" stroke-width="1.7"/><path d="M997 163.5v14.5" stroke-width="1.2"/><path d="M991.5 186.3h6M993.7 186.3v13.5M996.5 186.3v13.5" stroke-width="1.8"/><path d="M992 186.3a3.5 3.5 0 0 0 0 7z" fill="#e8e8e8" stroke-width="1.5"/><path d="M991.5 219.5l6.5 3.5v7.5l-6.5 3.5-6.5-3.5v-7.5zM985 223l6.5 3.5 6.5-3.5M991.5 226.5v7.5" stroke-width="1.5"/><path d="M985 223l6.5 3.5v7.5l-6.5-3.5z" fill="#777" stroke="none"/><path d="M1017.5 70.5h14M1017.5 75.5h14M1017.5 80.5h14" stroke-width="1.6"/><circle cx="1021.5" cy="70.5" r="2" fill="#535353" stroke-width="1.4"/><circle cx="1027.5" cy="75.5" r="2" fill="#535353" stroke-width="1.4"/><circle cx="1022.5" cy="80.5" r="2" fill="#535353" stroke-width="1.4"/></g></svg>
<div class="a" style="left:1043px;top:49px;width:237px;height:638px;background:#424242;"></div>
<svg class="a" style="left:1250px;top:49px" width="30" height="11" viewBox="1250 49 30 11"><path d="M1269.5 51.8l2 1.8-2 1.8M1272.8 51.8l2 1.8-2 1.8" stroke="#e4e4e4" stroke-width="1" fill="none"/></svg>
<div class="a" style="left:1043px;top:60px;width:235px;height:223px;background:#535353;"></div>
<div class="a" style="left:1078px;top:60px;width:200px;height:22px;background:#454545;"></div>
<div class="t" style="left:1050.30px;top:66.00px;font-size:9.00px;font-weight:bold;font-style:normal;color:#f4f4f4;transform:scaleX(0.920);transform-origin:0 0;">Color</div>
<div class="t" style="left:1085.00px;top:66.00px;font-size:9.00px;font-weight:bold;font-style:normal;color:#bdbdbd;transform:scaleX(0.891);transform-origin:0 0;">Swatches</div>
<div class="t" style="left:1136.00px;top:66.00px;font-size:9.00px;font-weight:bold;font-style:normal;color:#bdbdbd;transform:scaleX(0.904);transform-origin:0 0;">Gradients</div>
<div class="t" style="left:1188.70px;top:66.00px;font-size:9.00px;font-weight:bold;font-style:normal;color:#bdbdbd;transform:scaleX(0.908);transform-origin:0 0;">Patterns</div>
<div class="a" style="left:1268px;top:68.5px;width:7px;height:2px;background:#d0d0d0;"></div>
<div class="a" style="left:1268px;top:71.5px;width:7px;height:2px;background:#d0d0d0;"></div>
<div class="a" style="left:1058.5px;top:99px;width:16.5px;height:16.5px;background:#8090e6;border:1px solid #f0f0f0;outline:1px solid #333"></div>
<div class="a" style="left:1049px;top:89.5px;width:19px;height:19px;background:#a98b46;border:1px solid #f0f0f0;box-shadow:inset 0 0 0 1px #333"></div>
<div class="a" style="left:1080px;top:88px;width:156px;height:177px;background:linear-gradient(to bottom,rgba(0,0,0,0),#000),linear-gradient(to right,#fff,#f3a10c)"></div>
<svg class="a" style="left:1167px;top:143px" width="14" height="14" viewBox="0 0 14 14"><circle cx="7" cy="6" r="4" fill="none" stroke="#f2e0b0" stroke-width="1.2"/></svg>
<div class="a" style="left:1249px;top:88px;width:17px;height:177px;background:linear-gradient(to bottom,#ff0000 0%,#ff00ff 16.7%,#0000ff 33.3%,#00ffff 50%,#00ff00 66.7%,#ffff00 83.3%,#ff0000 100%)"></div>
<svg class="a" style="left:1240px;top:239px" width="10" height="12" viewBox="0 0 10 12"><path d="M1.5 1.5l6 4.5-6 4.5z" fill="#fff" stroke="#333" stroke-width="0.8"/></svg>
<div class="a" style="left:1043px;top:283px;width:235px;height:2px;background:#424242;"></div>
<div class="a" style="left:1043px;top:285px;width:235px;height:108px;background:#535353;"></div>
<div class="a" style="left:1106px;top:285px;width:172px;height:22px;background:#454545;"></div>
<div class="t" style="left:1050.30px;top:292.00px;font-size:9.00px;font-weight:bold;font-style:normal;color:#f4f4f4;transform:scaleX(0.912);transform-origin:0 0;">Adjustments</div>
<div class="a" style="left:1268px;top:294px;width:7px;height:2px;background:#d0d0d0;"></div>
<div class="a" style="left:1268px;top:297px;width:7px;height:2px;background:#d0d0d0;"></div>
<div class="t" style="left:1050.30px;top:315.00px;font-size:8.80px;font-weight:normal;font-style:normal;color:#dadada;transform:scaleX(0.977);transform-origin:0 0;">Add an adjustment</div>
<svg class="a" style="left:1060px;top:320px" width="140" height="70" viewBox="1060 320 140 70"><g stroke="#e8e8e8" fill="none" stroke-width="1.2"><circle cx="1088.8" cy="333.6" r="4"/><path d="M1088.8 329.6a4 4 0 0 1 0 8z" fill="#e8e8e8"/><path d="M1088.8 326.6v1.5M1088.8 339.1v1.5M1082 333.6h1.5M1094 333.6h1.5M1084 328.8l1 1M1092.5 337.40000000000003l1 1M1084 338.40000000000003l1-1M1092.5 329.8l1-1" stroke-width="1"/><path d="M1101.5 339.1h14.5v-2l-1-5-1 3-1-6-1 4-1.5-5-1 5-1-4-1 3-1.5-5-1 6-1-3-1 4-1-3z" fill="#e8e8e8" stroke-width="0.6"/><rect x="1122" y="327.6" width="14" height="12" stroke-width="1"/><path d="M1122 331.6h14M1122 335.6h14M1126.7 327.6v12M1131.3 327.6v12" stroke-width="0.5" stroke="#aaa"/><path d="M1123 338.6l12-10" stroke-width="1.2"/><rect x="1142" y="327.6" width="14" height="12" stroke-width="1.2"/><path d="M1142 339.6l14-12v12z" fill="#e8e8e8" stroke="none"/><path d="M1144.5 331.1h3M1146 329.6v3" stroke-width="1"/><path d="M1150 336.1h3" stroke="#333" stroke-width="1"/><path d="M1162.5 328.1h14l-7 12z" stroke-width="1.5"/><rect x="1072" y="350" width="14" height="12" stroke-width="1.2"/><path d="M1073 355h12v6h-12z" fill="#bbb" stroke="none"/><path d="M1075 351v3.5M1078 351v3.5M1081 351v3.5" stroke-width="1"/><path d="M1094 357l2.5 -4 2.5 4a2.5 2.5 0 1 1-5 0zM1099 357l2.5-4 2.5 4a2.5 2.5 0 1 1-5 0z" fill="#e8e8e8" stroke="none"/><path d="M1096.5 352h5" stroke-width="1"/><circle cx="1099" cy="351" r="1.2" stroke-width="1"/><rect x="1112" y="350" width="14" height="12" stroke-width="1.2"/><rect x="1119" y="350" width="7" height="12" fill="#e8e8e8" stroke="none"/><path d="M1132 353h3l1-1.5h4l1 1.5h2v7h-11z" fill="#e8e8e8" stroke="none"/><circle cx="1137.5" cy="356.5" r="2" fill="#535353" stroke="none"/><circle cx="1142.5" cy="360" r="2.8" fill="#535353" stroke-width="1"/><circle cx="1156.5" cy="354.5" r="4.3" fill="#cfcfcf" stroke="none"/><circle cx="1154" cy="358.5" r="4.3" fill="#bfbfbf" stroke="none"/><circle cx="1161" cy="358.5" r="4.3" fill="#adadad" stroke="none"/><rect x="1172" y="350" width="14" height="12" stroke-width="1.2"/><path d="M1172 354h14M1172 358h14M1176.7 350v12M1181.3 350v12" stroke-width="1"/><rect x="1081.8" y="373" width="14" height="12" stroke-width="1.2"/><path d="M1083.8 383c2-6 6-8 10-8" stroke-width="2"/><path d="M1084.8 378h4" stroke-width="1"/><rect x="1101.8" y="373" width="14" height="12" stroke-width="1.2"/><path d="M1102.8 384l12-10v5l-7 5z" fill="#aaa" stroke="none"/><path d="M1102.8 379l5-5h3l-8 7z" fill="#ddd" stroke="none"/><rect x="1122" y="373" width="14" height="12" stroke-width="1.2"/><path d="M1123 382l3-3 2 1 3-4 2 1 2-2v3l-2 2-2-1-3 4-2-1-3 3z" fill="#e8e8e8" stroke="none"/><rect x="1141.8" y="373" width="14" height="12" stroke-width="1.2"/><path d="M1141.8 373l14 12M1155.8 373l-14 12" stroke-width="1"/><path d="M1141.8 373l7 6 7-6z" fill="#999" stroke="none"/><rect x="1162" y="373" width="14" height="12" stroke-width="1.2"/><defs><linearGradient id="g4"><stop offset="0" stop-color="#111"/><stop offset="1" stop-color="#eee"/></linearGradient></defs><rect x="1163" y="374" width="12" height="10" fill="url(#g4)" stroke="none"/></g></svg>
<div class="a" style="left:1043px;top:393px;width:235px;height:3px;background:#424242;"></div>
<div class="a" style="left:1043px;top:396px;width:235px;height:291px;background:#535353;"></div>
<div class="a" style="left:1082px;top:396px;width:196px;height:22px;background:#454545;"></div>
<div class="t" style="left:1050.30px;top:402.00px;font-size:9.00px;font-weight:bold;font-style:normal;color:#f4f4f4;transform:scaleX(0.872);transform-origin:0 0;">Layers</div>
<div class="t" style="left:1089.70px;top:402.00px;font-size:9.00px;font-weight:bold;font-style:normal;color:#bdbdbd;transform:scaleX(0.876);transform-origin:0 0;">Libraries</div>
<div class="t" style="left:1138.00px;top:402.00px;font-size:9.00px;font-weight:bold;font-style:normal;color:#bdbdbd;transform:scaleX(0.864);transform-origin:0 0;">Channels</div>
<div class="t" style="left:1187.80px;top:402.00px;font-size:9.00px;font-weight:bold;font-style:normal;color:#bdbdbd;transform:scaleX(0.881);transform-origin:0 0;">Paths</div>
<div class="a" style="left:1268px;top:405px;width:7px;height:2px;background:#d0d0d0;"></div>
<div class="a" style="left:1268px;top:408px;width:7px;height:2px;background:#d0d0d0;"></div>
<div class="a" style="left:1047px;top:427px;width:70px;height:13px;background:#474747;border-bottom:1px solid #3d3d3d"></div>
<div class="t" style="left:1063.40px;top:431.00px;font-size:8.80px;font-weight:normal;font-style:normal;color:#e6e6e6;transform:scaleX(0.943);transform-origin:0 0;">Kind</div>
<div class="a" style="left:1046px;top:444px;width:222px;height:1px;background:#4a4a4a;"></div>
<div class="a" style="left:1047px;top:450px;width:105px;height:14px;background:#474747;border-bottom:1px solid #3d3d3d"></div>
<div class="t" style="left:1052.20px;top:453.00px;font-size:8.80px;font-weight:normal;font-style:normal;color:#e6e6e6;transform:scaleX(0.958);transform-origin:0 0;">Normal</div>
<div class="t" style="left:1158.60px;top:453.00px;font-size:8.80px;font-weight:normal;font-style:normal;color:#cfcfcf;transform:scaleX(0.941);transform-origin:0 0;">Opacity:</div>
<div class="a" style="left:1194px;top:450px;width:28px;height:14px;background:#474747;border-bottom:1px solid #3d3d3d"></div>
<div class="t" style="left:1195.70px;top:453.00px;font-size:8.80px;font-weight:normal;font-style:normal;color:#e6e6e6;transform:scaleX(0.990);transform-origin:0 0;">100%</div>
<div class="a" style="left:1223px;top:450px;width:11px;height:14px;background:#4a4a4a;border:1px solid #424242"></div>
<div class="a" style="left:1046px;top:467px;width:222px;height:1px;background:#4a4a4a;"></div>
<div class="t" style="left:1047.90px;top:477.00px;font-size:8.80px;font-weight:normal;font-style:normal;color:#cfcfcf;transform:scaleX(0.908);transform-origin:0 0;">Lock:</div>
<div class="t" style="left:1177.00px;top:477.00px;font-size:8.80px;font-weight:normal;font-style:normal;color:#cfcfcf;transform:scaleX(0.877);transform-origin:0 0;">Fill:</div>
<div class="a" style="left:1194px;top:473px;width:28px;height:14px;background:#474747;border-bottom:1px solid #3d3d3d"></div>
<div class="t" style="left:1195.70px;top:477.00px;font-size:8.80px;font-weight:normal;font-style:normal;color:#e6e6e6;transform:scaleX(0.990);transform-origin:0 0;">100%</div>
<div class="a" style="left:1223px;top:473px;width:11px;height:14px;background:#4a4a4a;border:1px solid #424242"></div>
<svg class="a" style="left:1043px;top:418px" width="237" height="270" viewBox="1043 418 237 270"><g stroke="#e6e6e6" fill="none" stroke-width="1.2"><circle cx="1056" cy="432" r="2.8"/><path d="M1058 434l2.5 2.5" stroke-width="1.5"/><path d="M1108.5 432l2.5 2.5 2.5-2.5" stroke="#bbb" stroke-width="1"/><rect x="1127.5" y="427.5" width="11" height="10" stroke-width="1.1"/><path d="M1129 436l2.5-3 1.5 1.5 2-3 2 4.5z" fill="#e6e6e6" stroke="none"/><circle cx="1152.5" cy="433" r="5" fill="#e6e6e6" stroke="none"/><path d="M1149 436.5l7-7v5.5a2.5 2.5 0 0 1-2.5 2.5z" fill="#535353" stroke="none"/><path d="M1168 429v-1.5h10v1.5M1173 427.5v11M1171 438.5h4" stroke-width="1.5"/><rect x="1189" y="428.5" width="9" height="9" stroke-width="1.1"/><rect x="1187.5" y="427" width="3" height="3" fill="#e6e6e6" stroke="none"/><rect x="1196.5" y="427" width="3" height="3" fill="#e6e6e6" stroke="none"/><rect x="1187.5" y="436" width="3" height="3" fill="#e6e6e6" stroke="none"/><rect x="1196.5" y="436" width="3" height="3" fill="#e6e6e6" stroke="none"/><rect x="1208.5" y="431.5" width="9" height="7" fill="#e6e6e6" stroke="none"/><path d="M1210.5 431.5v-2a2.5 2.5 0 0 1 5 0" stroke-width="1.2"/><rect x="1213" y="434" width="3" height="3" fill="#535353" stroke="none"/><circle cx="1231.5" cy="430" r="3.2" fill="#f0f0f0" stroke="none"/><rect x="1230" y="434" width="3" height="5" fill="#3d3d3d" stroke="none"/></g></svg>
<svg class="a" style="left:1043px;top:418px" width="237" height="270" viewBox="1043 418 237 270"><g stroke="#e6e6e6" fill="none" stroke-width="1.2"><path d="M1145 456l2.5 2.5 2.5-2.5M1226 456l2.5 2.5 2.5-2.5M1226 479l2.5 2.5 2.5-2.5" stroke="#bbb" stroke-width="1"/><rect x="1075" y="475" width="10" height="10" fill="#e6e6e6" stroke="none"/><path d="M1077.5 477.5h2v2h-2zM1080.5 480.5h2v2h-2zM1077.5 480.5h0M1081 477h1.5v1.5H1081zM1076.5 482h1.5v1.5h-1.5z" fill="#444" stroke="none"/><path d="M1095 485c0-2 .8-3.5 2.3-3.5 1 0 1.6.6 1.4 1.5-.3 1.5-2 2-3.7 2zM1098 481.5l5-6.5" stroke-width="1.6"/><path d="M1116.4 474.5v11M1111 480h11" stroke-width="1.3"/><path d="M1114.6 476.5l1.8-2 1.8 2M1114.6 483.5l1.8 2 1.8-2M1113 478.2l-2 1.8 2 1.8M1120 478.2l2 1.8-2 1.8" stroke-width="1"/><path d="M1129.5 476.5h8M1130.5 475v10.5h10M1137.5 476.5l3 3" stroke-width="1.1"/><rect x="1148.5" y="479" width="9" height="7" fill="#e6e6e6" stroke="none"/><path d="M1150.5 479v-2a2.5 2.5 0 0 1 5 0v2" stroke-width="1.3"/><rect x="1152" y="481.5" width="2" height="2.5" fill="#535353" stroke="none"/></g></svg>
<div class="a" style="left:1043px;top:489px;width:222px;height:176px;background:#535353;"></div>
<div class="a" style="left:1067.5px;top:489px;width:1px;height:176px;background:#4e4e4e;"></div>
<div class="a" style="left:1265px;top:489px;width:12px;height:176px;background:#4a4a4a;"></div>
<div class="a" style="left:1267px;top:600px;width:9px;height:51px;background:#5c5c5c;"></div>
<svg class="a" style="left:1043px;top:485px" width="237" height="205" viewBox="1043 485 237 205"><g stroke="none"><path d="M1086.5 491.5q3.2 2.6 6.4 0" stroke="#e0e0e0" stroke-width="1.3" fill="none"/><path d="M1098.6 507.5c1.5-2.6 3.3-3.2 5.2-3.2s3.7.6 5.2 3.2c-1.5 2.6-3.3 3.2-5.2 3.2s-3.7-.6-5.2-3.2z" fill="#ececec"/><circle cx="1103.8" cy="507.5" r="1.6" fill="#535353"/><path d="M1050.1 525c1.5-2.6 3.3-3.2 5.2-3.2s3.7.6 5.2 3.2c-1.5 2.6-3.3 3.2-5.2 3.2s-3.7-.6-5.2-3.2z" fill="#ececec"/><circle cx="1055.3" cy="525" r="1.6" fill="#535353"/><rect x="1071.7" y="520.5" width="25" height="8.8" fill="#fafafa" stroke="#333" stroke-width="0.6"/><rect x="1074.0" y="523.5" width="2.2" height="2.2" fill="#aaa"/><rect x="1078.2" y="523.5" width="2.2" height="2.2" fill="#aaa"/><rect x="1082.4" y="523.5" width="2.2" height="2.2" fill="#aaa"/><rect x="1086.6" y="523.5" width="2.2" height="2.2" fill="#aaa"/><rect x="1090.8" y="523.5" width="2.2" height="2.2" fill="#aaa"/><text x="1244" y="528.3" font-family="Liberation Serif" font-style="italic" font-size="11" fill="#d0d0d0">fx</text><rect x="1257" y="517" width="8" height="16" fill="#4a4a4a"/><path d="M1259 526l2-2 2 2" stroke="#cfcfcf" stroke-width="1" fill="none"/><path d="M1084.3 541.7c1.5-2.6 3.3-3.2 5.2-3.2s3.7.6 5.2 3.2c-1.5 2.6-3.3 3.2-5.2 3.2s-3.7-.6-5.2-3.2z" fill="#ececec"/><circle cx="1089.5" cy="541.7" r="1.6" fill="#535353"/><path d="M1098.6 556.7c1.5-2.6 3.3-3.2 5.2-3.2s3.7.6 5.2 3.2c-1.5 2.6-3.3 3.2-5.2 3.2s-3.7-.6-5.2-3.2z" fill="#ececec"/><circle cx="1103.8" cy="556.7" r="1.6" fill="#535353"/><path d="M1098.6 572.7c1.5-2.6 3.3-3.2 5.2-3.2s3.7.6 5.2 3.2c-1.5 2.6-3.3 3.2-5.2 3.2s-3.7-.6-5.2-3.2z" fill="#ececec"/><circle cx="1103.8" cy="572.7" r="1.6" fill="#535353"/><path d="M1050.1 591c1.5-2.6 3.3-3.2 5.2-3.2s3.7.6 5.2 3.2c-1.5 2.6-3.3 3.2-5.2 3.2s-3.7-.6-5.2-3.2z" fill="#ececec"/><circle cx="1055.3" cy="591" r="1.6" fill="#535353"/><rect x="1071.7" y="586.5" width="25" height="8.8" fill="#fafafa" stroke="#333" stroke-width="0.6"/><rect x="1074.0" y="589.5" width="2.2" height="2.2" fill="#aaa"/><rect x="1078.2" y="589.5" width="2.2" height="2.2" fill="#aaa"/><rect x="1082.4" y="589.5" width="2.2" height="2.2" fill="#aaa"/><rect x="1086.6" y="589.5" width="2.2" height="2.2" fill="#aaa"/><rect x="1090.8" y="589.5" width="2.2" height="2.2" fill="#aaa"/><text x="1244" y="594.3" font-family="Liberation Serif" font-style="italic" font-size="11" fill="#d0d0d0">fx</text><rect x="1257" y="583" width="8" height="16" fill="#4a4a4a"/><path d="M1259 592l2-2 2 2" stroke="#cfcfcf" stroke-width="1" fill="none"/><path d="M1084.3 606.7c1.5-2.6 3.3-3.2 5.2-3.2s3.7.6 5.2 3.2c-1.5 2.6-3.3 3.2-5.2 3.2s-3.7-.6-5.2-3.2z" fill="#ececec"/><circle cx="1089.5" cy="606.7" r="1.6" fill="#535353"/><path d="M1098.6 622c1.5-2.6 3.3-3.2 5.2-3.2s3.7.6 5.2 3.2c-1.5 2.6-3.3 3.2-5.2 3.2s-3.7-.6-5.2-3.2z" fill="#ececec"/><circle cx="1103.8" cy="622" r="1.6" fill="#535353"/><path d="M1098.6 638c1.5-2.6 3.3-3.2 5.2-3.2s3.7.6 5.2 3.2c-1.5 2.6-3.3 3.2-5.2 3.2s-3.7-.6-5.2-3.2z" fill="#ececec"/><circle cx="1103.8" cy="638" r="1.6" fill="#535353"/><rect x="1071.7" y="652.2" width="25" height="9" fill="#fafafa" stroke="#333" stroke-width="0.6"/><rect x="1244" y="655.2" width="7.5" height="6" fill="none" stroke="#e0e0e0" stroke-width="1.1"/><path d="M1245.8 655.2v-1.5a2 2 0 0 1 4 0v1.5" stroke="#e0e0e0" stroke-width="1.1" fill="none"/><rect x="1247" y="657.5" width="1.5" height="1.8" fill="#e0e0e0"/><path d="M1269 500l2.5-2.5 2.5 2.5M1269 655l2.5 2.5 2.5-2.5" stroke="#888" stroke-width="1" fill="none"/></g></svg>
<div class="t" style="left:1113.80px;top:503.00px;font-size:8.60px;font-weight:normal;font-style:normal;color:#ececec;transform:scaleX(0.954);transform-origin:0 0;">Bevel &amp; Emboss</div>
<div class="t" style="left:1105.70px;top:521.00px;font-size:8.60px;font-weight:normal;font-style:normal;color:#ececec;transform:scaleX(0.952);transform-origin:0 0;">Layer 4</div>
<div class="t" style="left:1099.60px;top:536.00px;font-size:8.60px;font-weight:normal;font-style:normal;color:#ececec;transform:scaleX(0.972);transform-origin:0 0;">Effects</div>
<div class="t" style="left:1113.80px;top:553.00px;font-size:8.60px;font-weight:normal;font-style:normal;color:#ececec;transform:scaleX(0.954);transform-origin:0 0;">Bevel &amp; Emboss</div>
<div class="t" style="left:1113.80px;top:569.00px;font-size:8.60px;font-weight:normal;font-style:normal;color:#ececec;transform:scaleX(0.944);transform-origin:0 0;">Drop Shadow</div>
<div class="t" style="left:1105.70px;top:587.00px;font-size:8.60px;font-weight:normal;font-style:normal;color:#ececec;transform:scaleX(0.952);transform-origin:0 0;">Layer 6</div>
<div class="t" style="left:1099.60px;top:602.00px;font-size:8.60px;font-weight:normal;font-style:normal;color:#ececec;transform:scaleX(0.972);transform-origin:0 0;">Effects</div>
<div class="t" style="left:1113.80px;top:619.00px;font-size:8.60px;font-weight:normal;font-style:normal;color:#ececec;transform:scaleX(0.954);transform-origin:0 0;">Bevel &amp; Emboss</div>
<div class="t" style="left:1113.80px;top:634.00px;font-size:8.60px;font-weight:normal;font-style:normal;color:#ececec;transform:scaleX(0.944);transform-origin:0 0;">Drop Shadow</div>
<div class="t" style="left:1106.00px;top:653.00px;font-size:8.80px;font-weight:normal;font-style:italic;color:#ececec;transform:scaleX(0.953);transform-origin:0 0;">Background</div>
<div class="a" style="left:1043px;top:665px;width:235px;height:22px;background:#535353;border-top:1px solid #4a4a4a"></div>
<svg class="a" style="left:1100px;top:665px" width="170" height="22" viewBox="1100 665 170 22"><g stroke="#e6e6e6" fill="none" stroke-width="1.2"><path d="M1113 674.5h-2a2 2 0 0 0 0 4h2M1118 674.5h2a2 2 0 0 1 0 4h-2M1113.5 676.5h4" stroke="#9a9a9a"/><text x="1132" y="680.5" font-family="Liberation Serif" font-style="italic" font-size="12" fill="#e6e6e6" stroke="none">fx</text><path d="M1142.5 681.5h3l-1.5 1.5z" fill="#e6e6e6" stroke="none"/><rect x="1154" y="671.5" width="12" height="9" fill="#e6e6e6" stroke="none"/><circle cx="1160" cy="676" r="2.6" fill="#444" stroke="none"/><circle cx="1183" cy="676" r="4.3" stroke-width="1.3"/><path d="M1180 679l6-6v3a3 3 0 0 1-3 3z" fill="#e6e6e6" stroke="none"/><path d="M1186.5 681.5h3l-1.5 1.5z" fill="#e6e6e6" stroke="none"/><path d="M1199.5 672h4l1 1.5h6.5v7.5h-11.5z" fill="#e6e6e6" stroke="none"/><path d="M1200.5 675h10" stroke="#666" stroke-width="0.8"/><rect x="1221.5" y="670.5" width="11" height="11" stroke-width="1.2"/><path d="M1227 673.5v5M1224.5 676h5" stroke-width="1.2"/><path d="M1244.5 672.5h10M1247.5 672.5v-1.5h4v1.5M1245.5 672.5l.8 9.5h6.5l.8-9.5M1248 674.5v5.5M1251 674.5v5.5" stroke-width="1.2"/></g></svg>
<div class="a" style="left:0px;top:687px;width:1280px;height:33px;background:#d3d8e0;"></div>
<div class="a" style="left:0px;top:687px;width:1280px;height:1px;background:#e2e6ec;"></div>
<div class="a" style="left:41px;top:688px;width:285px;height:32px;background:#ffffff;"></div>
<div class="a" style="left:658px;top:687px;width:41px;height:33px;background:#eceef2;"></div>
<div class="a" style="left:373px;top:717px;width:75px;height:1px;background:#eef0f4;"></div>
<div class="a" style="left:373px;top:718px;width:33px;height:2px;background:#5a5a5a;"></div>
<div class="a" style="left:414px;top:718px;width:34px;height:2px;background:#5a5a5a;"></div>
<div class="a" style="left:658px;top:718px;width:41px;height:2px;background:#5a5a5a;"></div>
<div class="a" style="left:703px;top:718px;width:35px;height:2px;background:#5a5a5a;"></div>
<div class="a" style="left:744px;top:718px;width:35px;height:2px;background:#5a5a5a;"></div>
<div class="a" style="left:786px;top:718px;width:34px;height:2px;background:#5a5a5a;"></div>
<div class="a" style="left:827px;top:718px;width:35px;height:2px;background:#5a5a5a;"></div>
<div class="a" style="left:869px;top:718px;width:34px;height:2px;background:#5a5a5a;"></div>
<div class="a" style="left:910px;top:718px;width:35px;height:2px;background:#5a5a5a;"></div>
<div class="a" style="left:952px;top:718px;width:34px;height:2px;background:#5a5a5a;"></div>
<svg class="a" style="left:0;top:687px" width="1280" height="33" viewBox="0 687 1280 33"><g fill="#0a0a0a"><path d="M13 697.8l5.8-.8v5.6H13z"/><path d="M19.6 696.9l7.3-1v6.7h-7.3z"/><path d="M13 703.4h5.8v5.6l-5.8-.8z"/><path d="M19.6 703.4h7.3v6.7l-7.3-1z"/></g><circle cx="59" cy="701" r="4.2" fill="none" stroke="#111" stroke-width="1.3"/><path d="M56 704l-5 5" stroke="#111" stroke-width="1.5"/><g stroke="#111" stroke-width="1.1" fill="none"><rect x="341.5" y="699.5" width="8" height="6.5"/><path d="M339.5 697h12M339.5 708.5h12M352.5 696.5v13"/><circle cx="352.5" cy="703" r="0.9" fill="#111"/></g><defs><linearGradient id="eg" x1="0.1" y1="0.9" x2="0.9" y2="0.1"><stop offset="0" stop-color="#0b54a8"/><stop offset="0.45" stop-color="#1a8fdb"/><stop offset="0.75" stop-color="#33c0c8"/><stop offset="1" stop-color="#6ad85a"/></linearGradient></defs><circle cx="389.5" cy="703" r="10.3" fill="url(#eg)"/><path d="M380 708c1.5 4.5 6 6.5 10 6.2 3.5-.3 6.5-2 8-4.5-2.5 1.2-5.5 1.3-8 .2-2.5-1-3.8-3-3.6-5" fill="#0a3f86"/><path d="M386.2 704.8c-.6-2.8 1.3-5 4-5s4.3 2 3.5 4.3c-.4 1.2-1.7 1.4-2.6 1.1.8-.9.7-2.4-.7-2.8-1.5-.4-2.8.8-2.4 2.6.5 2.2 3 3.3 5.5 3.2-2.8 1.2-6.6.2-7.3-3.4z" fill="#f4faff"/><path d="M421 697h7l1.5 2h10.5v12h-19z" fill="#f6c644"/><rect x="421" y="700" width="19" height="11" fill="#fad25a"/><path d="M425.5 711v-5.5h10v5.5h-3v-3h-4v3z" fill="#2a7ad0"/><rect x="423" y="696" width="5.5" height="2" fill="#d4a52a"/><path d="M466 697v-2.5a5 5 0 0 1 10 0v2.5" stroke="#222" stroke-width="2" fill="none"/><rect x="462" y="697" width="19" height="16" fill="#222"/><rect x="467.3" y="701" width="3.8" height="3.8" fill="#f25022"/><rect x="471.7" y="701" width="3.8" height="3.8" fill="#7fba00"/><rect x="467.3" y="705.4" width="3.8" height="3.8" fill="#00a4ef"/><rect x="471.7" y="705.4" width="3.8" height="3.8" fill="#ffb900"/><path d="M506 697.5l8.5-3.5 6 2v14l-6 2.5-8.5-3v-12z" fill="#d83b01"/><path d="M510 699.5l4.5-1v11.5l-4.5-1.5z" fill="#fff"/><path d="M514.5 694l6 2v14l-6 2.5z" fill="#ea3e23"/><path d="M544 701l10.5-7 10.5 7v12h-21z" fill="#1a73c4"/><path d="M544 701l10.5 6.5 10.5-6.5" fill="#5bb0ee"/><rect x="544" y="701" width="21" height="12" fill="#2b8de0" opacity="0.7"/><rect x="554.5" y="703" width="21" height="12" rx="6" fill="#f2f2f2" stroke="#333" stroke-width="1"/><text x="556.5" y="712.5" font-family="Liberation Sans" font-weight="bold" font-size="9" fill="#111">99+</text><rect x="586.5" y="693" width="19.5" height="20" fill="#3a3024"/><text x="590" y="710" font-family="Liberation Sans" font-weight="bold" font-size="17" fill="#e8a530">S</text><rect x="627.5" y="693" width="19.5" height="20" fill="#5a5d60"/><text x="630" y="701" font-family="Liberation Sans" font-size="5" fill="#ddd">prime</text><text x="630" y="706" font-family="Liberation Sans" font-size="5" fill="#ddd">video</text><rect x="669" y="693" width="19.5" height="20" rx="2.5" fill="#001e36"/><text x="672" y="707.5" font-family="Liberation Sans" font-weight="bold" font-size="10.5" fill="#31a8ff">Ps</text><rect x="709.5" y="696.5" width="21" height="14.5" rx="4" fill="#ff0000"/><path d="M717.5 700.2l6 3.5-6 3.5z" fill="#fff"/><path d="M755 697h15a3 3 0 0 1 0 6h-13a2 2 0 0 0 0 4h12a3 3 0 0 1 0 6h-15a3 3 0 0 1 0-6h2" fill="#da3540"/><path d="M752 703.5h17v3h-17z" fill="#da3540"/><rect x="793" y="697.5" width="19" height="13" fill="#f0f0f0" stroke="#aaa" stroke-width="0.8"/><path d="M796 706l3-4 2 2 3-5 3 4 3-2" stroke="#999" stroke-width="1" fill="none"/><rect x="834" y="694.5" width="19" height="17.5" rx="1.5" fill="#2990e6"/><rect x="834" y="694.5" width="19" height="4" fill="#1b6fc2"/><rect x="836.5" y="701.0" width="2.4" height="2.2" fill="#fff"/><rect x="840.5" y="701.0" width="2.4" height="2.2" fill="#fff"/><rect x="844.5" y="701.0" width="2.4" height="2.2" fill="#fff"/><rect x="848.5" y="701.0" width="2.4" height="2.2" fill="#fff"/><rect x="836.5" y="704.5" width="2.4" height="2.2" fill="#fff"/><rect x="840.5" y="704.5" width="2.4" height="2.2" fill="#fff"/><rect x="844.5" y="704.5" width="2.4" height="2.2" fill="#fff"/><rect x="848.5" y="704.5" width="2.4" height="2.2" fill="#fff"/><rect x="836.5" y="708.0" width="2.4" height="2.2" fill="#fff"/><rect x="840.5" y="708.0" width="2.4" height="2.2" fill="#fff"/><rect x="844.5" y="708.0" width="2.4" height="2.2" fill="#fff"/><rect x="848.5" y="708.0" width="2.4" height="2.2" fill="#fff"/><rect x="875.5" y="694" width="19" height="19" fill="#1f78d1"/><path d="M875.5 713l7-9 5 6 3-3 4 6z" fill="#0b3a78"/><circle cx="889" cy="699" r="1.8" fill="#fff"/><rect x="916.5" y="693.5" width="20.5" height="20" fill="#0a1f3b"/><path d="M919 697h15" stroke="#fff" stroke-width="2" stroke-dasharray="2 1.5"/><path d="M920 700l6.5 12 6.5-12h-3.5l-3 6.5-3-6.5z" fill="#58c0f0"/><rect x="958" y="693" width="20" height="20" fill="#b0141b"/><circle cx="970" cy="703" r="5.3" fill="none" stroke="#fff" stroke-width="1.8"/><circle cx="970" cy="703" r="1.9" fill="#fff"/><path d="M962 699a8 8 0 0 0 0 8M964.5 700.5a5 5 0 0 0 0 5" stroke="#fff" stroke-width="1.2" fill="none"/><g stroke="#111" stroke-width="1.1" fill="none"><circle cx="1031" cy="702" r="2.2"/><path d="M1027.5 709c0-2.5 1.5-4.3 3.5-4.3s3.5 1.8 3.5 4.3"/><circle cx="1036.5" cy="699" r="2"/><path d="M1034 701.5c1.5-.5 4.5 0 5 3"/><path d="M1058.5 706l5.5-5.5 5.5 5.5" stroke-width="1.3"/><rect x="1080.5" y="699.5" width="7" height="8"/><path d="M1087.5 702l2-1.5v6l-2-1.5M1082 697.5a6 6 0 0 1 4 0M1082 709.5a6 6 0 0 0 4 0"/><rect x="1098" y="700.5" width="12" height="6.5" fill="#111"/><path d="M1096.5 702.5v3"/><path d="M1096 699l3-1" /><path d="M1119 708.5a11 11 0 0 1 11-11M1122 708.5a8 8 0 0 1 8-8M1125 708.5a5 5 0 0 1 5-5"/><circle cx="1129" cy="707.5" r="1" fill="#111"/><path d="M1136.5 701h3l4-3.5v12l-4-3.5h-3z"/><path d="M1146 700a5 5 0 0 1 0 7M1148.5 698a8 8 0 0 1 0 11"/><path d="M1161 709l1.5-3.5 7-9 2 2-7 8.5zM1162.5 705.5c-2 0-3 3-1 3.5M1166 704c2 2 4 0 7-1" /><path d="M1246.5 696.5h14v10h-7l-2 2.5-2-2.5h-3z" stroke-width="1.2"/></g></svg>
<div class="t" style="left:73.50px;top:698.00px;font-size:12.30px;font-weight:normal;font-style:normal;color:#262626;-webkit-text-stroke:0">Type here to search</div>
<div class="t" style="left:1189.00px;top:692.00px;font-size:10.40px;font-weight:normal;font-style:normal;color:#111111;transform:scaleX(0.954);transform-origin:0 0;-webkit-text-stroke:0.1px #111">9:05 AM</div>
<div class="t" style="left:1188.00px;top:708.00px;font-size:10.40px;font-weight:normal;font-style:normal;color:#111111;transform:scaleX(0.978);transform-origin:0 0;-webkit-text-stroke:0.1px #111">6/8/2021</div>
<div class="a" style="left:1276px;top:687px;width:1px;height:33px;background:#b8bcc4;"></div>
</body></html>
